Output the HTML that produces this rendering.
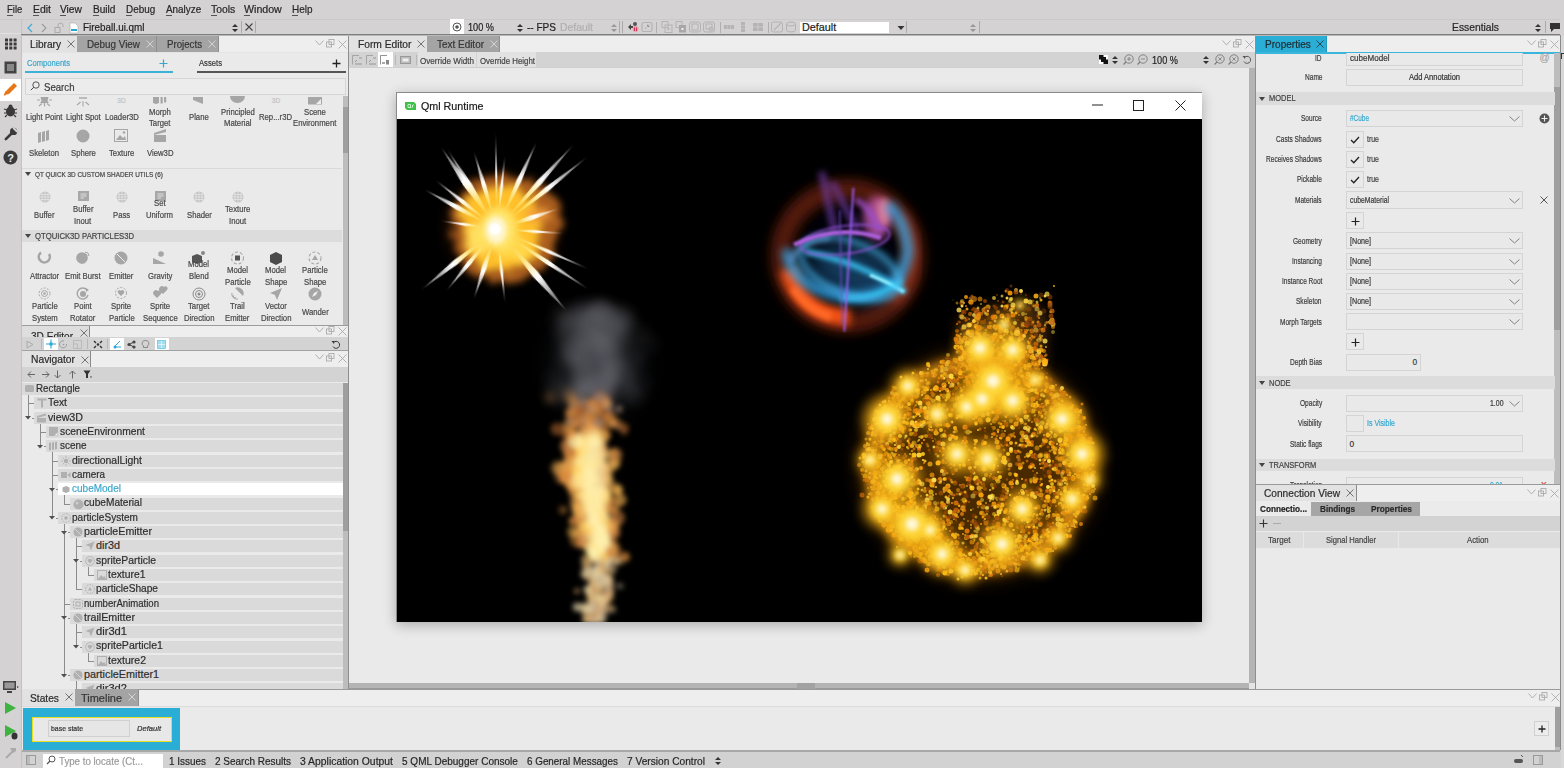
<!DOCTYPE html><html><head><meta charset="utf-8"><style>
*{margin:0;padding:0;box-sizing:border-box}
html,body{width:1564px;height:768px;overflow:hidden;background:#d4d2d3;font-family:"Liberation Sans",sans-serif}
.a{position:absolute}
.t{position:absolute;white-space:nowrap;line-height:1;transform-origin:0 0;-webkit-text-stroke:0.2px currentColor}
svg{position:absolute;overflow:visible}
</style></head><body>
<div class="a" style="left:0px;top:0px;width:1564px;height:19px;background:#d4d2d3;"></div>
<div class="t" style="left:7.20px;top:4.16px;font-size:10.8px;color:#262626;transform:scaleX(0.879);">File</div>
<div class="a" style="left:7.2px;top:14.5px;width:6px;height:1px;background:#555;"></div>
<div class="t" style="left:32.70px;top:4.16px;font-size:10.8px;color:#262626;transform:scaleX(0.967);">Edit</div>
<div class="a" style="left:32.7px;top:14.5px;width:6px;height:1px;background:#555;"></div>
<div class="t" style="left:60.30px;top:4.16px;font-size:10.8px;color:#262626;transform:scaleX(0.943);">View</div>
<div class="a" style="left:60.3px;top:14.5px;width:6px;height:1px;background:#555;"></div>
<div class="t" style="left:93.00px;top:4.16px;font-size:10.8px;color:#262626;transform:scaleX(0.937);">Build</div>
<div class="a" style="left:93px;top:14.5px;width:6px;height:1px;background:#555;"></div>
<div class="t" style="left:126.20px;top:4.16px;font-size:10.8px;color:#262626;transform:scaleX(0.917);">Debug</div>
<div class="a" style="left:126.2px;top:14.5px;width:6px;height:1px;background:#555;"></div>
<div class="t" style="left:165.60px;top:4.16px;font-size:10.8px;color:#262626;transform:scaleX(0.916);">Analyze</div>
<div class="a" style="left:165.6px;top:14.5px;width:6px;height:1px;background:#555;"></div>
<div class="t" style="left:210.60px;top:4.16px;font-size:10.8px;color:#262626;transform:scaleX(0.960);">Tools</div>
<div class="a" style="left:210.6px;top:14.5px;width:6px;height:1px;background:#555;"></div>
<div class="t" style="left:244.40px;top:4.16px;font-size:10.8px;color:#262626;transform:scaleX(0.984);">Window</div>
<div class="a" style="left:244.4px;top:14.5px;width:6px;height:1px;background:#555;"></div>
<div class="t" style="left:292.40px;top:4.16px;font-size:10.8px;color:#262626;transform:scaleX(0.923);">Help</div>
<div class="a" style="left:292.4px;top:14.5px;width:6px;height:1px;background:#555;"></div>
<div class="a" style="left:0px;top:19px;width:1564px;height:1px;background:#cbc9ca;"></div>
<div class="a" style="left:0px;top:33px;width:21px;height:1px;background:#e2e2e2;"></div>
<div class="a" style="left:21px;top:19px;width:1px;height:16px;background:#c4c4c4;"></div>
<div class="a" style="left:21px;top:34px;width:1543px;height:1px;background:#7d7d7d;"></div>
<div class="a" style="left:21px;top:35px;width:1543px;height:1px;background:#b8b8b8;"></div>
<svg style="left:26px;top:23px;" width="8" height="10" viewBox="0 0 8 10"><path d="M6 1 L2 5 L6 9" stroke="#3fa9d8" stroke-width="1.2" fill="none"/></svg>
<svg style="left:40px;top:23px;" width="8" height="10" viewBox="0 0 8 10"><path d="M2 1 L6 5 L2 9" stroke="#9a9a9a" stroke-width="1.1" fill="none"/></svg>
<svg style="left:54px;top:23px;" width="10" height="10" viewBox="0 0 10 10"><rect x="1" y="4.5" width="5" height="5" fill="none" stroke="#aaa"/><path d="M4 4 V2.5 A2.5 2.5 0 0 1 9 2.5 V4" stroke="#aaa" fill="none"/></svg>
<svg style="left:69px;top:22px;" width="10" height="12" viewBox="0 0 10 12"><path d="M1 1 H6 L9 4 V11 H1 Z" fill="#fff" stroke="#aaa" stroke-width=".6"/><rect x="2" y="7" width="6" height="2" fill="#2aa4c8"/></svg>
<div class="t" style="left:83.00px;top:22.16px;font-size:10.8px;color:#222;transform:scaleX(0.915);">Fireball.ui.qml</div>
<svg style="left:231px;top:23px;" width="8" height="10" viewBox="0 0 8 10"><path d="M1 4 L4 1 L7 4 Z M1 6 L4 9 L7 6 Z" fill="#333"/></svg>
<div class="a" style="left:241px;top:21px;width:1px;height:12px;background:#aaa;"></div>
<svg style="left:245px;top:23px;" width="8" height="8" viewBox="0 0 8 8"><path d="M0.5 0.5 L7.5 7.5 M7.5 0.5 L0.5 7.5" stroke="#444" stroke-width="1.1"/></svg>
<div class="a" style="left:255px;top:21px;width:1px;height:12px;background:#aaa;"></div>
<div class="a" style="left:450px;top:19px;width:14px;height:15px;background:#ffffff;"></div>
<svg style="left:452px;top:22px;" width="10" height="10" viewBox="0 0 10 10"><circle cx="5" cy="5" r="4" fill="none" stroke="#555" stroke-width="1"/><circle cx="5" cy="5" r="1.8" fill="#555"/></svg>
<div class="t" style="left:468.00px;top:21.86px;font-size:10.8px;color:#222;transform:scaleX(0.849);">100 %</div>
<svg style="left:516px;top:23px;" width="8" height="10" viewBox="0 0 8 10"><path d="M1 4 L4 1 L7 4 Z M1 6 L4 9 L7 6 Z" fill="#333"/></svg>
<div class="t" style="left:527.00px;top:21.86px;font-size:10.8px;color:#222;transform:scaleX(0.930);">-- FPS</div>
<div class="t" style="left:560.00px;top:21.86px;font-size:10.8px;color:#b0b0b0;transform:scaleX(0.964);">Default</div>
<svg style="left:610px;top:23px;" width="8" height="10" viewBox="0 0 8 10"><path d="M1 4 L4 1 L7 4 Z M1 6 L4 9 L7 6 Z" fill="#999"/></svg>
<div class="a" style="left:619px;top:21px;width:1px;height:12px;background:#aaa;"></div>
<div class="a" style="left:622px;top:21px;width:1px;height:12px;background:#aaa;"></div>
<svg style="left:626.6px;top:21px;" width="12" height="12" viewBox="0 0 12 12"><path d="M1 6 L4 3 V5 H6 V7 H4 V9 Z" fill="#444"/><circle cx="8" cy="3" r="2" fill="#555"/><circle cx="8.5" cy="8" r="3" fill="#e8a0a0"/><path d="M7.5 6.5 V10 M9.5 6.5 V10" stroke="#d03060" stroke-width="1"/></svg>
<svg style="left:640.7px;top:21px;" width="12" height="12" viewBox="0 0 12 12"><rect x="1" y="1.5" width="10" height="9" rx="1.5" fill="none" stroke="#b4b4b4" stroke-width="1.2"/><path d="M4 8 L8 4 M6 4 H8 V6" stroke="#b4b4b4" stroke-width="1"/></svg>
<div class="a" style="left:656px;top:22px;width:1px;height:11px;background:#b0b0b0;"></div>
<svg style="left:660.5px;top:21px;" width="12" height="12" viewBox="0 0 12 12"><rect x="1" y="0.5" width="6" height="6" fill="none" stroke="#b4b4b4"/><rect x="4" y="4" width="7" height="7.5" fill="none" stroke="#b4b4b4"/><rect x="6.5" y="7" width="2" height="2" fill="#b4b4b4"/></svg>
<svg style="left:674.6px;top:21px;" width="12" height="12" viewBox="0 0 12 12"><rect x="1" y="0.5" width="6" height="6" fill="none" stroke="#b4b4b4"/><rect x="4" y="4" width="7" height="7.5" fill="#a8a8a8"/><rect x="6.5" y="7" width="2" height="2" fill="#eee"/></svg>
<svg style="left:688.6px;top:21px;" width="12" height="12" viewBox="0 0 12 12"><rect x="0.5" y="1" width="11" height="10" rx="2" fill="none" stroke="#b4b4b4"/><rect x="3" y="3" width="6" height="6" fill="none" stroke="#b4b4b4"/></svg>
<svg style="left:702.7px;top:21px;" width="12" height="12" viewBox="0 0 12 12"><rect x="0.5" y="1" width="11" height="10" rx="2" fill="none" stroke="#b4b4b4"/><rect x="3" y="3" width="6" height="5" fill="none" stroke="#b4b4b4"/><circle cx="8" cy="8" r="2" fill="none" stroke="#b4b4b4"/></svg>
<div class="a" style="left:719.6px;top:22px;width:1px;height:11px;background:#b0b0b0;"></div>
<svg style="left:723.2px;top:21px;" width="12" height="12" viewBox="0 0 12 12"><rect x="1" y="4" width="10" height="4" fill="#b4b4b4"/><path d="M4.3 4 V8 M7.6 4 V8" stroke="#d4d2d3" stroke-width="0.6"/></svg>
<svg style="left:737.2px;top:21px;" width="12" height="12" viewBox="0 0 12 12"><rect x="4" y="1" width="4" height="10" fill="#b4b4b4"/><path d="M4 4.3 H8 M4 7.6 H8" stroke="#d4d2d3" stroke-width="0.6"/></svg>
<svg style="left:752px;top:21px;" width="12" height="12" viewBox="0 0 12 12"><rect x="1" y="2" width="10" height="8" fill="#b4b4b4"/><path d="M6 2 V10 M1 6 H11" stroke="#d4d2d3" stroke-width="0.8"/></svg>
<div class="a" style="left:767.5px;top:22px;width:1px;height:11px;background:#b0b0b0;"></div>
<svg style="left:771px;top:21px;" width="12" height="12" viewBox="0 0 12 12"><rect x="0.5" y="1" width="11" height="10" rx="2" fill="none" stroke="#b4b4b4"/><path d="M3 9 L10 2" stroke="#b4b4b4" stroke-width="1.1"/></svg>
<svg style="left:784.5px;top:21px;" width="12" height="12" viewBox="0 0 12 12"><path d="M1.5 3 V9 Q1.5 11 6 11 Q10.5 11 10.5 9 V3" fill="none" stroke="#b4b4b4"/><ellipse cx="6" cy="3" rx="4.5" ry="2" fill="none" stroke="#b4b4b4"/></svg>
<div class="a" style="left:800px;top:22px;width:89px;height:11px;background:#ffffff;"></div>
<div class="t" style="left:802.00px;top:21.86px;font-size:10.8px;color:#222;">Default</div>
<svg style="left:897px;top:25px;" width="8" height="6" viewBox="0 0 8 6"><path d="M0.5 1 L7.5 1 L4 5 Z" fill="#333"/></svg>
<div class="a" style="left:906px;top:21px;width:1px;height:12px;background:#aaa;"></div>
<svg style="left:969px;top:23px;" width="8" height="10" viewBox="0 0 8 10"><path d="M1 4 L4 1 L7 4 Z M1 6 L4 9 L7 6 Z" fill="#999"/></svg>
<div class="a" style="left:979px;top:21px;width:1px;height:12px;background:#aaa;"></div>
<div class="t" style="left:1452.00px;top:21.86px;font-size:10.8px;color:#262626;transform:scaleX(0.955);">Essentials</div>
<svg style="left:1534px;top:23px;" width="8" height="10" viewBox="0 0 8 10"><path d="M1 4 L4 1 L7 4 Z M1 6 L4 9 L7 6 Z" fill="#333"/></svg>
<div class="a" style="left:1545px;top:21px;width:1px;height:12px;background:#aaa;"></div>
<svg style="left:1549px;top:22px;" width="12" height="11" viewBox="0 0 12 11"><path d="M1 1 H11 V7 H5 L2 10 V7 H1 Z" fill="#333"/></svg>
<div class="a" style="left:1560px;top:19px;width:4px;height:749px;background:#d4d2d3;"></div>
<div class="a" style="left:0px;top:35px;width:21px;height:733px;background:#d4d2d3;"></div>
<div class="a" style="left:21px;top:35px;width:1px;height:733px;background:#c2c2c2;"></div>
<svg style="left:4px;top:38px;" width="14" height="12" viewBox="0 0 14 12"><rect x="1.0" y="0.5" width="3" height="3" fill="#3a3a3a"/><rect x="1.0" y="4.5" width="3" height="3" fill="#3a3a3a"/><rect x="1.0" y="8.5" width="3" height="3" fill="#3a3a3a"/><rect x="5.3" y="0.5" width="3" height="3" fill="#3a3a3a"/><rect x="5.3" y="4.5" width="3" height="3" fill="#3a3a3a"/><rect x="5.3" y="8.5" width="3" height="3" fill="#3a3a3a"/><rect x="9.6" y="0.5" width="3" height="3" fill="#3a3a3a"/><rect x="9.6" y="4.5" width="3" height="3" fill="#3a3a3a"/><rect x="9.6" y="8.5" width="3" height="3" fill="#3a3a3a"/></svg>
<svg style="left:4px;top:61px;" width="13" height="13" viewBox="0 0 13 13"><rect x="0.5" y="0.5" width="12" height="12" fill="#444"/><rect x="3" y="3" width="7" height="7" fill="#888"/></svg>
<div class="a" style="left:0px;top:79px;width:21px;height:22px;background:#ffffff;"></div>
<svg style="left:3px;top:81px;" width="15" height="16" viewBox="0 0 15 16"><path d="M2 14 L3 10 L11 2 L14 5 L6 13 Z" fill="#e8771a"/><path d="M1.5 14.5 L3 10.5" stroke="#e8771a" stroke-width="1.5"/></svg>
<svg style="left:4px;top:104px;" width="13" height="13" viewBox="0 0 13 13"><ellipse cx="6.5" cy="7.5" rx="4.5" ry="5" fill="#3a3a3a"/><circle cx="6.5" cy="2.5" r="2" fill="#3a3a3a"/><path d="M0 5 L3 6 M13 5 L10 6 M0 9 L2.5 9 M13 9 L10.5 9 M1 13 L3 11 M12 13 L10 11" stroke="#3a3a3a" stroke-width="1.2"/></svg>
<svg style="left:4px;top:127px;" width="14" height="14" viewBox="0 0 14 14"><path d="M1.8 12.2 L7.5 6.5" stroke="#3a3a3a" stroke-width="2.6" stroke-linecap="round"/><circle cx="9.6" cy="4.4" r="3.6" fill="#3a3a3a"/><path d="M10 0 L14 4 L12.5 5.5 L8.5 1.5 Z" fill="#d4d2d3"/></svg>
<svg style="left:3px;top:150px;" width="15" height="15" viewBox="0 0 15 15"><circle cx="7.5" cy="7.5" r="7" fill="#3a3a3a"/><text x="7.5" y="11.5" font-size="11" font-weight="bold" text-anchor="middle" fill="#eaeaea" font-family="Liberation Sans">?</text></svg>
<svg style="left:2px;top:680px;" width="16" height="14" viewBox="0 0 16 14"><rect x="1" y="1" width="13" height="9" fill="#444"/><rect x="2.5" y="2.5" width="10" height="6" fill="#999"/><rect x="5" y="11" width="5" height="2" fill="#444"/><path d="M15 6 L17 7 L15 8Z" fill="#444"/></svg>
<svg style="left:4px;top:701px;" width="13" height="14" viewBox="0 0 13 14"><path d="M1 1 L12 7 L1 13 Z" fill="#3fb33f"/></svg>
<svg style="left:4px;top:724px;" width="14" height="16" viewBox="0 0 14 16"><path d="M1 1 L12 7 L1 13 Z" fill="#3fb33f"/><ellipse cx="10.5" cy="12" rx="3" ry="3.5" fill="#333"/></svg>
<svg style="left:4px;top:746px;" width="13" height="14" viewBox="0 0 13 14"><path d="M2 12 L9 5" stroke="#aaa" stroke-width="2"/><path d="M6 2 L12 2 L12 5 L9 7 Z" fill="#aaa"/></svg>
<div class="a" style="left:22px;top:750px;width:1538px;height:2px;background:#a8a8a8;"></div>
<div class="a" style="left:22px;top:752px;width:1538px;height:16px;background:#d2d2d2;"></div>
<svg style="left:26px;top:755px;" width="10" height="10" viewBox="0 0 10 10"><rect x="0.5" y="0.5" width="9" height="9" fill="none" stroke="#999"/><rect x="1" y="1" width="3" height="8" fill="#bbb"/></svg>
<div class="a" style="left:43px;top:754px;width:120px;height:14px;background:#ffffff;"></div>
<svg style="left:46px;top:755px;" width="10" height="10" viewBox="0 0 10 10"><circle cx="6" cy="4" r="3" fill="none" stroke="#555" stroke-width="1"/><path d="M4 6 L1 9" stroke="#555" stroke-width="1.3"/></svg>
<div class="t" style="left:59.00px;top:755.86px;font-size:10.8px;color:#9a9a9a;transform:scaleX(0.897);">Type to locate (Ct...</div>
<div class="t" style="left:169.00px;top:755.86px;font-size:10.8px;color:#262626;transform:scaleX(0.920);">1 Issues</div>
<div class="t" style="left:215.00px;top:755.86px;font-size:10.8px;color:#262626;transform:scaleX(0.924);">2 Search Results</div>
<div class="t" style="left:300.00px;top:755.86px;font-size:10.8px;color:#262626;transform:scaleX(0.962);">3 Application Output</div>
<div class="t" style="left:402.00px;top:755.86px;font-size:10.8px;color:#262626;transform:scaleX(0.927);">5 QML Debugger Console</div>
<div class="t" style="left:527.00px;top:755.86px;font-size:10.8px;color:#262626;transform:scaleX(0.913);">6 General Messages</div>
<div class="t" style="left:627.00px;top:755.86px;font-size:10.8px;color:#262626;transform:scaleX(0.941);">7 Version Control</div>
<svg style="left:714px;top:756px;" width="8" height="10" viewBox="0 0 8 10"><path d="M1 4 L4 1 L7 4 Z M1 6 L4 9 L7 6 Z" fill="#333"/></svg>
<svg style="left:1513px;top:754px;" width="12" height="10" viewBox="0 0 12 10"><rect x="1" y="5" width="9" height="4" rx="2" fill="#555"/><path d="M8 1 L10 3" stroke="#555"/></svg>
<svg style="left:1533px;top:755px;" width="10" height="10" viewBox="0 0 10 10"><rect x="0.5" y="0.5" width="9" height="9" fill="none" stroke="#999"/><rect x="6" y="1" width="3" height="8" fill="#bbb"/></svg>
<div class="a" style="left:22px;top:36px;width:326px;height:289px;background:#eaeaea;"></div>
<div class="a" style="left:22px;top:36px;width:326px;height:16px;background:#eeeeee;"></div>
<div class="a" style="left:22px;top:36px;width:55px;height:16px;background:#e2e2e2;"></div>
<div class="t" style="left:30.00px;top:39.36px;font-size:10.8px;color:#2a2a2a;transform:scaleX(0.939);">Library</div>
<svg style="left:67px;top:40px;" width="8" height="8" viewBox="0 0 8 8"><path d="M0.5 0.5 L7.5 7.5 M7.5 0.5 L0.5 7.5" stroke="#666" stroke-width="0.9"/></svg>
<div class="a" style="left:77px;top:36px;width:80px;height:16px;background:#a4a4a4;"></div>
<div class="a" style="left:156px;top:36px;width:1px;height:16px;background:#8f8f8f;"></div>
<div class="t" style="left:86.50px;top:39.36px;font-size:10.8px;color:#353535;transform:scaleX(0.913);">Debug View</div>
<svg style="left:146px;top:40px;" width="8" height="8" viewBox="0 0 8 8"><path d="M0.5 0.5 L7.5 7.5 M7.5 0.5 L0.5 7.5" stroke="#d8d8d8" stroke-width="0.9"/></svg>
<div class="a" style="left:157px;top:36px;width:62px;height:16px;background:#a4a4a4;"></div>
<div class="a" style="left:218px;top:36px;width:1px;height:16px;background:#8f8f8f;"></div>
<div class="t" style="left:166.50px;top:39.36px;font-size:10.8px;color:#353535;transform:scaleX(0.897);">Projects</div>
<svg style="left:208px;top:40px;" width="8" height="8" viewBox="0 0 8 8"><path d="M0.5 0.5 L7.5 7.5 M7.5 0.5 L0.5 7.5" stroke="#d8d8d8" stroke-width="0.9"/></svg>
<svg style="left:315px;top:40px;" width="9" height="6" viewBox="0 0 9 6"><path d="M0.5 0.5 L4.5 5 L8.5 0.5" stroke="#aaa" fill="none" stroke-width="0.9"/></svg>
<svg style="left:326px;top:39px;" width="9" height="9" viewBox="0 0 9 9"><rect x="0.5" y="3" width="5" height="5" fill="none" stroke="#aaa" stroke-width="0.9"/><rect x="3" y="0.5" width="5" height="5" fill="none" stroke="#aaa" stroke-width="0.9"/></svg>
<svg style="left:337.5px;top:39.5px;" width="9" height="9" viewBox="0 0 9 9"><path d="M0.5 0.5 L8.5 8.5 M8.5 0.5 L0.5 8.5" stroke="#aaa" stroke-width="0.9"/></svg>
<div class="a" style="left:22px;top:52px;width:326px;height:1px;background:#e4e4e4;"></div>
<div class="t" style="left:27.00px;top:59.30px;font-size:8.5px;color:#3aa6cc;transform:scaleX(0.892);">Components</div>
<svg style="left:159px;top:59px;" width="9" height="9" viewBox="0 0 9 9"><path d="M4.5 0.5 V8.5 M0.5 4.5 H8.5" stroke="#3aa6cc" stroke-width="1.2"/></svg>
<div class="a" style="left:25px;top:71px;width:148px;height:2px;background:#3db2d8;"></div>
<div class="t" style="left:199.00px;top:59.30px;font-size:8.5px;color:#3a3a3a;transform:scaleX(0.902);">Assets</div>
<svg style="left:332px;top:59px;" width="9" height="9" viewBox="0 0 9 9"><path d="M4.5 0.5 V8.5 M0.5 4.5 H8.5" stroke="#222" stroke-width="1.3"/></svg>
<div class="a" style="left:197px;top:71px;width:149px;height:2px;background:#555555;"></div>
<div class="a" style="left:25px;top:78px;width:321px;height:17px;background:#ececec;border:1px solid #d6d6d6;"></div>
<svg style="left:30px;top:81px;" width="10" height="10" viewBox="0 0 10 10"><circle cx="6" cy="4" r="3.2" fill="none" stroke="#444" stroke-width="0.9"/><path d="M3.8 6.2 L0.8 9.2" stroke="#444" stroke-width="1"/></svg>
<div class="t" style="left:43.50px;top:82.36px;font-size:10.8px;color:#3a3a3a;transform:scaleX(0.891);">Search</div>
<div class="a" style="left:343px;top:96px;width:6px;height:229px;background:#bdbdbd;"></div>
<div class="a" style="left:343px;top:107px;width:6px;height:46px;background:#9f9f9f;"></div>
<div class="a" style="left:22px;top:96px;width:320px;height:229px;overflow:hidden">
<div class="a" style="left:-22px;top:-96px;width:1564px;height:768px">
<svg style="left:37px;top:97px;" width="15" height="10" viewBox="0 0 15 10"><path d="M3.5 0 H11.5 L10.5 4 L12 6 H3 L4.5 4 Z" fill="#a6a6a6"/><path d="M0 3 H3 M12 3 H15 M2 9 L5 6.5 M13 9 L10 6.5 M7.5 6 V9.5" stroke="#a6a6a6" stroke-width="1.2"/></svg>
<svg style="left:76px;top:97px;" width="14" height="10" viewBox="0 0 14 10"><path d="M7 4 V9.5 M1 8 L4.5 5 M13 8 L9.5 5" stroke="#a6a6a6" stroke-width="1.1"/><path d="M3 1 H11" stroke="#a6a6a6" stroke-width="1.4"/></svg>
<div class="t" style="left:117.35px;top:97.50px;font-size:6.5px;color:#c4c4c4;">3D</div>
<svg style="left:153px;top:97px;" width="14" height="8" viewBox="0 0 14 8"><path d="M0 0 H6 V6 L3 7 L0 6 Z" fill="#a6a6a6"/><rect x="7.5" y="0" width="2.2" height="6.5" fill="#a6a6a6"/><rect x="11" y="0" width="2.2" height="5.5" fill="#a6a6a6"/></svg>
<svg style="left:193px;top:97px;" width="11" height="7" viewBox="0 0 11 7"><path d="M0 0 H10 V7 L0 3 Z" fill="#a6a6a6"/></svg>
<svg style="left:230px;top:96px;" width="15" height="8" viewBox="0 0 15 8"><path d="M0 0 A7.5 7 0 0 0 15 0 Z" fill="#a6a6a6"/></svg>
<div class="t" style="left:271.85px;top:97.50px;font-size:6.5px;color:#c4c4c4;">3D</div>
<svg style="left:308px;top:97px;" width="14" height="8" viewBox="0 0 14 8"><rect x="0" y="0" width="14" height="7.5" fill="#a6a6a6"/><path d="M8 7 L13 2 V7 Z" fill="#eee"/></svg>
<div class="t" style="left:26.26px;top:113.47px;font-size:8.3px;color:#484848;transform:scaleX(0.930);">Light Point</div>
<div class="t" style="left:65.62px;top:113.47px;font-size:8.3px;color:#484848;transform:scaleX(0.930);">Light Spot</div>
<div class="t" style="left:104.55px;top:113.47px;font-size:8.3px;color:#484848;transform:scaleX(0.930);">Loader3D</div>
<div class="t" style="left:149.06px;top:107.62px;font-size:8.3px;color:#484848;transform:scaleX(0.930);">Morph</div>
<div class="t" style="left:149.27px;top:119.32px;font-size:8.3px;color:#484848;transform:scaleX(0.930);">Target</div>
<div class="t" style="left:189.13px;top:113.47px;font-size:8.3px;color:#484848;transform:scaleX(0.930);">Plane</div>
<div class="t" style="left:220.55px;top:107.62px;font-size:8.3px;color:#484848;transform:scaleX(0.930);">Principled</div>
<div class="t" style="left:223.77px;top:119.32px;font-size:8.3px;color:#484848;transform:scaleX(0.930);">Material</div>
<div class="t" style="left:259.48px;top:113.47px;font-size:8.3px;color:#484848;transform:scaleX(0.930);">Rep...r3D</div>
<div class="t" style="left:304.06px;top:107.62px;font-size:8.3px;color:#484848;transform:scaleX(0.930);">Scene</div>
<div class="t" style="left:293.33px;top:119.32px;font-size:8.3px;color:#484848;transform:scaleX(0.930);">Environment</div>
<svg style="left:38px;top:130px;" width="13" height="13" viewBox="0 0 13 13"><path d="M0 3 L3 2 V12 L0 13 Z M4 2 L7 1 V11 L4 12 Z M8 1 L11 0 V10 L8 11 Z" fill="#a6a6a6"/></svg>
<svg style="left:76px;top:129px;" width="14" height="14" viewBox="0 0 14 14"><circle cx="7" cy="7" r="6.5" fill="#a6a6a6"/></svg>
<svg style="left:114px;top:129px;" width="14" height="14" viewBox="0 0 14 14"><rect x="0.5" y="0.5" width="13" height="12" fill="none" stroke="#a6a6a6"/><path d="M2 11 L6 6 L9 9 L11 7 L12 11 Z" fill="#a6a6a6"/><circle cx="10" cy="3.5" r="1.3" fill="#a6a6a6"/></svg>
<svg style="left:154px;top:129px;" width="13" height="14" viewBox="0 0 13 14"><path d="M0 4 L12 0 V3 L0 6 Z" fill="#a6a6a6"/><rect x="0" y="6" width="12" height="7" fill="#a6a6a6"/></svg>
<div class="t" style="left:29.48px;top:149.17px;font-size:8.3px;color:#484848;transform:scaleX(0.930);">Skeleton</div>
<div class="t" style="left:70.55px;top:149.17px;font-size:8.3px;color:#484848;transform:scaleX(0.930);">Sphere</div>
<div class="t" style="left:108.84px;top:149.17px;font-size:8.3px;color:#484848;transform:scaleX(0.930);">Texture</div>
<div class="t" style="left:146.77px;top:149.17px;font-size:8.3px;color:#484848;transform:scaleX(0.930);">View3D</div>
<div class="a" style="left:22px;top:168px;width:320px;height:1px;background:#dadada;"></div>
<svg style="left:25px;top:172px;" width="6" height="4" viewBox="0 0 6 4"><path d="M0 0 H6 L3 4 Z" fill="#444"/></svg>
<div class="t" style="left:35.00px;top:170.87px;font-size:7.6px;color:#444;transform:scaleX(0.841);">QT QUICK 3D CUSTOM SHADER UTILS (6)</div>
<svg style="left:38.5px;top:191px;" width="12" height="12" viewBox="0 0 12 12"><circle cx="6" cy="6" r="5.5" fill="#c4c4c4"/><path d="M6 0.5 V11.5 M0.5 6 H11.5 M3 1.5 V10.5 M9 1.5 V10.5 M1.5 3.5 H10.5 M1.5 8.5 H10.5" stroke="#eee" stroke-width="0.6"/></svg>
<svg style="left:77.5px;top:191.0px;" width="11" height="11" viewBox="0 0 11 11"><rect x="0" y="0" width="11" height="10" fill="#a8a8a8"/><path d="M2.5 3 H8.5 M2.5 5 H8.5 M2.5 7 H6" stroke="#eee" stroke-width="0.8"/></svg>
<svg style="left:115.5px;top:191px;" width="12" height="12" viewBox="0 0 12 12"><circle cx="6" cy="6" r="5.5" fill="#c4c4c4"/><path d="M6 0.5 V11.5 M0.5 6 H11.5 M3 1.5 V10.5 M9 1.5 V10.5 M1.5 3.5 H10.5 M1.5 8.5 H10.5" stroke="#eee" stroke-width="0.6"/></svg>
<svg style="left:154.5px;top:191.0px;" width="11" height="11" viewBox="0 0 11 11"><rect x="0" y="0" width="11" height="10" fill="#a8a8a8"/><path d="M2.5 3 H8.5 M2.5 5 H8.5 M2.5 7 H6" stroke="#eee" stroke-width="0.8"/></svg>
<svg style="left:193px;top:191px;" width="12" height="12" viewBox="0 0 12 12"><circle cx="6" cy="6" r="5.5" fill="#c4c4c4"/><path d="M6 0.5 V11.5 M0.5 6 H11.5 M3 1.5 V10.5 M9 1.5 V10.5 M1.5 3.5 H10.5 M1.5 8.5 H10.5" stroke="#eee" stroke-width="0.6"/></svg>
<svg style="left:231.5px;top:191px;" width="12" height="12" viewBox="0 0 12 12"><circle cx="6" cy="6" r="5.5" fill="#c4c4c4"/><path d="M6 0.5 V11.5 M0.5 6 H11.5 M3 1.5 V10.5 M9 1.5 V10.5 M1.5 3.5 H10.5 M1.5 8.5 H10.5" stroke="#eee" stroke-width="0.6"/></svg>
<div class="t" style="left:34.27px;top:210.67px;font-size:8.3px;color:#484848;transform:scaleX(0.930);">Buffer</div>
<div class="t" style="left:72.77px;top:204.82px;font-size:8.3px;color:#484848;transform:scaleX(0.930);">Buffer</div>
<div class="t" style="left:74.42px;top:216.52px;font-size:8.3px;color:#484848;transform:scaleX(0.930);">Inout</div>
<div class="t" style="left:112.92px;top:210.67px;font-size:8.3px;color:#484848;transform:scaleX(0.930);">Pass</div>
<div class="t" style="left:154.21px;top:198.82px;font-size:8.3px;color:#484848;transform:scaleX(0.930);">Set</div>
<div class="t" style="left:146.49px;top:210.52px;font-size:8.3px;color:#484848;transform:scaleX(0.930);">Uniform</div>
<div class="t" style="left:186.55px;top:210.67px;font-size:8.3px;color:#484848;transform:scaleX(0.930);">Shader</div>
<div class="t" style="left:224.84px;top:204.82px;font-size:8.3px;color:#484848;transform:scaleX(0.930);">Texture</div>
<div class="t" style="left:228.92px;top:216.52px;font-size:8.3px;color:#484848;transform:scaleX(0.930);">Inout</div>
<div class="a" style="left:22px;top:229.5px;width:320px;height:12.5px;background:#dcdcdc;"></div>
<svg style="left:25px;top:234px;" width="6" height="4" viewBox="0 0 6 4"><path d="M0 0 H6 L3 4 Z" fill="#444"/></svg>
<div class="t" style="left:35.00px;top:232.00px;font-size:8.5px;color:#444;transform:scaleX(0.906);">QTQUICK3D PARTICLES3D</div>
<svg style="left:37px;top:251px;" width="14" height="13" viewBox="0 0 14 13"><path d="M12 3 A5.5 5.5 0 1 1 4 1.5" stroke="#a6a6a6" stroke-width="2.6" fill="none"/></svg>
<svg style="left:76px;top:251px;" width="14" height="13" viewBox="0 0 14 13"><path d="M1 5 A6 6 0 0 0 9 12 Z" fill="#a6a6a6"/><path d="M1 4.5 L9 12.5 A6.5 6.5 0 0 0 1 4.5" fill="#a6a6a6"/><circle cx="6" cy="7" r="5.8" fill="#a6a6a6"/><path d="M9 1 A4 4 0 0 1 13 5 M9 3 A2 2 0 0 1 11 5" stroke="#a6a6a6" fill="none"/></svg>
<svg style="left:114px;top:251px;" width="14" height="14" viewBox="0 0 14 14"><circle cx="7" cy="7" r="6.5" fill="#a6a6a6"/><path d="M3 3 L11 11" stroke="#eee" stroke-width="1"/></svg>
<svg style="left:153px;top:251px;" width="14" height="13" viewBox="0 0 14 13"><circle cx="8" cy="3" r="2.8" fill="#a6a6a6"/><path d="M0 13 V7 L13 13 Z" fill="#a6a6a6"/></svg>
<svg style="left:191px;top:251px;" width="15" height="13" viewBox="0 0 15 13"><path d="M1 5 L6 3 L11 5 V11 L6 13 L1 11 Z" fill="#555"/><circle cx="12" cy="2" r="2" fill="#888"/></svg>
<svg style="left:230px;top:251px;" width="15" height="14" viewBox="0 0 15 14"><circle cx="7.5" cy="7" r="6" fill="none" stroke="#a6a6a6" stroke-width="1.1" stroke-dasharray="3 2"/><rect x="5" y="4.5" width="5" height="5" fill="#555"/></svg>
<svg style="left:269px;top:251px;" width="14" height="14" viewBox="0 0 14 14"><path d="M1 4 L7 1 L13 4 V11 L7 14 L1 11 Z" fill="#4a4a4a"/></svg>
<svg style="left:308px;top:251px;" width="14" height="14" viewBox="0 0 14 14"><circle cx="7" cy="7" r="6" fill="none" stroke="#a6a6a6" stroke-width="1.1" stroke-dasharray="3 2"/><path d="M4 9 L7 4 L10 9 Z" fill="#a6a6a6"/></svg>
<div class="t" style="left:29.92px;top:271.77px;font-size:8.3px;color:#484848;transform:scaleX(0.930);">Attractor</div>
<div class="t" style="left:65.20px;top:271.77px;font-size:8.3px;color:#484848;transform:scaleX(0.930);">Emit Burst</div>
<div class="t" style="left:109.28px;top:271.77px;font-size:8.3px;color:#484848;transform:scaleX(0.930);">Emitter</div>
<div class="t" style="left:147.78px;top:271.77px;font-size:8.3px;color:#484848;transform:scaleX(0.930);">Gravity</div>
<div class="t" style="left:188.49px;top:259.92px;font-size:8.3px;color:#484848;transform:scaleX(0.930);">Model</div>
<div class="t" style="left:189.13px;top:271.62px;font-size:8.3px;color:#484848;transform:scaleX(0.930);">Blend</div>
<div class="t" style="left:226.99px;top:265.92px;font-size:8.3px;color:#484848;transform:scaleX(0.930);">Model</div>
<div class="t" style="left:224.63px;top:277.62px;font-size:8.3px;color:#484848;transform:scaleX(0.930);">Particle</div>
<div class="t" style="left:265.49px;top:265.92px;font-size:8.3px;color:#484848;transform:scaleX(0.930);">Model</div>
<div class="t" style="left:264.84px;top:277.62px;font-size:8.3px;color:#484848;transform:scaleX(0.930);">Shape</div>
<div class="t" style="left:302.13px;top:265.92px;font-size:8.3px;color:#484848;transform:scaleX(0.930);">Particle</div>
<div class="t" style="left:303.84px;top:277.62px;font-size:8.3px;color:#484848;transform:scaleX(0.930);">Shape</div>
<svg style="left:38px;top:287px;" width="13" height="13" viewBox="0 0 13 13"><circle cx="6.5" cy="6.5" r="5.5" fill="none" stroke="#a6a6a6" stroke-dasharray="2 1.5"/><circle cx="6.5" cy="6.5" r="3" fill="none" stroke="#a6a6a6"/><circle cx="6.5" cy="6.5" r="1.3" fill="#a6a6a6"/></svg>
<svg style="left:76px;top:287px;" width="14" height="13" viewBox="0 0 14 13"><path d="M11 3 A5.5 5.5 0 1 0 12 8" stroke="#a6a6a6" stroke-width="1.4" fill="none"/><circle cx="7" cy="7" r="3" fill="#a6a6a6"/><path d="M10 1 L13 3 L10 5 Z" fill="#a6a6a6"/></svg>
<svg style="left:114px;top:286px;" width="14" height="14" viewBox="0 0 14 14"><circle cx="7" cy="7" r="5.5" fill="none" stroke="#a6a6a6" stroke-dasharray="2 1.5"/><path d="M7 10 L4 7 A1.7 1.7 0 0 1 7 5 A1.7 1.7 0 0 1 10 7 Z" fill="#a6a6a6"/></svg>
<svg style="left:152px;top:286px;" width="16" height="14" viewBox="0 0 16 14"><path d="M2 9 L5 12 L9 8 A2 2 0 0 0 6 5 A2 2 0 0 0 2 9 Z M8 5 L11 8 L15 4 A2 2 0 0 0 12 1 A2 2 0 0 0 8 5 Z" fill="#a6a6a6"/></svg>
<svg style="left:192px;top:287px;" width="14" height="14" viewBox="0 0 14 14"><circle cx="7" cy="7" r="6" fill="none" stroke="#8a8a8a" stroke-width="1"/><circle cx="7" cy="7" r="3.5" fill="none" stroke="#8a8a8a"/><circle cx="7" cy="7" r="1.5" fill="#8a8a8a"/></svg>
<svg style="left:230px;top:287px;" width="14" height="13" viewBox="0 0 14 13"><path d="M5 1 A6 6 0 0 1 13 9 Z" fill="#a6a6a6"/><path d="M2 6 A5 5 0 0 0 8 12 M3 8 A3 3 0 0 0 6 11" stroke="#a6a6a6" fill="none"/></svg>
<svg style="left:269px;top:287px;" width="14" height="14" viewBox="0 0 14 14"><path d="M13 1 L1 6 L6 8 L8 13 Z" fill="#a6a6a6"/></svg>
<svg style="left:308px;top:287px;" width="14" height="14" viewBox="0 0 14 14"><circle cx="7" cy="7" r="6.5" fill="#a6a6a6"/><path d="M4 10 L6 6 L10 4 L8 8 Z" fill="#eee"/></svg>
<div class="t" style="left:31.63px;top:302.02px;font-size:8.3px;color:#484848;transform:scaleX(0.930);">Particle</div>
<div class="t" style="left:31.63px;top:313.72px;font-size:8.3px;color:#484848;transform:scaleX(0.930);">System</div>
<div class="t" style="left:74.20px;top:302.02px;font-size:8.3px;color:#484848;transform:scaleX(0.930);">Point</div>
<div class="t" style="left:70.34px;top:313.72px;font-size:8.3px;color:#484848;transform:scaleX(0.930);">Rotator</div>
<div class="t" style="left:111.42px;top:302.02px;font-size:8.3px;color:#484848;transform:scaleX(0.930);">Sprite</div>
<div class="t" style="left:108.63px;top:313.72px;font-size:8.3px;color:#484848;transform:scaleX(0.930);">Particle</div>
<div class="t" style="left:149.92px;top:302.02px;font-size:8.3px;color:#484848;transform:scaleX(0.930);">Sprite</div>
<div class="t" style="left:142.62px;top:313.72px;font-size:8.3px;color:#484848;transform:scaleX(0.930);">Sequence</div>
<div class="t" style="left:188.27px;top:302.02px;font-size:8.3px;color:#484848;transform:scaleX(0.930);">Target</div>
<div class="t" style="left:183.77px;top:313.72px;font-size:8.3px;color:#484848;transform:scaleX(0.930);">Direction</div>
<div class="t" style="left:230.14px;top:302.02px;font-size:8.3px;color:#484848;transform:scaleX(0.930);">Trail</div>
<div class="t" style="left:225.28px;top:313.72px;font-size:8.3px;color:#484848;transform:scaleX(0.930);">Emitter</div>
<div class="t" style="left:265.06px;top:302.02px;font-size:8.3px;color:#484848;transform:scaleX(0.930);">Vector</div>
<div class="t" style="left:260.77px;top:313.72px;font-size:8.3px;color:#484848;transform:scaleX(0.930);">Direction</div>
<div class="t" style="left:301.63px;top:307.57px;font-size:8.3px;color:#484848;transform:scaleX(0.930);">Wander</div>
</div></div>
<div class="a" style="left:22px;top:325px;width:326px;height:1px;background:#9c9c9c;"></div>
<div class="a" style="left:22px;top:326px;width:326px;height:11px;background:#eeeeee;"></div>
<div class="a" style="left:22px;top:326px;width:67px;height:11px;background:#dedede;"></div>
<div class="a" style="left:22px;top:326px;width:67px;height:11px;overflow:hidden">
<div class="a" style="left:-22px;top:-326px;width:400px;height:400px">
<div class="t" style="left:31.00px;top:330.86px;font-size:10.8px;color:#2a2a2a;transform:scaleX(0.933);">3D Editor</div>
</div></div>
<svg style="left:80px;top:329px;" width="8" height="8" viewBox="0 0 8 8"><path d="M0.5 0.5 L7.5 7.5 M7.5 0.5 L0.5 7.5" stroke="#666" stroke-width="0.9"/></svg>
<div class="a" style="left:89px;top:326px;width:1px;height:11px;background:#8a8a8a;"></div>
<svg style="left:315px;top:327px;" width="9" height="6" viewBox="0 0 9 6"><path d="M0.5 0.5 L4.5 5 L8.5 0.5" stroke="#aaa" fill="none" stroke-width="0.9"/></svg>
<svg style="left:326px;top:326px;" width="9" height="9" viewBox="0 0 9 9"><rect x="0.5" y="3" width="5" height="5" fill="none" stroke="#aaa" stroke-width="0.9"/><rect x="3" y="0.5" width="5" height="5" fill="none" stroke="#aaa" stroke-width="0.9"/></svg>
<svg style="left:337.5px;top:326.5px;" width="9" height="9" viewBox="0 0 9 9"><path d="M0.5 0.5 L8.5 8.5 M8.5 0.5 L0.5 8.5" stroke="#aaa" stroke-width="0.9"/></svg>
<div class="a" style="left:22px;top:337px;width:326px;height:13px;background:#d3d3d3;"></div>
<svg style="left:26px;top:340px;" width="8" height="9" viewBox="0 0 8 9"><path d="M1 1 L7 4.5 L1 8 Z" fill="none" stroke="#aaa"/></svg>
<div class="a" style="left:41px;top:339px;width:1px;height:10px;background:#b8b8b8;"></div>
<div class="a" style="left:44px;top:338px;width:14px;height:12px;background:#ffffff;"></div>
<svg style="left:45px;top:339px;" width="12" height="10" viewBox="0 0 12 10"><path d="M6 0.5 V9.5 M1 5 H11" stroke="#2aa8d8" stroke-width="1.1"/><rect x="4.5" y="3.5" width="3" height="3" fill="#2aa8d8"/></svg>
<svg style="left:59px;top:340px;" width="9" height="8" viewBox="0 0 9 8"><path d="M7.5 4 A3.5 3.5 0 1 1 5 1" stroke="#9c9c9c" fill="none"/><circle cx="4.5" cy="4.5" r="0.8" fill="#999"/></svg>
<svg style="left:73px;top:340px;" width="9" height="9" viewBox="0 0 9 9"><rect x="0.5" y="0.5" width="8" height="8" fill="none" stroke="#bbb"/><rect x="0.5" y="4" width="4" height="4.5" fill="none" stroke="#bbb"/></svg>
<div class="a" style="left:87px;top:339px;width:1px;height:10px;background:#b8b8b8;"></div>
<svg style="left:93px;top:340px;" width="10" height="9" viewBox="0 0 10 9"><path d="M1 1 L3 3 M9 1 L7 3 M1 8 L3 6 M9 8 L7 6" stroke="#333" stroke-width="1.4"/><circle cx="5" cy="4.5" r="1.3" fill="#333"/></svg>
<div class="a" style="left:107px;top:339px;width:1px;height:10px;background:#b8b8b8;"></div>
<div class="a" style="left:110px;top:338px;width:14px;height:12px;background:#ffffff;"></div>
<svg style="left:112px;top:340px;" width="10" height="9" viewBox="0 0 10 9"><path d="M8 1 L2 7 H9" stroke="#2aa8d8" fill="none"/><circle cx="3" cy="7" r="1.5" fill="#2aa8d8"/></svg>
<svg style="left:127px;top:340px;" width="10" height="9" viewBox="0 0 10 9"><circle cx="7" cy="2" r="1.6" fill="#444"/><circle cx="7" cy="7" r="1.6" fill="#444"/><circle cx="2" cy="4.5" r="1.6" fill="#444"/><path d="M2 4.5 L7 2 M2 4.5 L7 7" stroke="#444"/></svg>
<svg style="left:142px;top:340px;" width="7" height="9" viewBox="0 0 7 9"><path d="M3.5 0.5 A3 3 0 0 1 5.5 6 V7.5 H1.5 V6 A3 3 0 0 1 3.5 0.5 Z" fill="none" stroke="#777" stroke-width="0.8"/></svg>
<div class="a" style="left:155px;top:338px;width:14px;height:12px;background:#ffffff;"></div>
<svg style="left:157px;top:340px;" width="9" height="9" viewBox="0 0 9 9"><rect x="0.5" y="0.5" width="8" height="8" fill="#a6dcef" stroke="#5cc0e4" stroke-width="0.7"/><path d="M4.5 1 V8 M1 4.5 H8" stroke="#fff" stroke-width="0.6"/></svg>
<svg style="left:331px;top:340px;" width="10" height="9" viewBox="0 0 10 9"><path d="M2.5 2.5 A3.5 3.5 0 1 1 2 6.5" stroke="#333" fill="none"/><path d="M0.5 1 L3.5 1 L3 4 Z" fill="#333"/></svg>
<div class="a" style="left:22px;top:350px;width:326px;height:1px;background:#a2a2a2;"></div>
<div class="a" style="left:22px;top:351px;width:326px;height:338px;background:#eaeaea;"></div>
<div class="a" style="left:22px;top:351px;width:326px;height:16px;background:#eeeeee;"></div>
<div class="a" style="left:22px;top:351px;width:68px;height:16px;background:#e2e2e2;"></div>
<div class="t" style="left:31.00px;top:354.16px;font-size:10.8px;color:#2a2a2a;transform:scaleX(0.952);">Navigator</div>
<svg style="left:81px;top:356px;" width="8" height="8" viewBox="0 0 8 8"><path d="M0.5 0.5 L7.5 7.5 M7.5 0.5 L0.5 7.5" stroke="#666" stroke-width="0.9"/></svg>
<div class="a" style="left:90px;top:351px;width:1px;height:16px;background:#8a8a8a;"></div>
<svg style="left:315px;top:354px;" width="9" height="6" viewBox="0 0 9 6"><path d="M0.5 0.5 L4.5 5 L8.5 0.5" stroke="#aaa" fill="none" stroke-width="0.9"/></svg>
<svg style="left:326px;top:353px;" width="9" height="9" viewBox="0 0 9 9"><rect x="0.5" y="3" width="5" height="5" fill="none" stroke="#aaa" stroke-width="0.9"/><rect x="3" y="0.5" width="5" height="5" fill="none" stroke="#aaa" stroke-width="0.9"/></svg>
<svg style="left:337.5px;top:353.5px;" width="9" height="9" viewBox="0 0 9 9"><path d="M0.5 0.5 L8.5 8.5 M8.5 0.5 L0.5 8.5" stroke="#aaa" stroke-width="0.9"/></svg>
<div class="a" style="left:22px;top:367px;width:326px;height:15px;background:#d3d3d3;"></div>
<svg style="left:27px;top:371px;" width="9" height="7" viewBox="0 0 9 7"><path d="M8 3.5 H1 M4 0.5 L1 3.5 L4 6.5" stroke="#666" fill="none"/></svg>
<svg style="left:41px;top:371px;" width="9" height="7" viewBox="0 0 9 7"><path d="M1 3.5 H8 M5 0.5 L8 3.5 L5 6.5" stroke="#666" fill="none"/></svg>
<svg style="left:54px;top:370px;" width="7" height="9" viewBox="0 0 7 9"><path d="M3.5 0.5 V8 M0.5 5 L3.5 8 L6.5 5" stroke="#666" fill="none"/></svg>
<svg style="left:69px;top:370px;" width="7" height="9" viewBox="0 0 7 9"><path d="M3.5 8.5 V1 M0.5 4 L3.5 1 L6.5 4" stroke="#666" fill="none"/></svg>
<svg style="left:83px;top:370px;" width="10" height="9" viewBox="0 0 10 9"><path d="M0.5 0.5 H7.5 L5 4 V8 H3 V4 Z" fill="#333"/><path d="M7 6.5 L9 6.5 L8 8 Z" fill="#333"/></svg>
<div class="a" style="left:343px;top:383px;width:6px;height:306px;background:#bdbdbd;"></div>
<div class="a" style="left:343px;top:383px;width:6px;height:148px;background:#9f9f9f;"></div>
<div class="a" style="left:22px;top:383px;width:321px;height:306px;overflow:hidden">
<div class="a" style="left:-22px;top:-383px;width:1564px;height:768px">
<div class="a" style="left:22px;top:383.1px;width:321px;height:12.1px;background:#dadada;"></div>
<svg style="left:24.5px;top:385.1px;" width="10" height="8" viewBox="0 0 10 8"><rect x="0" y="0" width="9" height="7" rx="1.5" fill="#b0b0b0"/></svg>
<div class="t" style="left:36.00px;top:383.06px;font-size:10.8px;color:#2e2e2e;transform:scaleX(0.905);">Rectangle</div>
<div class="a" style="left:34px;top:397.40000000000003px;width:309px;height:12.1px;background:#dadada;"></div>
<svg style="left:36.5px;top:398.40000000000003px;" width="10" height="10" viewBox="0 0 10 10"><path d="M0.5 0.5 H9.5 V2.5 H6 V9.5 H4 V2.5 H0.5 Z" fill="#b0b0b0"/></svg>
<div class="t" style="left:48.00px;top:397.36px;font-size:10.8px;color:#2e2e2e;transform:scaleX(0.959);">Text</div>
<div class="a" style="left:34px;top:411.70000000000005px;width:309px;height:12.1px;background:#dadada;"></div>
<svg style="left:36.5px;top:412.70000000000005px;" width="10" height="10" viewBox="0 0 10 10"><path d="M0 3 L9 0.5 V2.5 L0 5 Z" fill="#b0b0b0"/><rect x="0" y="5" width="9" height="4.5" fill="#b0b0b0"/></svg>
<div class="t" style="left:48.00px;top:411.66px;font-size:10.8px;color:#2e2e2e;transform:scaleX(0.988);">view3D</div>
<div class="a" style="left:46px;top:426.0px;width:297px;height:12.1px;background:#dadada;"></div>
<svg style="left:48.5px;top:427.0px;" width="10" height="10" viewBox="0 0 10 10"><rect x="0" y="0" width="9" height="9" fill="#b0b0b0"/><path d="M5.5 8.5 L8.5 5.5 V8.5 Z" fill="#eee"/></svg>
<div class="t" style="left:60.00px;top:425.96px;font-size:10.8px;color:#2e2e2e;transform:scaleX(0.950);">sceneEnvironment</div>
<div class="a" style="left:46px;top:440.3px;width:297px;height:12.1px;background:#dadada;"></div>
<svg style="left:48.5px;top:441.3px;" width="10" height="10" viewBox="0 0 10 10"><path d="M0 2 L2 1.5 V9 L0 9.5 Z M3 1.5 L5 1 V8.5 L3 9 Z M6 1 L8 0.5 V8 L6 8.5 Z" fill="#b0b0b0"/></svg>
<div class="t" style="left:60.00px;top:440.26px;font-size:10.8px;color:#2e2e2e;transform:scaleX(0.920);">scene</div>
<div class="a" style="left:58px;top:454.6px;width:285px;height:12.1px;background:#dadada;"></div>
<svg style="left:60.5px;top:455.6px;" width="10" height="10" viewBox="0 0 10 10"><circle cx="5" cy="5" r="2.2" fill="#b0b0b0"/><path d="M5 0 V2 M5 8 V10 M0 5 H2 M8 5 H10 M1.5 1.5 L3 3 M7 7 L8.5 8.5 M1.5 8.5 L3 7 M7 3 L8.5 1.5" stroke="#b0b0b0" stroke-width="0.8"/></svg>
<div class="t" style="left:72.00px;top:454.56px;font-size:10.8px;color:#2e2e2e;transform:scaleX(0.964);">directionalLight</div>
<div class="a" style="left:58px;top:468.90000000000003px;width:285px;height:12.1px;background:#dadada;"></div>
<svg style="left:60.5px;top:470.90000000000003px;" width="10" height="8" viewBox="0 0 10 8"><rect x="0" y="1" width="6" height="6" fill="#b0b0b0"/><path d="M6.5 4 L9.5 1 V7 Z" fill="#b0b0b0"/></svg>
<div class="t" style="left:72.00px;top:468.86px;font-size:10.8px;color:#2e2e2e;transform:scaleX(0.916);">camera</div>
<div class="a" style="left:58px;top:483.20000000000005px;width:285px;height:12.1px;background:#ffffff;"></div>
<svg style="left:60.5px;top:485.20000000000005px;" width="10" height="9" viewBox="0 0 10 9"><path d="M1.5 2.5 L5 1 L8.5 2.5 V6.5 L5 8 L1.5 6.5 Z" fill="#b0b0b0"/></svg>
<div class="t" style="left:72.00px;top:483.16px;font-size:10.8px;color:#3aa6cc;transform:scaleX(0.927);">cubeModel</div>
<div class="a" style="left:70px;top:497.5px;width:273px;height:12.1px;background:#dadada;"></div>
<svg style="left:72.5px;top:498.5px;" width="11" height="11" viewBox="0 0 11 11"><circle cx="5.5" cy="5.5" r="5" fill="#b0b0b0"/><circle cx="4" cy="4" r="1.5" fill="#ccc"/></svg>
<div class="t" style="left:84.00px;top:497.46px;font-size:10.8px;color:#2e2e2e;transform:scaleX(0.938);">cubeMaterial</div>
<div class="a" style="left:58px;top:511.80000000000007px;width:285px;height:12.1px;background:#dadada;"></div>
<svg style="left:60.5px;top:512.8000000000001px;" width="10" height="10" viewBox="0 0 10 10"><circle cx="5" cy="5" r="4.3" fill="none" stroke="#b0b0b0" stroke-dasharray="1.6 1.2"/><circle cx="5" cy="5" r="1.8" fill="#b0b0b0"/></svg>
<div class="t" style="left:72.00px;top:511.76px;font-size:10.8px;color:#2e2e2e;transform:scaleX(0.932);">particleSystem</div>
<div class="a" style="left:70px;top:526.1px;width:273px;height:12.1px;background:#dadada;"></div>
<svg style="left:72.5px;top:527.1px;" width="10" height="10" viewBox="0 0 10 10"><circle cx="5" cy="5" r="4.6" fill="#b0b0b0"/><path d="M2 2 L8 8" stroke="#ddd" stroke-width="0.8"/></svg>
<div class="t" style="left:84.00px;top:526.06px;font-size:10.8px;color:#2e2e2e;transform:scaleX(0.985);">particleEmitter</div>
<div class="a" style="left:82px;top:540.4000000000001px;width:261px;height:12.1px;background:#dadada;"></div>
<svg style="left:84.5px;top:541.4000000000001px;" width="10" height="10" viewBox="0 0 10 10"><path d="M9.5 0.5 L0.5 4 L4.5 5.5 L6 9.5 Z" fill="#b0b0b0"/></svg>
<div class="t" style="left:96.00px;top:540.36px;font-size:10.8px;color:#2e2e2e;">dir3d</div>
<div class="a" style="left:82px;top:554.7px;width:261px;height:12.1px;background:#dadada;"></div>
<svg style="left:84.5px;top:555.7px;" width="10" height="10" viewBox="0 0 10 10"><circle cx="5" cy="5" r="4.4" fill="none" stroke="#b0b0b0" stroke-width="0.8"/><path d="M5 7.5 L2.8 5 A1.3 1.3 0 0 1 5 3.5 A1.3 1.3 0 0 1 7.2 5 Z" fill="#b0b0b0"/></svg>
<div class="t" style="left:96.00px;top:554.66px;font-size:10.8px;color:#2e2e2e;transform:scaleX(0.961);">spriteParticle</div>
<div class="a" style="left:94px;top:569.0px;width:249px;height:12.1px;background:#dadada;"></div>
<svg style="left:96.5px;top:570.0px;" width="10" height="10" viewBox="0 0 10 10"><rect x="0.5" y="0.5" width="9" height="9" fill="none" stroke="#b0b0b0"/><path d="M1 9 L4 5 L6 7 L7.5 6 L9 9 Z" fill="#b0b0b0"/></svg>
<div class="t" style="left:108.00px;top:568.96px;font-size:10.8px;color:#2e2e2e;transform:scaleX(0.961);">texture1</div>
<div class="a" style="left:82px;top:583.3000000000001px;width:261px;height:12.1px;background:#dadada;"></div>
<svg style="left:84.5px;top:584.3000000000001px;" width="10" height="10" viewBox="0 0 10 10"><circle cx="5" cy="5" r="4.4" fill="none" stroke="#b0b0b0" stroke-dasharray="1.6 1.2"/><path d="M3 6.5 L5 3 L7 6.5 Z" fill="#b0b0b0"/></svg>
<div class="t" style="left:96.00px;top:583.26px;font-size:10.8px;color:#2e2e2e;transform:scaleX(0.939);">particleShape</div>
<div class="a" style="left:70px;top:597.6px;width:273px;height:12.1px;background:#dadada;"></div>
<svg style="left:72.5px;top:598.6px;" width="10" height="10" viewBox="0 0 10 10"><rect x="0.5" y="0.5" width="9" height="9" rx="2" fill="none" stroke="#b0b0b0" stroke-dasharray="2 1"/><rect x="3" y="3" width="4" height="4" fill="none" stroke="#b0b0b0"/></svg>
<div class="t" style="left:84.00px;top:597.56px;font-size:10.8px;color:#2e2e2e;transform:scaleX(0.886);">numberAnimation</div>
<div class="a" style="left:70px;top:611.9000000000001px;width:273px;height:12.1px;background:#dadada;"></div>
<svg style="left:72.5px;top:612.9000000000001px;" width="10" height="10" viewBox="0 0 10 10"><circle cx="5" cy="5" r="4.6" fill="#b0b0b0"/><path d="M2 2 L8 8" stroke="#ddd" stroke-width="0.8"/></svg>
<div class="t" style="left:84.00px;top:611.86px;font-size:10.8px;color:#2e2e2e;transform:scaleX(0.988);">trailEmitter</div>
<div class="a" style="left:82px;top:626.2px;width:261px;height:12.1px;background:#dadada;"></div>
<svg style="left:84.5px;top:627.2px;" width="10" height="10" viewBox="0 0 10 10"><path d="M9.5 0.5 L0.5 4 L4.5 5.5 L6 9.5 Z" fill="#b0b0b0"/></svg>
<div class="t" style="left:96.00px;top:626.16px;font-size:10.8px;color:#2e2e2e;transform:scaleX(1.033);">dir3d1</div>
<div class="a" style="left:82px;top:640.5px;width:261px;height:12.1px;background:#dadada;"></div>
<svg style="left:84.5px;top:641.5px;" width="10" height="10" viewBox="0 0 10 10"><circle cx="5" cy="5" r="4.4" fill="none" stroke="#b0b0b0" stroke-width="0.8"/><path d="M5 7.5 L2.8 5 A1.3 1.3 0 0 1 5 3.5 A1.3 1.3 0 0 1 7.2 5 Z" fill="#b0b0b0"/></svg>
<div class="t" style="left:96.00px;top:640.46px;font-size:10.8px;color:#2e2e2e;transform:scaleX(0.979);">spriteParticle1</div>
<div class="a" style="left:94px;top:654.8px;width:249px;height:12.1px;background:#dadada;"></div>
<svg style="left:96.5px;top:655.8px;" width="10" height="10" viewBox="0 0 10 10"><rect x="0.5" y="0.5" width="9" height="9" fill="none" stroke="#b0b0b0"/><path d="M1 9 L4 5 L6 7 L7.5 6 L9 9 Z" fill="#b0b0b0"/></svg>
<div class="t" style="left:108.00px;top:654.76px;font-size:10.8px;color:#2e2e2e;transform:scaleX(0.974);">texture2</div>
<div class="a" style="left:70px;top:669.1px;width:273px;height:12.1px;background:#dadada;"></div>
<svg style="left:72.5px;top:670.1px;" width="10" height="10" viewBox="0 0 10 10"><circle cx="5" cy="5" r="4.6" fill="#b0b0b0"/><path d="M2 2 L8 8" stroke="#ddd" stroke-width="0.8"/></svg>
<div class="t" style="left:84.00px;top:669.06px;font-size:10.8px;color:#2e2e2e;">particleEmitter1</div>
<div class="a" style="left:82px;top:683.4000000000001px;width:261px;height:12.1px;background:#dadada;"></div>
<svg style="left:84.5px;top:684.4000000000001px;" width="10" height="10" viewBox="0 0 10 10"><path d="M9.5 0.5 L0.5 4 L4.5 5.5 L6 9.5 Z" fill="#b0b0b0"/></svg>
<div class="t" style="left:96.00px;top:683.36px;font-size:10.8px;color:#2e2e2e;transform:scaleX(1.033);">dir3d2</div>
<div class="a" style="left:28px;top:395.20000000000005px;width:1px;height:23.0px;background:#8c8c8c;"></div>
<div class="a" style="left:28px;top:403.40000000000003px;width:6px;height:1px;background:#8c8c8c;"></div>
<svg style="left:25px;top:416.20000000000005px;" width="6" height="4" viewBox="0 0 6 4"><path d="M0 0 H6 L3 3.5 Z" fill="#505050"/></svg>
<div class="a" style="left:32px;top:417.70000000000005px;width:2px;height:1px;background:#8c8c8c;"></div>
<div class="a" style="left:40px;top:423.80000000000007px;width:1px;height:22.999999999999943px;background:#8c8c8c;"></div>
<div class="a" style="left:40px;top:432.0px;width:6px;height:1px;background:#8c8c8c;"></div>
<svg style="left:37px;top:444.8px;" width="6" height="4" viewBox="0 0 6 4"><path d="M0 0 H6 L3 3.5 Z" fill="#505050"/></svg>
<div class="a" style="left:44px;top:446.3px;width:2px;height:1px;background:#8c8c8c;"></div>
<div class="a" style="left:52px;top:452.40000000000003px;width:1px;height:65.90000000000003px;background:#8c8c8c;"></div>
<div class="a" style="left:52px;top:460.6px;width:6px;height:1px;background:#8c8c8c;"></div>
<div class="a" style="left:52px;top:474.90000000000003px;width:6px;height:1px;background:#8c8c8c;"></div>
<svg style="left:49px;top:487.70000000000005px;" width="6" height="4" viewBox="0 0 6 4"><path d="M0 0 H6 L3 3.5 Z" fill="#505050"/></svg>
<div class="a" style="left:56px;top:489.20000000000005px;width:2px;height:1px;background:#8c8c8c;"></div>
<svg style="left:49px;top:516.3000000000001px;" width="6" height="4" viewBox="0 0 6 4"><path d="M0 0 H6 L3 3.5 Z" fill="#505050"/></svg>
<div class="a" style="left:56px;top:517.8000000000001px;width:2px;height:1px;background:#8c8c8c;"></div>
<div class="a" style="left:64px;top:495.30000000000007px;width:1px;height:8.699999999999932px;background:#8c8c8c;"></div>
<div class="a" style="left:64px;top:503.5px;width:6px;height:1px;background:#8c8c8c;"></div>
<div class="a" style="left:64px;top:523.9000000000001px;width:1px;height:151.69999999999993px;background:#8c8c8c;"></div>
<svg style="left:61px;top:530.6px;" width="6" height="4" viewBox="0 0 6 4"><path d="M0 0 H6 L3 3.5 Z" fill="#505050"/></svg>
<div class="a" style="left:68px;top:532.1px;width:2px;height:1px;background:#8c8c8c;"></div>
<div class="a" style="left:64px;top:603.6px;width:6px;height:1px;background:#8c8c8c;"></div>
<svg style="left:61px;top:616.4000000000001px;" width="6" height="4" viewBox="0 0 6 4"><path d="M0 0 H6 L3 3.5 Z" fill="#505050"/></svg>
<div class="a" style="left:68px;top:617.9000000000001px;width:2px;height:1px;background:#8c8c8c;"></div>
<svg style="left:61px;top:673.6px;" width="6" height="4" viewBox="0 0 6 4"><path d="M0 0 H6 L3 3.5 Z" fill="#505050"/></svg>
<div class="a" style="left:68px;top:675.1px;width:2px;height:1px;background:#8c8c8c;"></div>
<div class="a" style="left:76px;top:538.2px;width:1px;height:51.60000000000002px;background:#8c8c8c;"></div>
<div class="a" style="left:76px;top:546.4000000000001px;width:6px;height:1px;background:#8c8c8c;"></div>
<svg style="left:73px;top:559.2px;" width="6" height="4" viewBox="0 0 6 4"><path d="M0 0 H6 L3 3.5 Z" fill="#505050"/></svg>
<div class="a" style="left:80px;top:560.7px;width:2px;height:1px;background:#8c8c8c;"></div>
<div class="a" style="left:76px;top:589.3000000000001px;width:6px;height:1px;background:#8c8c8c;"></div>
<div class="a" style="left:88px;top:566.8000000000001px;width:1px;height:8.699999999999932px;background:#8c8c8c;"></div>
<div class="a" style="left:88px;top:575.0px;width:6px;height:1px;background:#8c8c8c;"></div>
<div class="a" style="left:76px;top:624.0000000000001px;width:1px;height:22.999999999999886px;background:#8c8c8c;"></div>
<div class="a" style="left:76px;top:632.2px;width:6px;height:1px;background:#8c8c8c;"></div>
<svg style="left:73px;top:645.0px;" width="6" height="4" viewBox="0 0 6 4"><path d="M0 0 H6 L3 3.5 Z" fill="#505050"/></svg>
<div class="a" style="left:80px;top:646.5px;width:2px;height:1px;background:#8c8c8c;"></div>
<div class="a" style="left:88px;top:652.6px;width:1px;height:8.699999999999932px;background:#8c8c8c;"></div>
<div class="a" style="left:88px;top:660.8px;width:6px;height:1px;background:#8c8c8c;"></div>
<div class="a" style="left:76px;top:681.2px;width:1px;height:8.700000000000045px;background:#8c8c8c;"></div>
<div class="a" style="left:76px;top:689.4000000000001px;width:6px;height:1px;background:#8c8c8c;"></div>
</div></div>
<div class="a" style="left:348px;top:36px;width:1px;height:653px;background:#8e8e8e;"></div>
<div class="a" style="left:349px;top:36px;width:907px;height:653px;background:#eaeaea;"></div>
<div class="a" style="left:349px;top:36px;width:907px;height:16px;background:#eeeeee;"></div>
<div class="a" style="left:349px;top:36px;width:78px;height:16px;background:#e2e2e2;"></div>
<div class="t" style="left:357.50px;top:39.36px;font-size:10.8px;color:#2a2a2a;transform:scaleX(0.948);">Form Editor</div>
<svg style="left:417px;top:40px;" width="8" height="8" viewBox="0 0 8 8"><path d="M0.5 0.5 L7.5 7.5 M7.5 0.5 L0.5 7.5" stroke="#666" stroke-width="0.9"/></svg>
<div class="a" style="left:427px;top:36px;width:73px;height:16px;background:#a4a4a4;"></div>
<div class="a" style="left:499px;top:36px;width:1px;height:16px;background:#8f8f8f;"></div>
<div class="t" style="left:437.00px;top:39.36px;font-size:10.8px;color:#353535;transform:scaleX(0.921);">Text Editor</div>
<svg style="left:490px;top:40px;" width="8" height="8" viewBox="0 0 8 8"><path d="M0.5 0.5 L7.5 7.5 M7.5 0.5 L0.5 7.5" stroke="#d8d8d8" stroke-width="0.9"/></svg>
<svg style="left:1222px;top:40px;" width="9" height="6" viewBox="0 0 9 6"><path d="M0.5 0.5 L4.5 5 L8.5 0.5" stroke="#aaa" fill="none" stroke-width="0.9"/></svg>
<svg style="left:1233px;top:39px;" width="9" height="9" viewBox="0 0 9 9"><rect x="0.5" y="3" width="5" height="5" fill="none" stroke="#aaa" stroke-width="0.9"/><rect x="3" y="0.5" width="5" height="5" fill="none" stroke="#aaa" stroke-width="0.9"/></svg>
<svg style="left:1244.5px;top:39.5px;" width="9" height="9" viewBox="0 0 9 9"><path d="M0.5 0.5 L8.5 8.5 M8.5 0.5 L0.5 8.5" stroke="#aaa" stroke-width="0.9"/></svg>
<div class="a" style="left:349px;top:52px;width:907px;height:15px;background:#d3d3d3;"></div>
<div class="a" style="left:349px;top:67px;width:907px;height:1px;background:#cfcfcf;"></div>
<svg style="left:352px;top:55px;" width="11" height="10" viewBox="0 0 11 10"><path d="M0.5 9.5 V0.5 H7" stroke="#999" fill="none" stroke-width="0.8"/><path d="M3 7 L5 5 M7 3 H10 M3 9 H10" stroke="#888" stroke-width="0.8"/></svg>
<svg style="left:366px;top:55px;" width="11" height="10" viewBox="0 0 11 10"><path d="M0.5 9.5 V0.5 H7" stroke="#999" fill="none" stroke-width="0.8"/><path d="M3 7 L5 5 M7 3 H10 M3 9 H10" stroke="#888" stroke-width="0.8"/></svg>
<div class="a" style="left:378px;top:52px;width:15px;height:15px;background:#ffffff;"></div>
<svg style="left:380px;top:55px;" width="11" height="10" viewBox="0 0 11 10"><path d="M0.5 9.5 V0.5 H7" stroke="#777" fill="none" stroke-width="0.8"/><rect x="6" y="5" width="3" height="4.5" fill="#888"/><path d="M2 8 H5" stroke="#555"/></svg>
<div class="a" style="left:395px;top:55px;width:1px;height:10px;background:#b8b8b8;"></div>
<svg style="left:400px;top:56px;" width="11" height="8" viewBox="0 0 11 8"><rect x="0.5" y="0.5" width="10" height="7" fill="#bbb" stroke="#999"/><rect x="2.5" y="2.5" width="6" height="3" fill="#eee"/></svg>
<div class="a" style="left:416px;top:55px;width:1px;height:10px;background:#b8b8b8;"></div>
<div class="a" style="left:418px;top:52px;width:58px;height:15px;background:#e2e2e2;"></div>
<div class="a" style="left:477px;top:52px;width:59px;height:15px;background:#e2e2e2;"></div>
<div class="t" style="left:420.00px;top:56.72px;font-size:8.6px;color:#444;transform:scaleX(0.942);">Override Width</div>
<div class="t" style="left:479.50px;top:56.72px;font-size:8.6px;color:#444;transform:scaleX(0.913);">Override Height</div>
<svg style="left:1099px;top:55px;" width="9" height="9" viewBox="0 0 9 9"><rect x="0" y="0" width="9" height="9" fill="#111"/><rect x="4.5" y="0" width="4.5" height="4.5" fill="#fff"/><rect x="0" y="4.5" width="4.5" height="4.5" fill="#fff"/><rect x="2" y="2" width="5" height="5" fill="#111"/></svg>
<svg style="left:1111px;top:55px;" width="8" height="10" viewBox="0 0 8 10"><path d="M1 4 L4 1 L7 4 Z M1 6 L4 9 L7 6 Z" fill="#333"/></svg>
<svg style="left:1123px;top:54px;" width="12" height="12" viewBox="0 0 12 12"><circle cx="6" cy="5" r="4.2" fill="none" stroke="#777" stroke-width="0.9"/><path d="M3 8 L0.5 10.5" stroke="#777" stroke-width="1.1"/><path d="M6 3 V7 M4 5 H8" stroke="#777" stroke-width="0.8"/></svg>
<svg style="left:1137px;top:54px;" width="12" height="12" viewBox="0 0 12 12"><circle cx="6" cy="5" r="4.2" fill="none" stroke="#777" stroke-width="0.9"/><path d="M3 8 L0.5 10.5" stroke="#777" stroke-width="1.1"/><path d="M4 5 H8" stroke="#777" stroke-width="0.8"/></svg>
<svg style="left:1214px;top:54px;" width="12" height="12" viewBox="0 0 12 12"><circle cx="6" cy="5" r="4.2" fill="none" stroke="#777" stroke-width="0.9"/><path d="M3 8 L0.5 10.5" stroke="#777" stroke-width="1.1"/><path d="M4.3 3.3 L7.7 6.7 M7.7 3.3 L4.3 6.7" stroke="#777" stroke-width="0.8"/></svg>
<svg style="left:1228px;top:54px;" width="12" height="12" viewBox="0 0 12 12"><circle cx="6" cy="5" r="4.2" fill="none" stroke="#777" stroke-width="0.9"/><path d="M3 8 L0.5 10.5" stroke="#777" stroke-width="1.1"/><path d="M4.3 3.3 L7.7 6.7 M7.7 3.3 L4.3 6.7" stroke="#777" stroke-width="0.8"/></svg>
<div class="t" style="left:1152.00px;top:54.66px;font-size:10.8px;color:#222;transform:scaleX(0.849);">100 %</div>
<svg style="left:1202px;top:55px;" width="8" height="10" viewBox="0 0 8 10"><path d="M1 4 L4 1 L7 4 Z M1 6 L4 9 L7 6 Z" fill="#333"/></svg>
<svg style="left:1242px;top:55px;" width="10" height="10" viewBox="0 0 10 10"><path d="M2.5 2.5 A3.5 3.5 0 1 1 2 6.5" stroke="#555" fill="none"/><path d="M0.5 1 L3.5 1 L3 4 Z" fill="#555"/></svg>
<div class="a" style="left:1249px;top:68px;width:6px;height:615px;background:#b4b4b4;"></div>
<div class="a" style="left:1255px;top:36px;width:1px;height:653px;background:#8e8e8e;"></div>
<div class="a" style="left:349px;top:683px;width:900px;height:6px;background:#b4b4b4;"></div>
<div class="a" style="left:349px;top:688px;width:900px;height:1px;background:#9a9a9a;"></div>
<div class="a" style="left:1249px;top:683px;width:6px;height:6px;background:#e4e4e4;"></div>
<div class="a" style="left:348px;top:689px;width:1212px;height:1px;background:#9a9a9a;"></div>
<div class="a" style="left:396px;top:92px;width:806px;height:530px;box-shadow:0 3px 12px rgba(0,0,0,0.28);"></div>
<div class="a" style="left:396px;top:92px;width:806px;height:530px;background:#8a8a8a;"></div>
<div class="a" style="left:397px;top:93px;width:805px;height:26px;background:#ffffff;"></div>
<svg style="left:404px;top:101px;" width="13" height="10" viewBox="0 0 13 10"><path d="M1 1 H10 L12 3 V9 H3 L1 7 Z" fill="#41c04a"/><path d="M4 3.5 H6.5 V6.5 M4 3.5 V6.5 H7.5 M8.5 4 V6.5 M8.5 4.5 Q9 3.5 10 4" stroke="#e6ffe6" fill="none" stroke-width="0.8"/></svg>
<div class="t" style="left:420.50px;top:100.69px;font-size:11px;color:#1a1a1a;transform:scaleX(0.974);">Qml Runtime</div>
<svg style="left:1092px;top:104px;" width="12" height="2" viewBox="0 0 12 2"><rect x="0" y="0.5" width="11" height="1" fill="#222"/></svg>
<svg style="left:1133px;top:100px;" width="11" height="11" viewBox="0 0 11 11"><rect x="0.5" y="0.5" width="10" height="10" fill="none" stroke="#222" stroke-width="1"/></svg>
<svg style="left:1175px;top:100px;" width="11" height="11" viewBox="0 0 11 11"><path d="M0.5 0.5 L10.5 10.5 M10.5 0.5 L0.5 10.5" stroke="#222" stroke-width="1"/></svg>
<div class="a" style="left:397px;top:119px;width:805px;height:503px;background:#000000;"></div>
<div class="a" style="left:797px;top:683px;width:18px;height:6px;background:#a2a2a2;"></div>
<svg style="left:397px;top:119px;overflow:hidden" width="805" height="503" viewBox="0 0 805 503"><defs>
<filter id="b05" x="-50%" y="-50%" width="200%" height="200%"><feGaussianBlur stdDeviation="0.6"/></filter>
<filter id="b1" x="-50%" y="-50%" width="200%" height="200%"><feGaussianBlur stdDeviation="1"/></filter>
<filter id="b2" x="-50%" y="-50%" width="200%" height="200%"><feGaussianBlur stdDeviation="2.5"/></filter>
<filter id="b3" x="-50%" y="-50%" width="200%" height="200%"><feGaussianBlur stdDeviation="3.2"/></filter>
<filter id="b4" x="-50%" y="-50%" width="200%" height="200%"><feGaussianBlur stdDeviation="4"/></filter>
<filter id="b6" x="-50%" y="-50%" width="200%" height="200%"><feGaussianBlur stdDeviation="6"/></filter>
<filter id="b10" x="-80%" y="-80%" width="260%" height="260%"><feGaussianBlur stdDeviation="10"/></filter>
<filter id="b16" x="-80%" y="-80%" width="260%" height="260%"><feGaussianBlur stdDeviation="16"/></filter>
<filter id="pb05" filterUnits="userSpaceOnUse" x="-20" y="-20" width="845" height="543"><feGaussianBlur stdDeviation="0.6"/></filter>
<filter id="pb2" filterUnits="userSpaceOnUse" x="-20" y="-20" width="845" height="543"><feGaussianBlur stdDeviation="2.5"/></filter>
<filter id="pb4" filterUnits="userSpaceOnUse" x="-20" y="-20" width="845" height="543"><feGaussianBlur stdDeviation="4"/></filter>
<linearGradient id="spk" x1="0" y1="0" x2="1" y2="0">
 <stop offset="0" stop-color="#ffd040" stop-opacity="0"/><stop offset="0.3" stop-color="#ffe070"/><stop offset="0.55" stop-color="#ffffff"/><stop offset="1" stop-color="#ffffff" stop-opacity="0.2"/>
</linearGradient>
</defs><filter id="rgh" x="-50%" y="-50%" width="200%" height="200%"><feTurbulence type="fractalNoise" baseFrequency="0.09" numOctaves="2" seed="4" result="n"/><feDisplacementMap in="SourceGraphic" in2="n" scale="18" xChannelSelector="R" yChannelSelector="G" result="d"/><feGaussianBlur in="d" stdDeviation="3.5"/></filter><g><ellipse cx="105" cy="108" rx="50" ry="46" fill="#903e0c" opacity="0.45" filter="url(#b10)"/><g filter="url(#rgh)"><path d="M55.0 99.0 Q61.0 61.0 101.0 57.0 Q151.0 53.0 161.0 89.0 Q169.0 121.0 149.0 147.0 Q121.0 171.0 85.0 160.0 Q51.0 143.0 55.0 99.0 Z" fill="#d87828" opacity="0.75"/><path d="M65.0 93.0 Q73.0 65.0 108.0 67.0 Q145.0 71.0 143.0 113.0 Q141.0 151.0 103.0 153.0 Q67.0 149.0 65.0 93.0 Z" fill="#ffc02a"/><ellipse cx="143" cy="96" rx="14" ry="8" fill="#f09a3a" opacity="0.9"/><ellipse cx="118" cy="131" rx="15" ry="12" fill="#ffd84a"/><ellipse cx="83" cy="119" rx="12" ry="16" fill="#ffe060"/></g><ellipse cx="102" cy="110" rx="18" ry="22" fill="#ffe468" filter="url(#b3)"/><ellipse cx="99" cy="111" rx="11" ry="14" fill="#fff6d0" filter="url(#b2)"/><circle cx="98" cy="110" r="6" fill="#ffffff" filter="url(#b1)"/><g transform="translate(100,110) rotate(-124.4)"><path d="M8 0 L54.5 -3.2 L99.0 0 L54.5 3.2 Z" fill="url(#spk)" filter="url(#b05)"/></g><g transform="translate(100,110) rotate(-121.9)"><path d="M8 0 L51.2 -2.4 L93.1 0 L51.2 2.4 Z" fill="url(#spk)" filter="url(#b05)"/></g><g transform="translate(100,110) rotate(-106.6)"><path d="M8 0 L44.5 -2.2 L81.0 0 L44.5 2.2 Z" fill="url(#spk)" filter="url(#b05)"/></g><g transform="translate(100,110) rotate(-90.8)"><path d="M8 0 L53.2 -1.0 L96.7 0 L53.2 1.0 Z" fill="url(#spk)" filter="url(#b05)"/></g><g transform="translate(100,110) rotate(-83.8)"><path d="M8 0 L40.7 -1.4 L73.9 0 L40.7 1.4 Z" fill="url(#spk)" filter="url(#b05)"/></g><g transform="translate(100,110) rotate(-65.5)"><path d="M8 0 L52.6 -2.6 L95.7 0 L52.6 2.6 Z" fill="url(#spk)" filter="url(#b05)"/></g><g transform="translate(100,110) rotate(-47.8)"><path d="M8 0 L62.7 -2.8 L113.9 0 L62.7 2.8 Z" fill="url(#spk)" filter="url(#b05)"/></g><g transform="translate(100,110) rotate(-38.6)"><path d="M8 0 L63.5 -2.6 L115.5 0 L63.5 2.6 Z" fill="url(#spk)" filter="url(#b05)"/></g><g transform="translate(100,110) rotate(-151.5)"><path d="M8 0 L45.3 -2.4 L82.4 0 L45.3 2.4 Z" fill="url(#spk)" filter="url(#b05)"/></g><g transform="translate(100,110) rotate(-141.5)"><path d="M8 0 L43.2 -2.0 L78.6 0 L43.2 2.0 Z" fill="url(#spk)" filter="url(#b05)"/></g><g transform="translate(100,110) rotate(-171.9)"><path d="M8 0 L31.1 -1.6 L56.6 0 L31.1 1.6 Z" fill="url(#spk)" filter="url(#b05)"/></g><g transform="translate(100,110) rotate(141.2)"><path d="M8 0 L53.0 -2.8 L96.4 0 L53.0 2.8 Z" fill="url(#spk)" filter="url(#b05)"/></g><g transform="translate(100,110) rotate(129.3)"><path d="M8 0 L43.9 -2.2 L79.8 0 L43.9 2.2 Z" fill="url(#spk)" filter="url(#b05)"/></g><g transform="translate(100,110) rotate(108.3)"><path d="M8 0 L40.6 -2.4 L73.7 0 L40.6 2.4 Z" fill="url(#spk)" filter="url(#b05)"/></g><g transform="translate(100,110) rotate(83.8)"><path d="M8 0 L40.9 -1.4 L74.4 0 L40.9 1.4 Z" fill="url(#spk)" filter="url(#b05)"/></g><g transform="translate(100,110) rotate(49.7)"><path d="M8 0 L59.3 -3.4 L107.8 0 L59.3 3.4 Z" fill="url(#spk)" filter="url(#b05)"/></g><g transform="translate(100,110) rotate(33.4)"><path d="M8 0 L60.3 -2.2 L109.7 0 L60.3 2.2 Z" fill="url(#spk)" filter="url(#b05)"/></g><g transform="translate(100,110) rotate(23.6)"><path d="M8 0 L55.0 -1.8 L100.0 0 L55.0 1.8 Z" fill="url(#spk)" filter="url(#b05)"/></g><g transform="translate(100,110) rotate(3.8)"><path d="M8 0 L36.9 -1.6 L67.1 0 L36.9 1.6 Z" fill="url(#spk)" filter="url(#b05)"/></g><g transform="translate(100,110) rotate(-18.2)"><path d="M8 0 L35.6 -2.4 L64.7 0 L35.6 2.4 Z" fill="url(#spk)" filter="url(#b05)"/></g></g><g><circle cx="450.70000000000005" cy="137" r="66" fill="none" stroke="#5a1a0a" stroke-width="22" opacity="0.95" filter="url(#b6)"/><circle cx="450.70000000000005" cy="137" r="50" fill="#05030a" opacity="0.6" filter="url(#b10)"/><ellipse cx="458" cy="153" rx="45" ry="25" transform="rotate(20 458 153)" fill="#2a80c0" opacity="0.45" filter="url(#b10)"/><path d="M452.8 198.0 L449.3 198.0 L445.7 197.8 L442.2 197.4 L438.7 196.8 L435.3 196.0 L431.8 195.0 L428.5 193.8 L425.2 192.4 L422.1 190.9 L419.0 189.1 L416.0 187.2 L413.1 185.1 L410.4 182.8 L407.8 180.4 L405.4 177.8 L403.1 175.1 L400.9 172.3 L399.0 169.3 L397.2 166.3 L395.6 163.1 L394.1 159.9 L392.9 156.5 L391.9 153.1 L391.0 149.7" fill="none" stroke="#ff5418" stroke-width="17" opacity="0.95" filter="url(#b4)"/><path d="M434.4 197.9 L432.4 197.3 L430.4 196.7 L428.5 196.0 L426.6 195.2 L424.7 194.4 L422.8 193.5 L421.0 192.6 L419.2 191.6 L417.4 190.5 L415.7 189.4 L414.0 188.2 L412.3 187.0 L410.7 185.7 L409.2 184.4 L407.6 183.0 L406.2 181.5 L404.7 180.1 L403.3 178.5 L402.0 177.0 L400.7 175.4 L399.5 173.7 L398.3 172.0 L397.2 170.3 L396.1 168.5" fill="none" stroke="#ff6a28" stroke-width="8" filter="url(#b2)"/><path d="M499.7 95.9 L502.2 99.0 L504.4 102.2 L506.5 105.6 L508.3 109.1 L509.9 112.7 L511.3 116.4 L512.5 120.2 L513.4 124.1 L514.1 128.0 L514.5 131.9 L514.7 135.8 L514.6 139.8 L514.3 143.7 L513.8 147.7 L513.0 151.5 L512.0 155.4 L510.8 159.1 L509.3 162.8 L507.6 166.3 L505.7 169.8 L503.5 173.1 L501.2 176.3 L498.7 179.4 L496.0 182.3" fill="none" stroke="#b03a1a" stroke-width="12" opacity="0.7" filter="url(#b6)"/><ellipse cx="480" cy="99" rx="14" ry="22" fill="#d060b8" opacity="0.75" filter="url(#b4)"/><ellipse cx="487" cy="93" rx="7" ry="14" fill="#f090a0" opacity="0.7" filter="url(#b3)"/><path d="M424.5 52.8 L438.2 114.4 M435.0 63.0 L461.0 113.0" fill="none" stroke="#6a3aa0" stroke-width="7" opacity="0.75" filter="url(#b3)"/><path d="M458.0 81.0 Q473.0 86.0 483.0 113.0" fill="none" stroke="#a050d0" stroke-width="6" opacity="0.8" filter="url(#b2)"/><path d="M390.0 130.0 Q393.0 171.0 454.0 178.0 Q503.0 179.0 511.0 133.0 Q509.0 103.0 491.0 85.0" fill="none" stroke="#34a8ec" stroke-width="11" opacity="0.8" filter="url(#b4)"/><path d="M393.0 143.0 Q403.0 121.0 433.0 119.0" fill="none" stroke="#6a90c8" stroke-width="6" opacity="0.6" filter="url(#b2)"/><path d="M408.6 132.6 Q463.0 143.0 508.8 173.6" fill="none" stroke="#38c8f8" stroke-width="6" opacity="0.9" filter="url(#b2)"/><path d="M473.0 156.0 Q493.0 164.0 507.0 173.0" fill="none" stroke="#90f0ff" stroke-width="3.5" filter="url(#b1)"/><path d="M443.0 179.0 Q483.0 181.0 505.0 161.0" fill="none" stroke="#30d8ff" stroke-width="5" opacity="0.8" filter="url(#b2)"/><ellipse cx="453" cy="149" rx="52" ry="26" transform="rotate(22 453 149)" fill="none" stroke="#48b8f0" stroke-width="7" opacity="0.6" filter="url(#b3)"/><ellipse cx="448" cy="121" rx="45" ry="14" transform="rotate(-8 448 121)" fill="none" stroke="#9050d0" stroke-width="3" opacity="0.6" filter="url(#b1)"/><path d="M397.0 125.7 Q441.0 105.0 483.8 118.9" fill="none" stroke="#b060e0" stroke-width="4.5" opacity="0.95" filter="url(#b1)"/><path d="M456.4 68.8 L447.3 212.3" stroke="#9a60f0" stroke-width="2.4" opacity="0.8" filter="url(#b1)"/><path d="M442.7 91.6 L445.0 205.5" stroke="#7050c0" stroke-width="2.5" opacity="0.5" filter="url(#b1)"/></g><ellipse cx="200" cy="246" rx="38" ry="45" fill="#48505a" opacity="0.4" filter="url(#b16)"/><g filter="url(#pb4)" stroke-linecap="round"><path d="M191 230h0M181 241h0M174 277h0" stroke="#808088" stroke-width="28.0" opacity="0.05"/><path d="M202 247h0M213 262h0M198 216h0M205 191h0" stroke="#6a6a72" stroke-width="24.0" opacity="0.05"/><path d="M199 268h0M211 262h0M210 239h0M196 198h0M199 195h0M179 272h0M206 192h0" stroke="#9898a0" stroke-width="23.0" opacity="0.05"/><path d="M209 204h0M167 215h0M189 259h0M196 248h0M188 208h0M205 205h0M181 268h0M192 236h0" stroke="#9898a0" stroke-width="20.0" opacity="0.05"/><path d="M202 253h0M172 274h0M225 251h0M174 225h0M202 213h0" stroke="#6a6a72" stroke-width="22.0" opacity="0.05"/><path d="M209 277h0M190 271h0" stroke="#5a5a62" stroke-width="18.0" opacity="0.10"/><path d="M195 196h0M211 255h0M226 200h0M204 268h0M212 221h0M187 270h0" stroke="#808088" stroke-width="25.0" opacity="0.05"/><path d="M201 190h0" stroke="#808088" stroke-width="21.0" opacity="0.10"/><path d="M206 257h0M209 240h0M206 244h0" stroke="#5a5a62" stroke-width="24.0" opacity="0.05"/><path d="M182 265h0M192 223h0M207 240h0M203 232h0M163 222h0" stroke="#5a5a62" stroke-width="19.0" opacity="0.05"/><path d="M221 196h0" stroke="#5a5a62" stroke-width="20.0" opacity="0.10"/><path d="M177 231h0M194 272h0M203 269h0" stroke="#9898a0" stroke-width="27.0" opacity="0.10"/><path d="M219 220h0M220 219h0M156 261h0M236 236h0M236 212h0M203 238h0" stroke="#5a5a62" stroke-width="26.0" opacity="0.05"/><path d="M194 196h0" stroke="#9898a0" stroke-width="16.0" opacity="0.05"/><path d="M183 207h0M193 222h0M223 244h0M187 205h0M208 251h0" stroke="#808088" stroke-width="17.0" opacity="0.05"/><path d="M190 193h0M223 225h0M188 260h0M188 239h0M199 208h0" stroke="#9898a0" stroke-width="26.0" opacity="0.05"/><path d="M176 205h0M188 260h0" stroke="#9898a0" stroke-width="24.0" opacity="0.05"/><path d="M172 277h0" stroke="#e8a050" stroke-width="12.0" opacity="0.40"/><path d="M201 218h0M200 193h0M212 195h0M186 261h0M189 251h0M214 225h0M172 203h0M217 242h0" stroke="#808088" stroke-width="24.0" opacity="0.05"/><path d="M213 228h0M191 267h0M199 193h0M214 244h0M221 213h0M175 194h0M205 257h0" stroke="#5a5a62" stroke-width="22.0" opacity="0.05"/><path d="M190 242h0M218 211h0M186 257h0M186 241h0" stroke="#808088" stroke-width="21.0" opacity="0.05"/><path d="M226 254h0M207 277h0M159 273h0" stroke="#6a6a72" stroke-width="27.0" opacity="0.05"/><path d="M187 218h0M210 192h0M208 199h0M167 200h0M201 242h0M192 272h0M182 192h0M230 201h0" stroke="#9898a0" stroke-width="19.0" opacity="0.05"/><path d="M184 236h0M179 224h0M206 274h0M215 256h0M221 209h0M191 229h0M203 254h0" stroke="#6a6a72" stroke-width="23.0" opacity="0.05"/><path d="M192 271h0M178 231h0M192 219h0M196 260h0" stroke="#6a6a72" stroke-width="18.0" opacity="0.05"/><path d="M186 198h0M207 240h0M213 260h0M206 226h0M184 270h0M193 197h0" stroke="#9898a0" stroke-width="17.0" opacity="0.05"/><path d="M220 213h0" stroke="#6a6a72" stroke-width="28.0" opacity="0.05"/><path d="M183 222h0M207 199h0M163 203h0M201 277h0M194 224h0M183 192h0" stroke="#6a6a72" stroke-width="26.0" opacity="0.05"/><path d="M178 244h0M181 261h0M223 264h0M188 233h0M204 277h0M225 262h0M205 225h0" stroke="#9898a0" stroke-width="27.0" opacity="0.05"/><path d="M176 237h0M210 230h0M190 216h0M167 204h0M207 275h0M232 261h0" stroke="#808088" stroke-width="23.0" opacity="0.05"/><path d="M203 268h0M199 274h0M202 193h0M216 245h0" stroke="#808088" stroke-width="22.0" opacity="0.05"/><path d="M196 263h0M208 193h0M216 252h0M195 191h0" stroke="#5a5a62" stroke-width="27.0" opacity="0.05"/><path d="M177 198h0" stroke="#6a6a72" stroke-width="23.0" opacity="0.10"/><path d="M207 276h0M238 241h0" stroke="#9898a0" stroke-width="21.0" opacity="0.05"/><path d="M162 190h0M186 232h0M160 266h0M209 196h0" stroke="#808088" stroke-width="18.0" opacity="0.05"/><path d="M160 258h0M191 195h0M204 215h0M181 236h0" stroke="#5a5a62" stroke-width="21.0" opacity="0.05"/><path d="M169 222h0M207 225h0M191 229h0M214 261h0" stroke="#808088" stroke-width="16.0" opacity="0.05"/><path d="M185 206h0M192 269h0M215 245h0M225 200h0" stroke="#9898a0" stroke-width="18.0" opacity="0.05"/><path d="M209 214h0M204 211h0M185 226h0M224 210h0M214 276h0" stroke="#5a5a62" stroke-width="20.0" opacity="0.05"/><path d="M189 226h0M188 240h0M223 214h0M211 241h0M198 219h0M205 236h0" stroke="#5a5a62" stroke-width="18.0" opacity="0.05"/><path d="M201 207h0M188 220h0" stroke="#5a5a62" stroke-width="24.0" opacity="0.10"/><path d="M217 196h0M203 277h0" stroke="#808088" stroke-width="20.0" opacity="0.10"/><path d="M218 249h0M217 211h0M209 248h0M185 273h0M192 201h0" stroke="#6a6a72" stroke-width="17.0" opacity="0.05"/><path d="M179 209h0M193 261h0M187 240h0M209 228h0M203 252h0M193 205h0M204 269h0M225 216h0M190 217h0" stroke="#5a5a62" stroke-width="25.0" opacity="0.05"/><path d="M234 275h0M171 203h0" stroke="#5a5a62" stroke-width="21.0" opacity="0.10"/><path d="M209 238h0M185 191h0" stroke="#5a5a62" stroke-width="17.0" opacity="0.05"/><path d="M217 208h0" stroke="#9898a0" stroke-width="18.0" opacity="0.10"/><path d="M228 195h0M190 208h0" stroke="#5a5a62" stroke-width="23.0" opacity="0.05"/><path d="M184 197h0M211 260h0M194 271h0M196 272h0" stroke="#9898a0" stroke-width="25.0" opacity="0.05"/><path d="M207 281h0" stroke="#b86a30" stroke-width="12.0" opacity="0.45"/><path d="M239 277h0M252 224h0M181 249h0M161 276h0" stroke="#9898a0" stroke-width="22.0" opacity="0.05"/><path d="M213 234h0" stroke="#808088" stroke-width="26.0" opacity="0.10"/><path d="M216 244h0M207 266h0M243 215h0M227 272h0" stroke="#6a6a72" stroke-width="21.0" opacity="0.05"/><path d="M191 212h0M195 258h0M186 244h0M242 265h0M199 246h0M171 214h0M196 241h0" stroke="#808088" stroke-width="27.0" opacity="0.05"/><path d="M194 233h0M205 202h0" stroke="#6a6a72" stroke-width="16.0" opacity="0.05"/><path d="M207 245h0M210 196h0M198 268h0" stroke="#6a6a72" stroke-width="19.0" opacity="0.05"/><path d="M222 199h0M215 241h0" stroke="#5a5a62" stroke-width="28.0" opacity="0.05"/><path d="M225 205h0" stroke="#6a6a72" stroke-width="25.0" opacity="0.10"/><path d="M197 221h0M186 217h0M204 192h0" stroke="#9898a0" stroke-width="24.0" opacity="0.10"/><path d="M199 204h0" stroke="#808088" stroke-width="25.0" opacity="0.10"/><path d="M173 234h0" stroke="#808088" stroke-width="19.0" opacity="0.10"/><path d="M209 261h0" stroke="#9898a0" stroke-width="22.0" opacity="0.10"/><path d="M153 279h0" stroke="#e8a050" stroke-width="10.0" opacity="0.35"/><path d="M208 218h0" stroke="#6a6a72" stroke-width="25.0" opacity="0.05"/><path d="M205 214h0M185 276h0" stroke="#9898a0" stroke-width="23.0" opacity="0.10"/><path d="M198 260h0" stroke="#5a5a62" stroke-width="23.0" opacity="0.10"/><path d="M220 255h0" stroke="#9898a0" stroke-width="28.0" opacity="0.05"/><path d="M218 224h0M165 239h0" stroke="#808088" stroke-width="20.0" opacity="0.05"/><path d="M220 207h0" stroke="#6a6a72" stroke-width="17.0" opacity="0.10"/><path d="M181 266h0" stroke="#5a5a62" stroke-width="19.0" opacity="0.10"/><path d="M228 223h0M183 220h0" stroke="#5a5a62" stroke-width="16.0" opacity="0.05"/><path d="M208 226h0" stroke="#9898a0" stroke-width="21.0" opacity="0.10"/><path d="M214 253h0M185 245h0" stroke="#808088" stroke-width="19.0" opacity="0.05"/><path d="M205 280h0" stroke="#d88a40" stroke-width="13.0" opacity="0.30"/><path d="M201 278h0" stroke="#b86a30" stroke-width="9.0" opacity="0.45"/><path d="M186 202h0" stroke="#6a6a72" stroke-width="20.0" opacity="0.05"/><path d="M185 252h0" stroke="#808088" stroke-width="26.0" opacity="0.05"/><path d="M180 280h0" stroke="#9a8070" stroke-width="13.0" opacity="0.45"/></g><g filter="url(#pb2)" stroke-linecap="round"><path d="M191 308h0" stroke="#d88a40" stroke-width="12.0" opacity="0.55"/><path d="M185 424h0" stroke="#f0b050" stroke-width="9.0" opacity="0.75"/><path d="M191 356h0M189 361h0" stroke="#ffd060" stroke-width="14.0" opacity="0.45"/><path d="M207 375h0" stroke="#f0b050" stroke-width="14.0" opacity="0.75"/><path d="M205 452h0" stroke="#c09060" stroke-width="5.0" opacity="0.35"/><path d="M207 450h0M201 465h0" stroke="#e8b870" stroke-width="8.0" opacity="0.50"/><path d="M210 438h0M194 428h0" stroke="#ffd060" stroke-width="16.0" opacity="0.45"/><path d="M206 382h0M186 375h0M178 345h0" stroke="#fff2b0" stroke-width="11.0" opacity="0.45"/><path d="M197 481h0M202 440h0M216 491h0" stroke="#d0c0a0" stroke-width="7.0" opacity="0.35"/><path d="M209 447h0" stroke="#d0c0a0" stroke-width="5.0" opacity="0.70"/><path d="M197 499h0M188 492h0" stroke="#f0d8a0" stroke-width="8.0" opacity="0.60"/><path d="M196 338h0M199 437h0M197 418h0M178 342h0" stroke="#ffe080" stroke-width="14.0" opacity="0.40"/><path d="M194 389h0" stroke="#fff2b0" stroke-width="15.0" opacity="0.50"/><path d="M186 332h0" stroke="#fff2b0" stroke-width="13.0" opacity="0.70"/><path d="M209 487h0M214 444h0" stroke="#c09060" stroke-width="9.0" opacity="0.30"/><path d="M196 395h0M190 380h0M186 353h0" stroke="#ffe080" stroke-width="11.0" opacity="0.55"/><path d="M202 485h0M194 495h0M204 466h0" stroke="#c09060" stroke-width="6.0" opacity="0.45"/><path d="M198 469h0M199 497h0" stroke="#c09060" stroke-width="7.0" opacity="0.40"/><path d="M189 350h0" stroke="#ffe080" stroke-width="15.0" opacity="0.55"/><path d="M194 467h0M201 449h0" stroke="#e8b870" stroke-width="7.0" opacity="0.55"/><path d="M204 396h0M194 364h0" stroke="#ffd060" stroke-width="11.0" opacity="0.75"/><path d="M209 446h0M199 477h0" stroke="#d0c0a0" stroke-width="6.0" opacity="0.45"/><path d="M191 412h0M198 398h0" stroke="#ffd060" stroke-width="14.0" opacity="0.65"/><path d="M186 393h0" stroke="#ffe080" stroke-width="15.0" opacity="0.50"/><path d="M183 340h0M197 359h0M182 356h0" stroke="#ffe080" stroke-width="12.0" opacity="0.75"/><path d="M193 286h0" stroke="#9a8070" stroke-width="12.0" opacity="0.30"/><path d="M184 321h0M202 427h0M189 398h0" stroke="#ffd060" stroke-width="15.0" opacity="0.60"/><path d="M192 418h0M200 347h0M193 388h0" stroke="#fff2b0" stroke-width="13.0" opacity="0.45"/><path d="M201 307h0M191 303h0" stroke="#b86a30" stroke-width="6.0" opacity="0.45"/><path d="M208 355h0" stroke="#f0b050" stroke-width="15.0" opacity="0.40"/><path d="M211 467h0M195 481h0" stroke="#f0d8a0" stroke-width="7.0" opacity="0.45"/><path d="M190 295h0M208 285h0" stroke="#d88a40" stroke-width="8.0" opacity="0.45"/><path d="M195 287h0M188 299h0" stroke="#e8a050" stroke-width="10.0" opacity="0.60"/><path d="M196 408h0M201 406h0M181 358h0" stroke="#ffd060" stroke-width="11.0" opacity="0.50"/><path d="M212 462h0" stroke="#c09060" stroke-width="8.0" opacity="0.65"/><path d="M204 387h0M203 325h0" stroke="#ffd060" stroke-width="10.0" opacity="0.55"/><path d="M212 461h0M197 493h0" stroke="#f0d8a0" stroke-width="9.0" opacity="0.45"/><path d="M204 502h0" stroke="#e8b870" stroke-width="9.0" opacity="0.45"/><path d="M200 326h0" stroke="#ffe080" stroke-width="10.0" opacity="0.55"/><path d="M209 411h0M190 374h0" stroke="#fff2b0" stroke-width="10.0" opacity="0.60"/><path d="M221 308h0" stroke="#9a8070" stroke-width="6.0" opacity="0.35"/><path d="M196 459h0M194 473h0M223 467h0" stroke="#d0c0a0" stroke-width="7.0" opacity="0.40"/><path d="M205 491h0M204 457h0M211 441h0" stroke="#c09060" stroke-width="6.0" opacity="0.40"/><path d="M197 414h0" stroke="#ffd060" stroke-width="12.0" opacity="0.60"/><path d="M182 389h0M176 341h0" stroke="#c88040" stroke-width="9.0" opacity="0.70"/><path d="M189 501h0M198 457h0" stroke="#f0d8a0" stroke-width="8.0" opacity="0.65"/><path d="M195 497h0M189 497h0" stroke="#c09060" stroke-width="8.0" opacity="0.55"/><path d="M216 407h0M173 348h0" stroke="#c88040" stroke-width="14.0" opacity="0.50"/><path d="M200 481h0" stroke="#e8b870" stroke-width="5.0" opacity="0.40"/><path d="M207 482h0" stroke="#c09060" stroke-width="10.0" opacity="0.70"/><path d="M191 283h0" stroke="#d88a40" stroke-width="7.0" opacity="0.30"/><path d="M194 310h0" stroke="#b86a30" stroke-width="12.0" opacity="0.60"/><path d="M187 365h0M198 373h0" stroke="#fff2b0" stroke-width="11.0" opacity="0.60"/><path d="M201 452h0M201 468h0" stroke="#f0d8a0" stroke-width="9.0" opacity="0.55"/><path d="M198 415h0M198 435h0" stroke="#ffd060" stroke-width="14.0" opacity="0.60"/><path d="M205 392h0" stroke="#ffd060" stroke-width="8.0" opacity="0.50"/><path d="M207 284h0" stroke="#e8a050" stroke-width="10.0" opacity="0.55"/><path d="M207 308h0" stroke="#e8a050" stroke-width="8.0" opacity="0.25"/><path d="M223 381h0" stroke="#f0b050" stroke-width="13.0" opacity="0.65"/><path d="M200 475h0M216 451h0" stroke="#f0d8a0" stroke-width="7.0" opacity="0.50"/><path d="M196 368h0M192 360h0M185 327h0M201 413h0" stroke="#fff2b0" stroke-width="9.0" opacity="0.70"/><path d="M193 384h0M185 358h0M199 337h0" stroke="#ffe080" stroke-width="11.0" opacity="0.70"/><path d="M194 349h0" stroke="#ffe080" stroke-width="11.0" opacity="0.65"/><path d="M184 369h0" stroke="#ffe080" stroke-width="12.0" opacity="0.50"/><path d="M223 442h0M201 479h0M204 468h0" stroke="#e8b870" stroke-width="9.0" opacity="0.35"/><path d="M202 412h0" stroke="#fff2b0" stroke-width="15.0" opacity="0.35"/><path d="M197 395h0M192 395h0" stroke="#fff2b0" stroke-width="13.0" opacity="0.65"/><path d="M181 355h0" stroke="#fff2b0" stroke-width="13.0" opacity="0.40"/><path d="M193 411h0" stroke="#fff2b0" stroke-width="14.0" opacity="0.35"/><path d="M172 323h0" stroke="#c88040" stroke-width="11.0" opacity="0.40"/><path d="M213 292h0" stroke="#9a8070" stroke-width="8.0" opacity="0.50"/><path d="M180 488h0M210 442h0" stroke="#d0c0a0" stroke-width="9.0" opacity="0.70"/><path d="M194 428h0M195 365h0M180 340h0M198 384h0" stroke="#ffe080" stroke-width="12.0" opacity="0.40"/><path d="M184 289h0" stroke="#d88a40" stroke-width="13.0" opacity="0.25"/><path d="M181 363h0" stroke="#ffd060" stroke-width="8.0" opacity="0.35"/><path d="M201 370h0M183 356h0M204 365h0" stroke="#ffe080" stroke-width="9.0" opacity="0.60"/><path d="M199 498h0M202 488h0" stroke="#e8b870" stroke-width="6.0" opacity="0.50"/><path d="M173 351h0" stroke="#e09040" stroke-width="11.0" opacity="0.70"/><path d="M208 461h0" stroke="#f0d8a0" stroke-width="10.0" opacity="0.60"/><path d="M199 294h0" stroke="#e8a050" stroke-width="12.0" opacity="0.25"/><path d="M202 487h0M198 460h0" stroke="#d0c0a0" stroke-width="5.0" opacity="0.65"/><path d="M174 297h0" stroke="#d88a40" stroke-width="12.0" opacity="0.50"/><path d="M205 418h0M185 334h0" stroke="#fff2b0" stroke-width="10.0" opacity="0.50"/><path d="M196 459h0" stroke="#c09060" stroke-width="6.0" opacity="0.55"/><path d="M202 482h0" stroke="#f0d8a0" stroke-width="10.0" opacity="0.35"/><path d="M193 311h0M194 287h0" stroke="#e8a050" stroke-width="9.0" opacity="0.30"/><path d="M212 451h0M209 450h0" stroke="#e8b870" stroke-width="5.0" opacity="0.60"/><path d="M208 368h0" stroke="#e09040" stroke-width="15.0" opacity="0.50"/><path d="M180 358h0M203 431h0M201 424h0" stroke="#ffd060" stroke-width="12.0" opacity="0.75"/><path d="M221 371h0M176 318h0" stroke="#f0b050" stroke-width="10.0" opacity="0.75"/><path d="M209 282h0" stroke="#e8a050" stroke-width="8.0" opacity="0.40"/><path d="M204 416h0M185 383h0M182 338h0M185 319h0" stroke="#ffe080" stroke-width="14.0" opacity="0.70"/><path d="M208 388h0" stroke="#f0b050" stroke-width="13.0" opacity="0.70"/><path d="M195 349h0" stroke="#fff2b0" stroke-width="11.0" opacity="0.40"/><path d="M216 335h0M218 344h0" stroke="#f0b050" stroke-width="11.0" opacity="0.70"/><path d="M190 499h0M201 466h0" stroke="#e8b870" stroke-width="5.0" opacity="0.65"/><path d="M193 290h0" stroke="#e8a050" stroke-width="10.0" opacity="0.45"/><path d="M185 332h0M202 365h0" stroke="#ffd060" stroke-width="14.0" opacity="0.75"/><path d="M179 293h0M206 300h0" stroke="#b86a30" stroke-width="9.0" opacity="0.55"/><path d="M184 317h0" stroke="#ffe080" stroke-width="8.0" opacity="0.50"/><path d="M200 416h0" stroke="#fff2b0" stroke-width="16.0" opacity="0.65"/><path d="M195 464h0" stroke="#c09060" stroke-width="5.0" opacity="0.45"/><path d="M210 380h0" stroke="#f0b050" stroke-width="12.0" opacity="0.70"/><path d="M180 329h0M199 420h0" stroke="#ffd060" stroke-width="10.0" opacity="0.80"/><path d="M199 471h0M196 493h0" stroke="#f0d8a0" stroke-width="6.0" opacity="0.65"/><path d="M216 305h0" stroke="#b86a30" stroke-width="7.0" opacity="0.35"/><path d="M170 351h0" stroke="#c88040" stroke-width="10.0" opacity="0.75"/><path d="M180 414h0M217 391h0M207 359h0" stroke="#f0b050" stroke-width="9.0" opacity="0.55"/><path d="M184 410h0" stroke="#c88040" stroke-width="9.0" opacity="0.60"/><path d="M193 443h0M200 447h0" stroke="#d0c0a0" stroke-width="5.0" opacity="0.60"/><path d="M181 351h0M194 356h0M191 398h0" stroke="#ffd060" stroke-width="11.0" opacity="0.80"/><path d="M199 467h0M194 476h0" stroke="#f0d8a0" stroke-width="7.0" opacity="0.55"/><path d="M206 401h0" stroke="#fff2b0" stroke-width="15.0" opacity="0.65"/><path d="M187 441h0M208 448h0" stroke="#d0c0a0" stroke-width="7.0" opacity="0.45"/><path d="M194 290h0" stroke="#9a8070" stroke-width="10.0" opacity="0.60"/><path d="M196 500h0" stroke="#d0c0a0" stroke-width="5.0" opacity="0.35"/><path d="M213 410h0" stroke="#f0b050" stroke-width="16.0" opacity="0.70"/><path d="M204 397h0" stroke="#fff2b0" stroke-width="16.0" opacity="0.45"/><path d="M191 417h0" stroke="#ffd060" stroke-width="10.0" opacity="0.40"/><path d="M180 472h0M200 489h0M209 483h0" stroke="#c09060" stroke-width="6.0" opacity="0.65"/><path d="M196 361h0M200 375h0" stroke="#fff2b0" stroke-width="8.0" opacity="0.70"/><path d="M196 379h0M206 439h0M190 350h0" stroke="#ffd060" stroke-width="13.0" opacity="0.75"/><path d="M178 309h0" stroke="#d88a40" stroke-width="9.0" opacity="0.35"/><path d="M213 417h0" stroke="#e09040" stroke-width="8.0" opacity="0.50"/><path d="M195 304h0" stroke="#d88a40" stroke-width="9.0" opacity="0.30"/><path d="M192 388h0M198 321h0M203 373h0" stroke="#ffd060" stroke-width="9.0" opacity="0.35"/><path d="M190 368h0" stroke="#ffe080" stroke-width="10.0" opacity="0.50"/><path d="M216 410h0" stroke="#c88040" stroke-width="10.0" opacity="0.60"/><path d="M197 469h0" stroke="#c09060" stroke-width="7.0" opacity="0.50"/><path d="M202 371h0" stroke="#ffd060" stroke-width="10.0" opacity="0.65"/><path d="M194 495h0" stroke="#d0c0a0" stroke-width="6.0" opacity="0.50"/><path d="M211 463h0" stroke="#d0c0a0" stroke-width="10.0" opacity="0.60"/><path d="M208 463h0M204 490h0" stroke="#d0c0a0" stroke-width="8.0" opacity="0.65"/><path d="M189 381h0M195 347h0" stroke="#ffe080" stroke-width="15.0" opacity="0.60"/><path d="M195 348h0" stroke="#ffd060" stroke-width="13.0" opacity="0.35"/><path d="M175 282h0" stroke="#d88a40" stroke-width="12.0" opacity="0.25"/><path d="M187 407h0" stroke="#f0b050" stroke-width="13.0" opacity="0.80"/><path d="M199 417h0M205 431h0" stroke="#ffe080" stroke-width="10.0" opacity="0.70"/><path d="M216 409h0" stroke="#c88040" stroke-width="12.0" opacity="0.65"/><path d="M195 383h0M210 438h0" stroke="#ffd060" stroke-width="10.0" opacity="0.45"/><path d="M197 365h0" stroke="#ffd060" stroke-width="9.0" opacity="0.65"/><path d="M191 459h0" stroke="#c09060" stroke-width="7.0" opacity="0.65"/><path d="M202 335h0M185 344h0" stroke="#ffd060" stroke-width="12.0" opacity="0.45"/><path d="M195 424h0" stroke="#ffe080" stroke-width="9.0" opacity="0.50"/><path d="M189 421h0M213 413h0" stroke="#e09040" stroke-width="14.0" opacity="0.55"/><path d="M214 475h0M192 489h0" stroke="#f0d8a0" stroke-width="6.0" opacity="0.60"/><path d="M206 472h0M208 464h0" stroke="#e8b870" stroke-width="10.0" opacity="0.30"/><path d="M188 382h0" stroke="#ffd060" stroke-width="14.0" opacity="0.50"/><path d="M212 471h0" stroke="#d0c0a0" stroke-width="9.0" opacity="0.35"/><path d="M176 374h0M209 390h0M219 438h0" stroke="#e09040" stroke-width="10.0" opacity="0.40"/><path d="M218 446h0M211 476h0" stroke="#c09060" stroke-width="7.0" opacity="0.35"/><path d="M197 431h0M195 363h0M178 344h0" stroke="#fff2b0" stroke-width="12.0" opacity="0.75"/><path d="M196 470h0" stroke="#e8b870" stroke-width="8.0" opacity="0.35"/><path d="M190 360h0" stroke="#ffe080" stroke-width="15.0" opacity="0.35"/><path d="M204 422h0M187 368h0" stroke="#ffe080" stroke-width="14.0" opacity="0.55"/><path d="M195 471h0M204 441h0" stroke="#f0d8a0" stroke-width="6.0" opacity="0.50"/><path d="M196 424h0" stroke="#ffd060" stroke-width="12.0" opacity="0.40"/><path d="M197 309h0" stroke="#9a8070" stroke-width="11.0" opacity="0.30"/><path d="M197 423h0" stroke="#ffe080" stroke-width="12.0" opacity="0.65"/><path d="M191 329h0M197 405h0" stroke="#ffd060" stroke-width="13.0" opacity="0.60"/><path d="M193 350h0" stroke="#ffd060" stroke-width="10.0" opacity="0.75"/><path d="M201 398h0M190 356h0" stroke="#ffe080" stroke-width="11.0" opacity="0.50"/><path d="M200 414h0" stroke="#ffd060" stroke-width="11.0" opacity="0.65"/><path d="M198 502h0M208 477h0" stroke="#c09060" stroke-width="9.0" opacity="0.60"/><path d="M189 470h0" stroke="#d0c0a0" stroke-width="6.0" opacity="0.65"/><path d="M211 428h0" stroke="#fff2b0" stroke-width="12.0" opacity="0.70"/><path d="M186 366h0" stroke="#ffe080" stroke-width="12.0" opacity="0.60"/><path d="M192 501h0" stroke="#e8b870" stroke-width="6.0" opacity="0.60"/><path d="M215 412h0M164 350h0" stroke="#c88040" stroke-width="13.0" opacity="0.70"/><path d="M215 466h0" stroke="#c09060" stroke-width="6.0" opacity="0.60"/><path d="M183 376h0M211 438h0" stroke="#fff2b0" stroke-width="12.0" opacity="0.45"/><path d="M170 327h0" stroke="#c88040" stroke-width="14.0" opacity="0.70"/><path d="M191 439h0" stroke="#f0b050" stroke-width="12.0" opacity="0.45"/><path d="M198 367h0M187 367h0M187 355h0" stroke="#fff2b0" stroke-width="9.0" opacity="0.35"/><path d="M178 369h0" stroke="#f0b050" stroke-width="14.0" opacity="0.70"/><path d="M202 356h0M198 388h0" stroke="#ffd060" stroke-width="9.0" opacity="0.75"/><path d="M188 455h0M192 472h0" stroke="#f0d8a0" stroke-width="9.0" opacity="0.70"/><path d="M202 387h0M193 352h0M194 398h0M209 427h0" stroke="#ffd060" stroke-width="15.0" opacity="0.55"/><path d="M184 312h0M187 304h0M180 305h0" stroke="#9a8070" stroke-width="9.0" opacity="0.30"/><path d="M208 317h0" stroke="#e09040" stroke-width="11.0" opacity="0.45"/><path d="M200 463h0" stroke="#f0d8a0" stroke-width="8.0" opacity="0.30"/><path d="M160 310h0" stroke="#b86a30" stroke-width="13.0" opacity="0.55"/><path d="M208 316h0" stroke="#e09040" stroke-width="12.0" opacity="0.50"/><path d="M202 499h0" stroke="#f0d8a0" stroke-width="8.0" opacity="0.55"/><path d="M205 487h0M210 457h0M210 479h0" stroke="#f0d8a0" stroke-width="6.0" opacity="0.40"/><path d="M194 367h0M209 414h0M205 424h0" stroke="#ffe080" stroke-width="11.0" opacity="0.40"/><path d="M211 286h0" stroke="#9a8070" stroke-width="11.0" opacity="0.55"/><path d="M203 365h0M205 418h0" stroke="#ffe080" stroke-width="14.0" opacity="0.50"/><path d="M193 366h0M197 402h0" stroke="#ffd060" stroke-width="9.0" opacity="0.60"/><path d="M197 384h0" stroke="#ffe080" stroke-width="12.0" opacity="0.45"/><path d="M199 329h0M200 347h0" stroke="#ffe080" stroke-width="15.0" opacity="0.40"/><path d="M204 488h0" stroke="#c09060" stroke-width="7.0" opacity="0.30"/><path d="M228 438h0" stroke="#e09040" stroke-width="10.0" opacity="0.70"/><path d="M174 360h0M205 335h0" stroke="#f0b050" stroke-width="14.0" opacity="0.65"/><path d="M203 449h0" stroke="#e8b870" stroke-width="10.0" opacity="0.40"/><path d="M200 485h0M203 443h0M197 465h0" stroke="#e8b870" stroke-width="8.0" opacity="0.45"/><path d="M184 414h0" stroke="#f0b050" stroke-width="8.0" opacity="0.65"/><path d="M202 456h0" stroke="#d0c0a0" stroke-width="10.0" opacity="0.45"/><path d="M191 401h0" stroke="#ffd060" stroke-width="15.0" opacity="0.45"/><path d="M197 320h0" stroke="#ffe080" stroke-width="8.0" opacity="0.40"/><path d="M191 320h0" stroke="#ffe080" stroke-width="10.0" opacity="0.40"/><path d="M196 383h0M207 423h0" stroke="#ffd060" stroke-width="10.0" opacity="0.60"/><path d="M199 407h0" stroke="#ffd060" stroke-width="12.0" opacity="0.55"/><path d="M212 472h0M205 499h0" stroke="#d0c0a0" stroke-width="10.0" opacity="0.55"/><path d="M199 405h0M193 418h0M191 344h0M184 368h0" stroke="#ffe080" stroke-width="15.0" opacity="0.75"/><path d="M187 313h0M179 302h0" stroke="#b86a30" stroke-width="11.0" opacity="0.50"/><path d="M183 285h0" stroke="#b86a30" stroke-width="8.0" opacity="0.25"/><path d="M171 353h0" stroke="#e09040" stroke-width="8.0" opacity="0.65"/><path d="M189 447h0" stroke="#e8b870" stroke-width="9.0" opacity="0.65"/><path d="M185 296h0" stroke="#9a8070" stroke-width="10.0" opacity="0.40"/><path d="M193 305h0" stroke="#b86a30" stroke-width="7.0" opacity="0.60"/><path d="M205 445h0M208 490h0M202 442h0M210 441h0" stroke="#c09060" stroke-width="8.0" opacity="0.50"/><path d="M194 303h0M172 307h0" stroke="#e8a050" stroke-width="14.0" opacity="0.50"/><path d="M191 319h0M194 434h0" stroke="#fff2b0" stroke-width="8.0" opacity="0.55"/><path d="M210 443h0" stroke="#d0c0a0" stroke-width="8.0" opacity="0.40"/><path d="M188 364h0" stroke="#fff2b0" stroke-width="15.0" opacity="0.60"/><path d="M206 488h0M193 454h0M200 495h0" stroke="#f0d8a0" stroke-width="9.0" opacity="0.35"/><path d="M196 500h0" stroke="#e8b870" stroke-width="10.0" opacity="0.45"/><path d="M203 479h0M198 494h0M199 491h0" stroke="#c09060" stroke-width="8.0" opacity="0.35"/><path d="M189 339h0M212 431h0" stroke="#ffe080" stroke-width="14.0" opacity="0.45"/><path d="M192 404h0" stroke="#ffe080" stroke-width="10.0" opacity="0.45"/><path d="M208 411h0" stroke="#ffd060" stroke-width="13.0" opacity="0.55"/><path d="M198 356h0M196 412h0" stroke="#fff2b0" stroke-width="15.0" opacity="0.55"/><path d="M193 317h0M197 437h0" stroke="#fff2b0" stroke-width="13.0" opacity="0.50"/><path d="M227 313h0" stroke="#b86a30" stroke-width="8.0" opacity="0.30"/><path d="M211 297h0" stroke="#d88a40" stroke-width="9.0" opacity="0.50"/><path d="M169 314h0" stroke="#b86a30" stroke-width="12.0" opacity="0.45"/><path d="M189 347h0M194 330h0" stroke="#ffe080" stroke-width="9.0" opacity="0.40"/><path d="M192 399h0M189 406h0" stroke="#fff2b0" stroke-width="16.0" opacity="0.55"/><path d="M174 365h0" stroke="#e09040" stroke-width="13.0" opacity="0.75"/><path d="M196 318h0M202 413h0M190 405h0M210 410h0" stroke="#fff2b0" stroke-width="14.0" opacity="0.40"/><path d="M172 342h0" stroke="#c88040" stroke-width="11.0" opacity="0.65"/><path d="M203 423h0M193 372h0" stroke="#ffd060" stroke-width="16.0" opacity="0.60"/><path d="M195 288h0" stroke="#d88a40" stroke-width="8.0" opacity="0.50"/><path d="M207 312h0" stroke="#b86a30" stroke-width="13.0" opacity="0.30"/><path d="M188 412h0" stroke="#e09040" stroke-width="11.0" opacity="0.65"/><path d="M192 491h0M200 449h0" stroke="#d0c0a0" stroke-width="7.0" opacity="0.55"/><path d="M197 470h0" stroke="#c09060" stroke-width="8.0" opacity="0.70"/><path d="M191 414h0" stroke="#fff2b0" stroke-width="11.0" opacity="0.70"/><path d="M195 461h0" stroke="#f0d8a0" stroke-width="8.0" opacity="0.40"/><path d="M195 285h0" stroke="#b86a30" stroke-width="14.0" opacity="0.45"/><path d="M196 314h0" stroke="#9a8070" stroke-width="7.0" opacity="0.25"/><path d="M183 352h0M187 387h0" stroke="#ffe080" stroke-width="16.0" opacity="0.55"/><path d="M174 363h0M218 370h0" stroke="#f0b050" stroke-width="13.0" opacity="0.50"/><path d="M205 302h0" stroke="#9a8070" stroke-width="7.0" opacity="0.30"/><path d="M205 433h0" stroke="#ffd060" stroke-width="9.0" opacity="0.50"/><path d="M205 314h0" stroke="#b86a30" stroke-width="6.0" opacity="0.25"/><path d="M196 385h0M208 404h0" stroke="#ffe080" stroke-width="12.0" opacity="0.55"/><path d="M211 361h0" stroke="#f0b050" stroke-width="12.0" opacity="0.60"/><path d="M194 358h0" stroke="#fff2b0" stroke-width="11.0" opacity="0.65"/><path d="M220 442h0M187 487h0M192 453h0" stroke="#f0d8a0" stroke-width="7.0" opacity="0.60"/><path d="M181 354h0M196 318h0M200 346h0" stroke="#ffd060" stroke-width="15.0" opacity="0.75"/><path d="M203 457h0M190 491h0" stroke="#d0c0a0" stroke-width="8.0" opacity="0.35"/><path d="M212 447h0M213 443h0" stroke="#d0c0a0" stroke-width="6.0" opacity="0.55"/><path d="M216 297h0M175 304h0" stroke="#d88a40" stroke-width="9.0" opacity="0.25"/><path d="M217 431h0M190 417h0" stroke="#c88040" stroke-width="15.0" opacity="0.55"/><path d="M164 358h0" stroke="#c88040" stroke-width="14.0" opacity="0.40"/><path d="M192 369h0" stroke="#fff2b0" stroke-width="11.0" opacity="0.50"/><path d="M215 387h0" stroke="#e09040" stroke-width="16.0" opacity="0.45"/><path d="M227 309h0M191 312h0" stroke="#b86a30" stroke-width="10.0" opacity="0.55"/><path d="M190 313h0" stroke="#e8a050" stroke-width="7.0" opacity="0.45"/><path d="M200 305h0" stroke="#e8a050" stroke-width="8.0" opacity="0.55"/><path d="M199 294h0M220 305h0" stroke="#d88a40" stroke-width="11.0" opacity="0.50"/><path d="M204 309h0" stroke="#d88a40" stroke-width="10.0" opacity="0.45"/><path d="M194 447h0" stroke="#c09060" stroke-width="5.0" opacity="0.50"/><path d="M213 426h0M161 349h0" stroke="#f0b050" stroke-width="15.0" opacity="0.45"/><path d="M202 283h0" stroke="#9a8070" stroke-width="14.0" opacity="0.50"/><path d="M203 281h0" stroke="#9a8070" stroke-width="14.0" opacity="0.45"/><path d="M192 310h0" stroke="#9a8070" stroke-width="13.0" opacity="0.35"/><path d="M194 482h0M210 477h0" stroke="#c09060" stroke-width="8.0" opacity="0.40"/><path d="M166 391h0" stroke="#e09040" stroke-width="9.0" opacity="0.40"/><path d="M180 421h0" stroke="#e09040" stroke-width="15.0" opacity="0.45"/><path d="M213 432h0" stroke="#ffd060" stroke-width="15.0" opacity="0.65"/><path d="M208 424h0" stroke="#ffe080" stroke-width="9.0" opacity="0.55"/><path d="M200 310h0M209 298h0" stroke="#e8a050" stroke-width="6.0" opacity="0.30"/><path d="M187 404h0" stroke="#f0b050" stroke-width="16.0" opacity="0.75"/><path d="M194 372h0M202 365h0" stroke="#fff2b0" stroke-width="10.0" opacity="0.45"/><path d="M214 347h0" stroke="#f0b050" stroke-width="13.0" opacity="0.60"/><path d="M203 291h0" stroke="#e8a050" stroke-width="11.0" opacity="0.40"/><path d="M190 490h0" stroke="#f0d8a0" stroke-width="9.0" opacity="0.40"/><path d="M205 396h0" stroke="#ffd060" stroke-width="8.0" opacity="0.70"/><path d="M199 380h0" stroke="#ffe080" stroke-width="9.0" opacity="0.75"/><path d="M196 494h0" stroke="#f0d8a0" stroke-width="5.0" opacity="0.35"/><path d="M176 316h0" stroke="#e09040" stroke-width="11.0" opacity="0.60"/><path d="M199 375h0" stroke="#fff2b0" stroke-width="10.0" opacity="0.70"/><path d="M195 483h0" stroke="#e8b870" stroke-width="10.0" opacity="0.35"/><path d="M179 369h0" stroke="#f0b050" stroke-width="13.0" opacity="0.35"/><path d="M196 451h0M201 500h0" stroke="#d0c0a0" stroke-width="7.0" opacity="0.60"/><path d="M212 479h0" stroke="#e8b870" stroke-width="9.0" opacity="0.60"/><path d="M197 285h0" stroke="#e8a050" stroke-width="8.0" opacity="0.50"/><path d="M203 366h0" stroke="#ffd060" stroke-width="10.0" opacity="0.70"/><path d="M183 368h0" stroke="#ffd060" stroke-width="13.0" opacity="0.50"/><path d="M194 312h0" stroke="#e8a050" stroke-width="8.0" opacity="0.30"/><path d="M205 352h0" stroke="#e09040" stroke-width="13.0" opacity="0.55"/><path d="M193 374h0" stroke="#ffe080" stroke-width="12.0" opacity="0.70"/><path d="M198 442h0" stroke="#c09060" stroke-width="7.0" opacity="0.45"/><path d="M186 284h0" stroke="#9a8070" stroke-width="12.0" opacity="0.55"/><path d="M175 336h0" stroke="#e09040" stroke-width="13.0" opacity="0.50"/><path d="M203 441h0" stroke="#c09060" stroke-width="7.0" opacity="0.55"/><path d="M198 488h0" stroke="#c09060" stroke-width="9.0" opacity="0.65"/><path d="M186 367h0" stroke="#ffd060" stroke-width="15.0" opacity="0.40"/><path d="M212 451h0" stroke="#c09060" stroke-width="5.0" opacity="0.55"/><path d="M197 365h0" stroke="#ffe080" stroke-width="13.0" opacity="0.60"/><path d="M202 443h0" stroke="#d0c0a0" stroke-width="7.0" opacity="0.50"/><path d="M193 467h0M194 479h0" stroke="#f0d8a0" stroke-width="6.0" opacity="0.35"/><path d="M203 407h0" stroke="#fff2b0" stroke-width="13.0" opacity="0.75"/><path d="M202 336h0M199 438h0" stroke="#fff2b0" stroke-width="9.0" opacity="0.65"/><path d="M210 286h0" stroke="#e8a050" stroke-width="10.0" opacity="0.30"/><path d="M218 336h0" stroke="#c88040" stroke-width="15.0" opacity="0.60"/><path d="M205 327h0" stroke="#c88040" stroke-width="10.0" opacity="0.65"/><path d="M173 334h0M203 334h0" stroke="#e09040" stroke-width="12.0" opacity="0.65"/><path d="M207 440h0M181 364h0" stroke="#ffd060" stroke-width="8.0" opacity="0.45"/><path d="M202 387h0" stroke="#ffd060" stroke-width="14.0" opacity="0.40"/><path d="M208 456h0M194 496h0M192 486h0" stroke="#f0d8a0" stroke-width="6.0" opacity="0.45"/><path d="M192 289h0" stroke="#b86a30" stroke-width="8.0" opacity="0.50"/><path d="M207 495h0" stroke="#d0c0a0" stroke-width="6.0" opacity="0.30"/><path d="M214 489h0" stroke="#e8b870" stroke-width="7.0" opacity="0.50"/><path d="M197 489h0" stroke="#d0c0a0" stroke-width="7.0" opacity="0.70"/><path d="M185 397h0" stroke="#f0b050" stroke-width="15.0" opacity="0.60"/><path d="M185 326h0" stroke="#ffe080" stroke-width="14.0" opacity="0.60"/><path d="M177 283h0" stroke="#d88a40" stroke-width="9.0" opacity="0.45"/><path d="M187 328h0" stroke="#ffd060" stroke-width="16.0" opacity="0.70"/><path d="M177 287h0" stroke="#9a8070" stroke-width="10.0" opacity="0.50"/><path d="M210 493h0M209 456h0" stroke="#d0c0a0" stroke-width="6.0" opacity="0.35"/><path d="M205 354h0M185 423h0" stroke="#c88040" stroke-width="14.0" opacity="0.55"/><path d="M206 355h0" stroke="#e09040" stroke-width="12.0" opacity="0.55"/><path d="M197 314h0" stroke="#e8a050" stroke-width="13.0" opacity="0.50"/><path d="M203 458h0M195 485h0" stroke="#d0c0a0" stroke-width="7.0" opacity="0.65"/><path d="M190 357h0" stroke="#fff2b0" stroke-width="15.0" opacity="0.75"/><path d="M192 451h0" stroke="#d0c0a0" stroke-width="9.0" opacity="0.45"/><path d="M202 392h0" stroke="#ffd060" stroke-width="8.0" opacity="0.80"/><path d="M182 344h0" stroke="#ffe080" stroke-width="9.0" opacity="0.70"/><path d="M192 308h0" stroke="#e8a050" stroke-width="14.0" opacity="0.60"/><path d="M193 477h0" stroke="#e8b870" stroke-width="9.0" opacity="0.50"/><path d="M192 382h0M179 353h0" stroke="#ffd060" stroke-width="13.0" opacity="0.45"/><path d="M171 356h0" stroke="#c88040" stroke-width="12.0" opacity="0.35"/><path d="M175 292h0" stroke="#e8a050" stroke-width="13.0" opacity="0.30"/><path d="M198 301h0" stroke="#d88a40" stroke-width="7.0" opacity="0.55"/><path d="M190 308h0" stroke="#b86a30" stroke-width="6.0" opacity="0.50"/><path d="M201 383h0" stroke="#ffe080" stroke-width="15.0" opacity="0.70"/><path d="M213 472h0" stroke="#c09060" stroke-width="8.0" opacity="0.60"/><path d="M208 283h0" stroke="#d88a40" stroke-width="8.0" opacity="0.30"/><path d="M222 290h0" stroke="#9a8070" stroke-width="8.0" opacity="0.60"/><path d="M195 309h0" stroke="#e8a050" stroke-width="13.0" opacity="0.60"/><path d="M181 376h0" stroke="#c88040" stroke-width="16.0" opacity="0.45"/><path d="M210 384h0" stroke="#c88040" stroke-width="12.0" opacity="0.45"/><path d="M184 296h0" stroke="#b86a30" stroke-width="14.0" opacity="0.50"/><path d="M213 423h0" stroke="#c88040" stroke-width="15.0" opacity="0.35"/><path d="M183 389h0" stroke="#f0b050" stroke-width="15.0" opacity="0.35"/><path d="M184 378h0" stroke="#ffd060" stroke-width="11.0" opacity="0.70"/><path d="M184 303h0M181 290h0M201 286h0" stroke="#b86a30" stroke-width="12.0" opacity="0.50"/><path d="M196 290h0" stroke="#e8a050" stroke-width="7.0" opacity="0.50"/><path d="M174 319h0" stroke="#e09040" stroke-width="8.0" opacity="0.35"/><path d="M194 299h0" stroke="#e8a050" stroke-width="6.0" opacity="0.25"/><path d="M189 361h0" stroke="#ffd060" stroke-width="16.0" opacity="0.75"/><path d="M172 346h0" stroke="#f0b050" stroke-width="15.0" opacity="0.55"/><path d="M190 414h0" stroke="#fff2b0" stroke-width="16.0" opacity="0.40"/><path d="M184 303h0" stroke="#e8a050" stroke-width="12.0" opacity="0.35"/><path d="M171 335h0" stroke="#c88040" stroke-width="12.0" opacity="0.40"/><path d="M200 454h0" stroke="#f0d8a0" stroke-width="9.0" opacity="0.60"/><path d="M186 325h0M209 416h0" stroke="#fff2b0" stroke-width="10.0" opacity="0.40"/><path d="M180 384h0" stroke="#f0b050" stroke-width="15.0" opacity="0.50"/><path d="M188 412h0" stroke="#f0b050" stroke-width="8.0" opacity="0.75"/><path d="M207 293h0" stroke="#b86a30" stroke-width="9.0" opacity="0.30"/><path d="M189 396h0" stroke="#ffd060" stroke-width="8.0" opacity="0.55"/><path d="M176 413h0" stroke="#f0b050" stroke-width="12.0" opacity="0.55"/><path d="M203 341h0" stroke="#c88040" stroke-width="9.0" opacity="0.35"/><path d="M204 494h0M194 497h0" stroke="#c09060" stroke-width="7.0" opacity="0.60"/><path d="M206 426h0" stroke="#fff2b0" stroke-width="16.0" opacity="0.75"/><path d="M208 359h0" stroke="#f0b050" stroke-width="9.0" opacity="0.60"/><path d="M186 303h0" stroke="#9a8070" stroke-width="11.0" opacity="0.25"/><path d="M197 302h0" stroke="#b86a30" stroke-width="9.0" opacity="0.50"/><path d="M189 380h0M188 316h0" stroke="#ffe080" stroke-width="13.0" opacity="0.45"/><path d="M205 356h0M173 328h0" stroke="#c88040" stroke-width="11.0" opacity="0.60"/><path d="M205 346h0" stroke="#e09040" stroke-width="10.0" opacity="0.65"/><path d="M182 386h0" stroke="#c88040" stroke-width="13.0" opacity="0.65"/><path d="M195 407h0" stroke="#fff2b0" stroke-width="15.0" opacity="0.80"/><path d="M215 403h0" stroke="#f0b050" stroke-width="14.0" opacity="0.50"/><path d="M172 309h0" stroke="#e8a050" stroke-width="10.0" opacity="0.25"/><path d="M206 457h0" stroke="#d0c0a0" stroke-width="5.0" opacity="0.55"/><path d="M214 433h0M217 414h0" stroke="#c88040" stroke-width="13.0" opacity="0.60"/><path d="M208 350h0" stroke="#f0b050" stroke-width="10.0" opacity="0.70"/><path d="M205 429h0M206 414h0" stroke="#fff2b0" stroke-width="11.0" opacity="0.35"/><path d="M200 303h0" stroke="#9a8070" stroke-width="7.0" opacity="0.45"/><path d="M203 473h0" stroke="#e8b870" stroke-width="9.0" opacity="0.40"/><path d="M198 323h0" stroke="#fff2b0" stroke-width="12.0" opacity="0.55"/><path d="M168 360h0" stroke="#c88040" stroke-width="10.0" opacity="0.70"/><path d="M204 423h0" stroke="#fff2b0" stroke-width="9.0" opacity="0.50"/><path d="M213 302h0" stroke="#d88a40" stroke-width="14.0" opacity="0.45"/><path d="M188 423h0" stroke="#c88040" stroke-width="10.0" opacity="0.35"/><path d="M216 433h0" stroke="#c88040" stroke-width="10.0" opacity="0.40"/><path d="M213 457h0" stroke="#e8b870" stroke-width="7.0" opacity="0.45"/><path d="M202 479h0" stroke="#f0d8a0" stroke-width="7.0" opacity="0.65"/><path d="M188 361h0" stroke="#ffe080" stroke-width="16.0" opacity="0.80"/><path d="M173 294h0" stroke="#d88a40" stroke-width="10.0" opacity="0.50"/><path d="M220 399h0" stroke="#c88040" stroke-width="16.0" opacity="0.60"/><path d="M173 302h0" stroke="#9a8070" stroke-width="7.0" opacity="0.50"/><path d="M210 297h0" stroke="#b86a30" stroke-width="10.0" opacity="0.45"/><path d="M205 403h0" stroke="#ffd060" stroke-width="8.0" opacity="0.60"/><path d="M201 419h0M188 360h0M178 322h0" stroke="#fff2b0" stroke-width="14.0" opacity="0.70"/><path d="M185 398h0" stroke="#c88040" stroke-width="16.0" opacity="0.65"/><path d="M169 358h0" stroke="#e09040" stroke-width="15.0" opacity="0.80"/><path d="M182 391h0" stroke="#f0b050" stroke-width="15.0" opacity="0.70"/><path d="M178 304h0" stroke="#d88a40" stroke-width="8.0" opacity="0.35"/><path d="M204 318h0" stroke="#ffd060" stroke-width="14.0" opacity="0.35"/><path d="M204 354h0M204 366h0" stroke="#c88040" stroke-width="13.0" opacity="0.75"/><path d="M186 412h0" stroke="#c88040" stroke-width="12.0" opacity="0.70"/><path d="M205 452h0" stroke="#e8b870" stroke-width="8.0" opacity="0.40"/><path d="M196 501h0" stroke="#d0c0a0" stroke-width="9.0" opacity="0.65"/><path d="M197 498h0" stroke="#d0c0a0" stroke-width="5.0" opacity="0.40"/><path d="M203 374h0" stroke="#fff2b0" stroke-width="13.0" opacity="0.55"/><path d="M213 408h0" stroke="#f0b050" stroke-width="8.0" opacity="0.60"/><path d="M206 377h0" stroke="#ffd060" stroke-width="14.0" opacity="0.70"/><path d="M180 362h0" stroke="#fff2b0" stroke-width="14.0" opacity="0.45"/><path d="M185 363h0" stroke="#ffd060" stroke-width="9.0" opacity="0.45"/><path d="M188 313h0" stroke="#e8a050" stroke-width="13.0" opacity="0.35"/><path d="M187 310h0" stroke="#b86a30" stroke-width="10.0" opacity="0.30"/><path d="M206 481h0" stroke="#f0d8a0" stroke-width="10.0" opacity="0.50"/><path d="M208 420h0" stroke="#fff2b0" stroke-width="10.0" opacity="0.75"/><path d="M215 304h0" stroke="#e8a050" stroke-width="9.0" opacity="0.50"/><path d="M193 428h0" stroke="#fff2b0" stroke-width="12.0" opacity="0.40"/><path d="M184 489h0" stroke="#f0d8a0" stroke-width="9.0" opacity="0.30"/><path d="M187 358h0" stroke="#ffd060" stroke-width="13.0" opacity="0.40"/><path d="M194 291h0" stroke="#9a8070" stroke-width="7.0" opacity="0.60"/><path d="M197 497h0" stroke="#c09060" stroke-width="10.0" opacity="0.60"/><path d="M176 402h0" stroke="#e09040" stroke-width="9.0" opacity="0.75"/><path d="M204 464h0" stroke="#d0c0a0" stroke-width="9.0" opacity="0.60"/><path d="M193 297h0" stroke="#d88a40" stroke-width="11.0" opacity="0.40"/><path d="M173 315h0" stroke="#e09040" stroke-width="13.0" opacity="0.45"/><path d="M193 346h0" stroke="#ffd060" stroke-width="11.0" opacity="0.40"/><path d="M193 306h0" stroke="#e8a050" stroke-width="6.0" opacity="0.35"/><path d="M201 304h0" stroke="#9a8070" stroke-width="11.0" opacity="0.45"/><path d="M203 495h0" stroke="#f0d8a0" stroke-width="7.0" opacity="0.40"/><path d="M191 409h0" stroke="#ffd060" stroke-width="15.0" opacity="0.70"/></g><ellipse cx="197" cy="361" rx="13" ry="50" fill="#fff0b0" opacity="0.75" filter="url(#b4)"/><ellipse cx="582" cy="346" rx="121" ry="116" fill="#6a3a08" opacity="0.45" filter="url(#b10)"/><ellipse cx="582" cy="346" rx="111" ry="106" fill="#4a2a06" filter="url(#b4)"/><ellipse cx="582" cy="346" rx="105" ry="100" fill="none" stroke="#a06410" stroke-width="22" opacity="0.7" filter="url(#b6)"/><path d="M560.0 246.0 L560.0 201.0 Q593.0 181.0 613.0 186.0 Q643.0 176.0 651.0 201.0 L649.0 246.0 Z" fill="#5a3408" opacity="0.7" filter="url(#b6)"/><g filter="url(#pb05)" stroke-linecap="round"><path d="M554 317h0M517 277h0M531 361h0M536 298h0M547 431h0M572 345h0M552 444h0M541 307h0M614 243h0M626 217h0M585 203h0M590 231h0M642 246h0" stroke="#b85a0a" stroke-width="4.0" opacity="0.50"/><path d="M539 368h0M501 292h0M593 371h0M668 364h0M666 327h0M646 435h0M678 355h0M567 238h0M621 395h0M523 297h0M660 325h0M633 394h0M479 370h0M635 217h0" stroke="#ffe050" stroke-width="2.0" opacity="0.85"/><path d="M503 386h0M487 298h0M548 435h0M613 268h0M658 379h0M667 322h0M623 380h0M588 279h0M514 291h0M586 397h0M672 342h0" stroke="#e07a0c" stroke-width="2.0" opacity="0.65"/><path d="M647 437h0M666 291h0M580 333h0M652 406h0M539 443h0M539 430h0M607 342h0M578 374h0M679 297h0M692 327h0M545 388h0M558 364h0M620 229h0M581 193h0M594 248h0M605 249h0M632 250h0M572 231h0M564 197h0" stroke="#b85a0a" stroke-width="5.0" opacity="0.60"/><path d="M674 370h0M513 379h0M564 452h0M528 369h0M519 410h0M604 455h0M506 421h0M656 432h0M645 271h0M522 321h0M670 290h0M495 342h0M605 228h0" stroke="#ffe050" stroke-width="2.0" opacity="0.80"/><path d="M640 283h0M659 294h0M484 385h0M493 317h0M671 293h0M533 311h0M494 309h0M651 301h0M630 403h0M609 298h0M686 332h0M520 405h0" stroke="#ffcc20" stroke-width="2.0" opacity="0.90"/><path d="M643 280h0M557 313h0M495 402h0M646 344h0M565 388h0M687 313h0M503 296h0M526 427h0M552 431h0M487 313h0M579 443h0M654 270h0M555 318h0M671 393h0M520 267h0M571 240h0M576 452h0M670 365h0M488 292h0M569 239h0M638 207h0" stroke="#ffe050" stroke-width="3.0" opacity="0.60"/><path d="M670 316h0M491 339h0M579 239h0M487 286h0M488 388h0M633 292h0M618 250h0M575 254h0M574 417h0M536 364h0M549 339h0M521 360h0M605 435h0M585 194h0M597 221h0M586 244h0M631 222h0M618 234h0M586 209h0" stroke="#e07a0c" stroke-width="2.0" opacity="0.60"/><path d="M673 305h0M497 301h0M652 398h0" stroke="#8a4008" stroke-width="1.0" opacity="0.45"/><path d="M555 416h0M602 277h0M500 379h0M606 377h0M524 288h0M633 336h0M693 350h0M486 317h0M503 407h0M589 278h0M679 374h0M547 373h0M466 343h0M532 289h0M479 331h0M649 228h0M576 226h0M645 217h0" stroke="#ffe050" stroke-width="2.0" opacity="0.70"/><path d="M662 285h0M561 460h0M494 316h0M612 440h0M598 254h0M599 283h0M549 443h0M486 283h0M650 411h0M644 418h0M685 377h0M536 428h0M610 374h0M584 236h0M504 347h0M505 396h0M484 296h0M605 342h0M648 391h0M608 212h0M575 239h0M574 237h0M614 233h0" stroke="#ffe050" stroke-width="3.0" opacity="0.75"/><path d="M606 380h0M691 367h0M625 274h0M660 396h0M513 326h0M651 336h0M650 372h0M592 442h0M658 334h0M625 226h0M618 247h0" stroke="#e07a0c" stroke-width="4.0" opacity="0.75"/><path d="M690 322h0M677 381h0M490 389h0M679 339h0M532 371h0M546 329h0M569 382h0M565 409h0M630 421h0M657 333h0M627 260h0M467 338h0M567 443h0M566 322h0M481 348h0M546 410h0M653 371h0M632 224h0M617 251h0M606 249h0M643 218h0M609 172h0" stroke="#f59a10" stroke-width="3.0" opacity="0.85"/><path d="M541 414h0M653 269h0M527 426h0M653 429h0M557 445h0M627 289h0M513 374h0M581 441h0M597 359h0M678 390h0M581 440h0M683 320h0" stroke="#b85a0a" stroke-width="4.0" opacity="0.85"/><path d="M546 341h0M547 259h0M511 270h0M573 240h0M582 296h0M556 291h0M574 249h0M659 266h0M622 429h0M645 285h0M654 276h0M524 365h0M498 383h0M522 430h0M477 365h0M614 219h0M568 227h0M566 236h0M629 214h0" stroke="#f59a10" stroke-width="2.0" opacity="0.85"/><path d="M480 321h0M518 255h0M679 351h0M528 370h0M665 280h0M624 224h0" stroke="#f59a10" stroke-width="1.0" opacity="0.95"/><path d="M629 270h0M515 344h0M502 336h0M565 324h0M698 370h0M574 409h0M543 282h0M501 348h0M517 438h0M621 265h0M538 315h0M560 205h0M569 187h0M628 243h0" stroke="#e07a0c" stroke-width="2.0" opacity="0.90"/><path d="M675 327h0M612 290h0M511 432h0M525 429h0M572 383h0M574 456h0M672 403h0M500 287h0M578 454h0M600 407h0M613 332h0M595 267h0M505 374h0M590 445h0M510 413h0M514 410h0M567 234h0M603 244h0M653 193h0" stroke="#b85a0a" stroke-width="2.0" opacity="0.95"/><path d="M492 384h0M590 267h0M494 359h0M669 360h0M669 316h0M496 285h0M667 344h0M476 380h0M543 363h0M615 227h0M603 245h0" stroke="#ffb818" stroke-width="4.0" opacity="0.75"/><path d="M688 351h0M535 252h0M535 272h0M624 241h0M619 268h0M655 398h0M694 323h0M504 420h0M670 287h0M587 362h0M555 376h0M655 415h0M578 229h0M599 246h0M579 241h0" stroke="#b85a0a" stroke-width="3.0" opacity="0.60"/><path d="M547 279h0M623 246h0M680 394h0M569 374h0M518 372h0M659 294h0M547 436h0M506 352h0M651 264h0M620 359h0M670 300h0M514 265h0M638 390h0M583 443h0M663 340h0M535 415h0M590 237h0M606 219h0M594 230h0M598 218h0" stroke="#8a4008" stroke-width="3.0" opacity="0.70"/><path d="M551 367h0M590 438h0M580 344h0M550 245h0M517 384h0M676 359h0M631 430h0M530 269h0M606 414h0" stroke="#ffcc20" stroke-width="5.0" opacity="0.80"/><path d="M643 345h0M510 258h0M564 330h0M501 366h0M672 369h0M600 317h0M501 345h0M571 258h0M637 261h0M503 326h0M586 262h0M597 232h0M652 203h0M611 213h0" stroke="#ffb818" stroke-width="2.0" opacity="0.75"/><path d="M631 401h0M579 364h0M577 256h0M555 409h0M500 347h0M543 287h0M632 285h0M672 368h0M675 409h0M594 273h0M568 296h0M510 291h0M606 426h0M670 318h0M649 345h0" stroke="#8a4008" stroke-width="4.0" opacity="0.75"/><path d="M698 379h0M468 357h0M494 366h0M628 428h0M544 417h0M591 188h0M621 240h0" stroke="#ffb818" stroke-width="5.0" opacity="0.65"/><path d="M476 358h0M546 385h0M505 420h0M601 424h0M552 359h0M519 404h0M674 368h0M501 327h0M626 270h0M503 425h0M642 279h0M672 369h0M596 219h0M562 203h0M585 228h0M600 222h0" stroke="#8a4008" stroke-width="3.0" opacity="0.90"/><path d="M562 431h0M544 243h0M626 344h0M605 438h0M649 286h0M631 266h0M608 405h0M654 318h0M564 272h0M644 372h0M590 444h0M609 268h0M516 387h0M690 371h0M690 363h0M642 261h0M535 362h0M550 452h0M538 419h0M673 278h0M588 189h0M593 204h0" stroke="#ffb818" stroke-width="3.0" opacity="0.60"/><path d="M680 326h0M532 279h0M686 348h0M613 346h0M610 400h0M483 339h0M599 246h0M515 411h0M598 443h0M617 283h0M568 319h0M635 323h0M665 339h0M659 347h0M487 290h0M499 320h0M596 245h0M658 429h0" stroke="#b85a0a" stroke-width="4.0" opacity="0.95"/><path d="M528 335h0M572 402h0M543 274h0M674 318h0M507 377h0M472 340h0M565 221h0" stroke="#8a4008" stroke-width="1.0" opacity="0.60"/><path d="M660 417h0M610 374h0M535 421h0M683 352h0M530 379h0M518 398h0M647 440h0M573 266h0M558 363h0M588 259h0M509 395h0M566 293h0M570 452h0M575 442h0M497 284h0M549 427h0M665 369h0M548 419h0M646 246h0M596 242h0M580 229h0" stroke="#b85a0a" stroke-width="3.0" opacity="0.75"/><path d="M557 400h0M612 398h0M551 439h0M583 437h0M652 398h0M616 287h0M686 318h0M613 423h0M640 354h0M667 273h0M474 368h0M651 393h0M621 209h0M602 233h0" stroke="#ffe050" stroke-width="2.0" opacity="0.60"/><path d="M528 442h0M680 292h0M627 367h0M604 438h0M520 411h0M548 370h0M603 447h0M479 327h0M524 304h0" stroke="#ffcc20" stroke-width="5.0" opacity="0.75"/><path d="M556 263h0M501 398h0M522 329h0M532 417h0M656 328h0M676 360h0M687 299h0M550 271h0M682 316h0M558 262h0M626 317h0M633 387h0M576 417h0M511 384h0M579 304h0M612 230h0" stroke="#f59a10" stroke-width="4.0" opacity="0.95"/><path d="M674 407h0M635 303h0M542 286h0M576 300h0M553 449h0M532 441h0M525 408h0M694 373h0M560 428h0M564 390h0M671 336h0M658 284h0M628 338h0M606 220h0M642 199h0" stroke="#f59a10" stroke-width="2.0" opacity="0.80"/><path d="M571 301h0M589 439h0M608 241h0M519 353h0M622 251h0M601 424h0M613 251h0M507 312h0M523 263h0M503 421h0M557 264h0M677 332h0M571 306h0M547 333h0M574 206h0M633 246h0M632 190h0M637 239h0" stroke="#8a4008" stroke-width="5.0" opacity="0.50"/><path d="M508 269h0M586 285h0M594 240h0M614 406h0M630 321h0M626 278h0M547 266h0M686 348h0M502 391h0M635 238h0M639 177h0" stroke="#ffb818" stroke-width="5.0" opacity="0.85"/><path d="M499 320h0M607 372h0M557 416h0M541 412h0M591 234h0M637 245h0M565 222h0M563 220h0" stroke="#b85a0a" stroke-width="5.0" opacity="0.45"/><path d="M517 416h0M639 339h0M633 288h0M512 294h0M525 275h0M671 355h0M691 345h0M620 445h0M545 356h0M554 267h0M608 238h0" stroke="#8a4008" stroke-width="5.0" opacity="0.45"/><path d="M520 420h0M498 397h0M637 315h0M665 306h0M614 451h0M607 444h0M513 371h0M650 272h0M665 275h0" stroke="#b85a0a" stroke-width="5.0" opacity="0.85"/><path d="M654 310h0M590 410h0M619 324h0M685 349h0M475 314h0M578 361h0M604 319h0M660 305h0M556 430h0M595 376h0M639 271h0M522 421h0M609 246h0M644 261h0M645 297h0M619 423h0M658 362h0M581 225h0M577 229h0M644 181h0M614 239h0" stroke="#ffb818" stroke-width="3.0" opacity="0.85"/><path d="M531 434h0M552 282h0M671 374h0M498 415h0M674 363h0M502 338h0M600 390h0M689 348h0M655 395h0M650 314h0M685 330h0M506 275h0M581 219h0" stroke="#8a4008" stroke-width="2.0" opacity="0.85"/><path d="M585 394h0M580 408h0M595 449h0M492 386h0M611 244h0M496 319h0M667 342h0M663 340h0M525 440h0M503 374h0M587 191h0M585 226h0M575 233h0" stroke="#f59a10" stroke-width="5.0" opacity="0.65"/><path d="M487 341h0M636 376h0M667 376h0M473 355h0M566 342h0M475 330h0M580 236h0M565 439h0M513 385h0" stroke="#f59a10" stroke-width="5.0" opacity="0.55"/><path d="M658 330h0M610 403h0M672 403h0M557 285h0M499 414h0M499 295h0M548 312h0M492 385h0M649 423h0M617 309h0" stroke="#b85a0a" stroke-width="2.0" opacity="1.00"/><path d="M669 418h0M665 382h0M529 256h0M640 423h0M569 299h0M596 405h0M553 245h0M637 297h0M578 286h0M695 359h0M616 361h0M485 370h0M507 410h0M507 389h0M667 354h0M690 381h0M613 249h0M555 295h0M686 306h0M650 272h0M569 249h0" stroke="#8a4008" stroke-width="3.0" opacity="0.75"/><path d="M562 254h0M631 322h0M470 330h0M609 391h0M650 414h0M678 385h0M561 392h0M664 271h0M664 307h0M604 390h0M507 357h0M492 329h0M604 252h0M523 284h0M552 405h0M586 325h0M659 294h0M607 401h0M575 447h0M640 186h0M592 208h0" stroke="#f59a10" stroke-width="4.0" opacity="0.80"/><path d="M631 391h0M512 290h0M638 288h0M534 401h0M609 270h0M606 410h0M510 376h0M504 420h0M501 399h0M532 445h0M588 290h0M479 305h0M654 372h0M623 212h0M647 232h0M590 251h0" stroke="#f59a10" stroke-width="4.0" opacity="0.65"/><path d="M626 271h0M634 334h0M569 428h0M499 335h0M690 381h0M478 358h0M607 249h0M617 314h0M526 269h0M624 431h0M570 266h0M647 285h0M537 368h0M654 408h0M513 311h0M541 441h0M661 419h0M617 237h0M636 236h0M639 250h0" stroke="#e07a0c" stroke-width="2.0" opacity="0.70"/><path d="M600 418h0M517 289h0M611 435h0M520 427h0M667 305h0M602 394h0M562 255h0M473 320h0M501 290h0M562 297h0M676 389h0M502 342h0M485 335h0M514 263h0M610 215h0" stroke="#b85a0a" stroke-width="2.0" opacity="0.80"/><path d="M557 326h0M667 289h0M574 241h0M577 259h0M647 291h0M686 388h0M595 366h0M501 327h0M621 211h0M592 222h0" stroke="#ffb818" stroke-width="4.0" opacity="0.45"/><path d="M587 423h0M563 409h0M486 373h0M520 389h0M565 448h0M537 416h0M487 330h0M630 280h0M626 247h0" stroke="#ffb818" stroke-width="4.0" opacity="0.85"/><path d="M511 398h0M511 399h0M584 440h0M564 257h0M579 359h0M672 378h0M686 320h0M624 274h0" stroke="#ffcc20" stroke-width="5.0" opacity="0.90"/><path d="M598 444h0M636 292h0M527 416h0M494 380h0M668 360h0M600 255h0M636 286h0M692 363h0M551 277h0M534 373h0" stroke="#ffcc20" stroke-width="5.0" opacity="0.70"/><path d="M606 257h0M527 392h0M563 280h0M515 381h0M493 377h0M539 289h0M635 346h0M528 406h0M649 346h0M636 337h0M639 225h0" stroke="#b85a0a" stroke-width="5.0" opacity="0.90"/><path d="M639 301h0M599 274h0M656 411h0M672 320h0M647 412h0M640 278h0M565 405h0M681 353h0M575 258h0M606 239h0M571 233h0M565 184h0M582 215h0" stroke="#e07a0c" stroke-width="5.0" opacity="0.60"/><path d="M579 433h0M556 379h0M666 307h0M500 279h0M574 313h0M479 311h0M649 271h0M670 341h0M612 438h0M536 376h0M616 411h0M491 363h0M513 335h0M574 391h0M613 430h0M603 308h0M668 405h0M496 392h0" stroke="#ffcc20" stroke-width="2.0" opacity="0.85"/><path d="M546 250h0M624 381h0M690 366h0M616 281h0M509 268h0M498 305h0M658 293h0M607 296h0M536 389h0M611 410h0M523 411h0M637 244h0" stroke="#8a4008" stroke-width="3.0" opacity="0.65"/><path d="M667 274h0M547 266h0M566 388h0M543 420h0M680 313h0M566 241h0M613 317h0M516 433h0M657 412h0" stroke="#e07a0c" stroke-width="5.0" opacity="0.55"/><path d="M537 361h0M596 251h0M488 353h0M634 332h0M519 292h0M527 344h0M669 275h0M513 378h0M564 441h0M609 446h0M536 290h0M678 302h0M682 314h0M680 356h0M492 340h0M476 355h0M645 210h0" stroke="#e07a0c" stroke-width="2.0" opacity="0.95"/><path d="M662 334h0M667 338h0M671 382h0M638 395h0M485 339h0M570 262h0M482 307h0M621 327h0M662 295h0M527 422h0M542 414h0M515 281h0M619 281h0M483 291h0M600 411h0M639 427h0M632 199h0M651 204h0M582 195h0M643 210h0M616 223h0" stroke="#e07a0c" stroke-width="2.0" opacity="0.50"/><path d="M530 361h0M609 246h0M482 340h0M657 382h0M546 453h0M639 425h0M589 318h0M515 426h0M475 358h0M521 396h0M548 306h0M689 322h0M649 386h0M522 331h0M504 416h0M592 208h0M560 212h0M571 212h0M584 195h0M580 211h0" stroke="#e07a0c" stroke-width="4.0" opacity="0.60"/><path d="M648 325h0M554 246h0M560 403h0" stroke="#f59a10" stroke-width="1.0" opacity="0.55"/><path d="M688 392h0M544 374h0M497 416h0M546 350h0M599 416h0M481 366h0M649 335h0M474 338h0M560 430h0M614 416h0M563 253h0M651 337h0M568 234h0M633 200h0" stroke="#b85a0a" stroke-width="5.0" opacity="0.55"/><path d="M649 415h0M693 323h0M618 269h0M500 277h0M524 405h0M622 417h0M492 337h0M494 352h0M534 437h0M502 298h0M675 289h0M580 221h0" stroke="#ffb818" stroke-width="4.0" opacity="0.80"/><path d="M678 327h0M603 252h0M538 430h0M484 328h0M623 423h0M666 301h0M548 317h0M522 307h0M620 284h0M563 436h0M614 236h0M662 365h0M493 338h0M492 293h0M499 330h0M557 249h0M655 270h0M619 211h0M584 250h0M640 231h0M647 245h0" stroke="#f59a10" stroke-width="4.0" opacity="0.75"/><path d="M642 313h0M595 243h0M586 388h0M651 339h0M582 238h0M621 421h0M619 270h0M554 296h0M492 383h0M600 360h0M640 329h0M636 316h0M597 302h0M517 339h0" stroke="#ffb818" stroke-width="5.0" opacity="0.50"/><path d="M569 322h0M554 316h0M539 255h0M515 339h0M557 346h0M656 288h0M603 246h0M502 420h0" stroke="#e07a0c" stroke-width="3.0" opacity="1.00"/><path d="M509 273h0M483 308h0M670 326h0M597 385h0M513 387h0M655 289h0M520 271h0M638 426h0M601 328h0M575 246h0M534 362h0M656 369h0M605 197h0M623 220h0M598 198h0" stroke="#f59a10" stroke-width="5.0" opacity="0.80"/><path d="M678 292h0M470 324h0M632 271h0M620 274h0M550 428h0M487 331h0M489 341h0M644 349h0M487 371h0M556 355h0M596 219h0" stroke="#ffb818" stroke-width="2.0" opacity="0.90"/><path d="M673 402h0M690 377h0M487 379h0M631 297h0M665 394h0M659 285h0M547 397h0M611 271h0M567 288h0M494 339h0M694 345h0M577 421h0M651 390h0M682 376h0M694 341h0M567 285h0" stroke="#ffcc20" stroke-width="3.0" opacity="0.70"/><path d="M503 341h0M542 247h0M516 280h0M508 335h0M507 276h0M473 321h0M652 347h0M584 364h0M635 283h0M668 290h0M561 440h0M574 349h0M573 221h0M607 221h0M595 245h0" stroke="#e07a0c" stroke-width="2.0" opacity="0.80"/><path d="M474 357h0M669 393h0M617 445h0M662 398h0M589 410h0M667 333h0M643 363h0M509 292h0M561 385h0M663 368h0M562 419h0M645 366h0M601 182h0M608 223h0" stroke="#b85a0a" stroke-width="2.0" opacity="0.65"/><path d="M516 324h0M573 247h0M563 406h0M550 367h0M635 326h0M665 358h0M492 279h0M602 251h0M671 322h0M647 430h0M581 245h0M531 297h0M589 211h0M623 217h0M649 236h0M608 243h0" stroke="#f59a10" stroke-width="3.0" opacity="0.60"/><path d="M632 395h0M499 332h0M642 434h0M585 369h0M633 261h0M576 235h0M534 271h0M511 408h0M599 275h0M528 405h0M563 366h0M679 310h0M684 291h0M651 410h0M594 305h0M619 448h0M670 276h0M486 399h0M651 284h0M657 167h0M578 236h0M590 232h0M597 226h0" stroke="#ffb818" stroke-width="2.0" opacity="0.85"/><path d="M560 424h0M614 260h0M542 286h0M600 428h0M575 423h0M562 243h0M607 264h0M482 344h0M481 354h0M619 238h0M583 180h0M572 213h0M626 229h0M589 223h0" stroke="#f59a10" stroke-width="5.0" opacity="0.60"/><path d="M598 388h0M599 398h0M578 329h0M650 268h0M556 317h0M661 307h0M643 424h0M519 303h0M597 346h0M489 379h0M541 427h0M515 374h0M631 403h0M565 187h0M610 179h0" stroke="#ffe050" stroke-width="3.0" opacity="0.95"/><path d="M515 268h0M556 266h0M590 437h0M597 287h0M650 422h0M582 336h0M606 365h0M642 400h0M489 376h0M521 397h0M495 408h0M612 350h0M584 455h0M668 301h0M658 374h0M560 184h0M577 226h0" stroke="#f59a10" stroke-width="3.0" opacity="0.55"/><path d="M691 378h0M543 431h0M576 390h0M530 265h0M601 411h0" stroke="#ffe050" stroke-width="1.0" opacity="0.85"/><path d="M644 428h0M669 380h0M633 309h0M618 417h0M541 263h0M573 366h0M588 425h0M690 322h0M569 327h0M685 285h0M591 220h0M568 246h0M569 201h0M639 243h0M630 207h0" stroke="#e07a0c" stroke-width="3.0" opacity="0.80"/><path d="M519 286h0M673 324h0M484 322h0M513 391h0M508 319h0M565 276h0M686 369h0M552 437h0M608 247h0M631 211h0M629 195h0M628 211h0M595 229h0" stroke="#ffe050" stroke-width="2.0" opacity="0.50"/><path d="M584 443h0M587 260h0M588 396h0M668 317h0M636 397h0M555 256h0M570 260h0M487 376h0M510 389h0M506 379h0M565 271h0M510 421h0M507 399h0M534 280h0" stroke="#ffcc20" stroke-width="3.0" opacity="0.60"/><path d="M551 243h0M495 301h0M576 249h0M547 269h0M503 317h0M545 252h0M625 372h0M635 435h0M551 383h0M613 249h0M533 431h0M508 413h0M637 239h0M618 204h0M577 196h0" stroke="#ffe050" stroke-width="4.0" opacity="0.75"/><path d="M608 278h0M546 432h0M631 285h0M571 402h0M584 363h0M575 260h0M581 424h0M507 412h0M644 336h0M619 251h0M565 338h0M503 389h0M600 245h0M628 429h0M524 377h0M541 314h0" stroke="#ffb818" stroke-width="2.0" opacity="0.50"/><path d="M510 393h0M596 280h0M586 432h0M628 400h0M492 311h0M555 266h0M525 365h0M488 297h0M668 344h0M656 298h0M604 439h0M539 270h0" stroke="#ffe050" stroke-width="5.0" opacity="0.65"/><path d="M584 376h0M525 435h0M568 309h0M532 385h0M503 294h0M654 348h0M496 352h0M628 421h0M640 374h0M601 447h0M576 245h0" stroke="#8a4008" stroke-width="5.0" opacity="0.80"/><path d="M575 369h0M624 275h0M633 421h0" stroke="#ffb818" stroke-width="5.0" opacity="1.00"/><path d="M537 432h0M604 293h0M645 380h0M680 313h0M552 317h0M644 393h0M643 404h0M526 423h0M495 371h0M613 390h0M619 432h0M651 328h0M592 428h0M559 251h0M639 339h0M537 423h0M483 366h0M621 228h0M572 223h0M578 235h0M605 235h0" stroke="#e07a0c" stroke-width="3.0" opacity="0.50"/><path d="M585 379h0M692 363h0M642 420h0M675 403h0M593 305h0M608 446h0M603 252h0M618 241h0" stroke="#8a4008" stroke-width="1.0" opacity="0.75"/><path d="M517 379h0M478 342h0M500 276h0M613 355h0M503 282h0M539 251h0M630 396h0M550 257h0M495 379h0M599 248h0M595 293h0M610 413h0M661 374h0M634 361h0M622 445h0M547 286h0M647 387h0M689 334h0M621 338h0M569 238h0M565 233h0" stroke="#ffb818" stroke-width="4.0" opacity="0.60"/><path d="M623 389h0M503 313h0M631 396h0M670 316h0M591 239h0M634 419h0M663 408h0M514 434h0M564 367h0M530 269h0M615 394h0M624 246h0M538 313h0M565 440h0M510 346h0M642 243h0M633 227h0M568 215h0M641 212h0M584 220h0M640 212h0M596 230h0" stroke="#8a4008" stroke-width="4.0" opacity="0.60"/><path d="M636 420h0M488 305h0M586 268h0M477 335h0M683 391h0M578 444h0M531 284h0M525 256h0M514 278h0M571 360h0M568 308h0" stroke="#e07a0c" stroke-width="5.0" opacity="0.95"/><path d="M598 239h0M569 252h0M536 401h0M652 411h0M665 272h0M571 216h0M618 201h0M574 227h0" stroke="#ffe050" stroke-width="1.0" opacity="0.60"/><path d="M486 292h0M666 328h0M536 443h0M467 361h0M668 275h0M583 264h0M562 386h0M551 444h0M648 427h0M604 326h0M595 423h0M593 284h0M520 306h0M683 331h0M639 225h0M635 219h0M610 225h0M583 225h0" stroke="#b85a0a" stroke-width="3.0" opacity="0.85"/><path d="M679 369h0M518 340h0M625 401h0M532 415h0M557 393h0M680 334h0M536 441h0M587 428h0M506 272h0M512 392h0M482 358h0M674 323h0M556 415h0M688 340h0M675 397h0M651 266h0M530 281h0M596 200h0M641 245h0" stroke="#8a4008" stroke-width="4.0" opacity="0.80"/><path d="M650 434h0M513 268h0M504 391h0M620 252h0M610 419h0M628 363h0M679 333h0M559 294h0M475 342h0M683 354h0M509 385h0M563 249h0M623 410h0M648 282h0M516 401h0M633 424h0" stroke="#8a4008" stroke-width="2.0" opacity="0.70"/><path d="M575 445h0M578 294h0M633 318h0M497 305h0M663 294h0M498 360h0M657 285h0M642 428h0M588 182h0M573 183h0" stroke="#b85a0a" stroke-width="4.0" opacity="0.65"/><path d="M569 419h0M685 317h0M487 363h0M549 425h0M652 392h0M497 336h0M534 399h0M506 280h0M495 293h0M606 343h0M673 289h0M524 400h0M545 384h0" stroke="#ffcc20" stroke-width="4.0" opacity="0.70"/><path d="M642 313h0M601 255h0M538 255h0M645 256h0M687 367h0M575 227h0" stroke="#8a4008" stroke-width="1.0" opacity="0.70"/><path d="M567 435h0M503 418h0M516 348h0M629 305h0M680 381h0M519 419h0M511 411h0M508 346h0M552 377h0M671 289h0M670 363h0M515 385h0M600 289h0M626 286h0M567 268h0M624 215h0M620 241h0M591 216h0" stroke="#e07a0c" stroke-width="2.0" opacity="0.85"/><path d="M522 361h0M646 259h0M661 277h0M627 257h0M572 247h0M467 336h0M544 243h0M644 327h0M489 366h0M513 376h0M501 278h0M641 203h0" stroke="#f59a10" stroke-width="3.0" opacity="0.75"/><path d="M643 341h0M524 262h0M577 248h0M607 420h0M687 366h0M635 317h0M657 372h0M515 358h0M636 433h0M563 375h0M688 388h0M530 376h0M494 306h0M547 259h0M687 309h0M566 391h0M537 328h0M542 446h0M547 408h0M485 327h0M648 177h0M605 187h0M615 194h0M579 208h0" stroke="#ffe050" stroke-width="3.0" opacity="0.90"/><path d="M525 412h0M655 309h0M642 312h0M501 421h0M548 442h0M508 284h0M501 325h0M588 327h0M568 385h0M509 271h0M591 291h0M648 357h0M657 379h0M570 433h0M683 383h0M651 302h0M677 398h0M610 171h0" stroke="#8a4008" stroke-width="4.0" opacity="0.55"/><path d="M666 401h0M596 408h0M537 287h0M490 344h0M567 388h0M657 271h0M538 281h0M624 432h0M641 287h0M606 275h0M640 317h0M570 242h0M653 183h0" stroke="#ffb818" stroke-width="3.0" opacity="0.50"/><path d="M555 447h0M498 277h0M615 384h0M539 301h0M638 402h0M519 351h0M506 356h0M615 254h0M604 210h0M642 206h0M602 215h0" stroke="#b85a0a" stroke-width="5.0" opacity="0.75"/><path d="M583 387h0M503 370h0M493 283h0M650 254h0M634 290h0M499 276h0M570 437h0M539 322h0M522 275h0M618 327h0M624 270h0M607 203h0M621 237h0M652 204h0M616 249h0M559 230h0M641 234h0" stroke="#8a4008" stroke-width="2.0" opacity="0.65"/><path d="M673 417h0M628 293h0M649 322h0M650 272h0" stroke="#e07a0c" stroke-width="4.0" opacity="1.00"/><path d="M609 284h0M650 305h0M561 297h0M635 424h0M509 317h0M674 301h0M655 267h0M504 258h0M616 246h0M532 288h0M654 313h0M503 364h0M604 391h0M555 303h0M623 326h0M652 413h0M596 293h0M499 349h0M574 239h0M615 239h0" stroke="#ffe050" stroke-width="3.0" opacity="0.85"/><path d="M573 417h0M515 340h0M560 434h0M687 308h0M603 276h0M585 246h0M513 430h0M641 275h0M580 365h0M625 269h0M584 271h0M629 361h0M615 368h0M499 346h0M575 204h0M623 187h0" stroke="#b85a0a" stroke-width="3.0" opacity="0.95"/><path d="M623 380h0M511 421h0M690 329h0M576 452h0M551 309h0M550 272h0M494 395h0M626 249h0M671 368h0M515 285h0M564 373h0M492 352h0M647 438h0M519 413h0M600 176h0M563 215h0M609 196h0" stroke="#b85a0a" stroke-width="2.0" opacity="0.50"/><path d="M495 371h0M567 346h0M660 378h0M589 443h0M634 333h0M477 362h0M615 276h0M556 416h0M524 429h0M541 445h0M559 319h0M558 309h0M676 379h0M527 303h0M606 308h0M563 434h0M475 363h0M579 251h0M614 250h0M564 228h0M591 238h0M560 250h0" stroke="#ffb818" stroke-width="4.0" opacity="0.95"/><path d="M525 262h0M657 396h0M579 453h0M560 439h0M654 291h0M625 303h0M624 348h0M499 386h0M656 279h0M586 250h0M583 218h0M590 195h0M617 250h0M616 189h0" stroke="#ffb818" stroke-width="4.0" opacity="0.70"/><path d="M686 310h0M517 393h0M585 252h0M555 280h0M516 418h0M606 316h0M566 367h0M629 422h0M563 279h0M621 397h0M695 343h0M604 211h0" stroke="#f59a10" stroke-width="5.0" opacity="0.50"/><path d="M489 287h0M545 295h0M664 326h0M514 350h0M548 360h0M584 420h0M491 411h0M603 249h0M507 303h0M524 349h0M547 386h0M628 247h0M654 275h0M581 436h0M602 237h0M632 267h0M684 309h0M622 243h0M675 310h0M691 323h0M571 440h0M580 214h0" stroke="#f59a10" stroke-width="4.0" opacity="0.90"/><path d="M626 402h0M475 388h0M542 305h0" stroke="#ffcc20" stroke-width="1.0" opacity="0.65"/><path d="M606 254h0M512 341h0M664 401h0M528 342h0M496 388h0M532 247h0M470 342h0M638 310h0M597 248h0M665 380h0M507 303h0M589 262h0M578 455h0M629 327h0M563 346h0M671 389h0" stroke="#ffcc20" stroke-width="3.0" opacity="0.85"/><path d="M478 364h0M605 386h0M467 336h0M591 301h0M586 282h0M509 264h0" stroke="#ffcc20" stroke-width="5.0" opacity="0.85"/><path d="M669 292h0M518 327h0M624 246h0M646 260h0M509 264h0M554 421h0M671 389h0M496 355h0M630 259h0M612 205h0M653 178h0M587 218h0" stroke="#8a4008" stroke-width="5.0" opacity="0.65"/><path d="M552 276h0M677 341h0M522 327h0M687 388h0M484 370h0M577 418h0M659 350h0M520 327h0M610 267h0M682 303h0M636 428h0M495 404h0M545 317h0M674 386h0M594 348h0M478 356h0M551 279h0M661 285h0" stroke="#ffcc20" stroke-width="4.0" opacity="0.50"/><path d="M538 392h0M475 307h0M519 432h0M497 330h0M540 306h0M497 282h0M631 272h0M559 447h0M653 305h0M581 253h0M573 195h0M639 245h0" stroke="#e07a0c" stroke-width="4.0" opacity="0.65"/><path d="M530 256h0M505 268h0M552 273h0M487 348h0M509 411h0M552 427h0M643 295h0M589 234h0M521 304h0M595 442h0M593 284h0M563 448h0M612 198h0" stroke="#f59a10" stroke-width="4.0" opacity="0.50"/><path d="M599 436h0M485 337h0M622 341h0M608 248h0M504 358h0M640 374h0M609 378h0M602 385h0M662 306h0M679 405h0M670 288h0M562 266h0M551 405h0M625 216h0M587 237h0M638 208h0M585 237h0M640 187h0" stroke="#b85a0a" stroke-width="4.0" opacity="0.80"/><path d="M617 317h0M654 418h0M557 376h0M647 413h0M688 381h0M480 299h0M517 330h0M605 275h0M539 386h0M653 374h0M641 420h0M481 371h0M520 411h0M550 291h0M485 327h0M646 349h0M644 312h0M569 250h0M628 214h0" stroke="#e07a0c" stroke-width="3.0" opacity="0.70"/><path d="M586 266h0M675 374h0M545 250h0M655 408h0M659 393h0M588 397h0M626 416h0M680 408h0M559 401h0M636 352h0M636 397h0M582 279h0M537 399h0M686 367h0M573 363h0M573 434h0M498 277h0M606 327h0M671 302h0M622 337h0M579 248h0M585 224h0" stroke="#b85a0a" stroke-width="2.0" opacity="0.85"/><path d="M482 348h0M619 440h0" stroke="#ffcc20" stroke-width="1.0" opacity="0.70"/><path d="M654 387h0M625 436h0M650 371h0M643 327h0M491 328h0M553 326h0M630 203h0M588 201h0M566 206h0" stroke="#e07a0c" stroke-width="2.0" opacity="0.45"/><path d="M539 428h0M585 450h0M571 457h0M640 250h0" stroke="#8a4008" stroke-width="2.0" opacity="0.50"/><path d="M501 377h0M508 294h0M485 289h0M557 440h0M626 285h0M492 357h0M472 315h0M517 392h0M521 258h0M478 365h0M622 309h0M673 305h0M624 175h0M655 196h0M565 200h0M580 223h0M617 236h0M629 176h0M594 236h0" stroke="#8a4008" stroke-width="2.0" opacity="0.55"/><path d="M622 397h0M494 330h0M666 334h0M523 327h0M622 242h0M498 269h0M597 395h0M468 327h0M668 309h0M479 292h0M589 356h0M534 432h0M603 336h0M485 318h0M489 311h0M523 438h0M658 425h0M527 387h0" stroke="#ffcc20" stroke-width="4.0" opacity="0.55"/><path d="M594 266h0M628 438h0M562 249h0M498 301h0M492 412h0M565 437h0M479 368h0M572 448h0M465 376h0M481 386h0M592 247h0" stroke="#b85a0a" stroke-width="5.0" opacity="0.80"/><path d="M509 258h0M609 323h0M607 417h0M614 376h0M529 298h0M609 452h0M643 404h0M670 279h0M489 310h0M605 413h0M587 203h0" stroke="#8a4008" stroke-width="4.0" opacity="0.85"/><path d="M625 255h0M603 354h0M684 360h0M547 387h0M531 296h0M587 402h0M607 244h0" stroke="#ffe050" stroke-width="1.0" opacity="0.70"/><path d="M490 383h0M510 410h0M649 265h0M507 279h0M501 417h0M625 428h0M490 345h0M630 437h0M628 288h0M569 258h0M629 435h0M601 311h0M491 311h0M485 376h0M487 301h0M591 411h0M636 231h0M599 217h0" stroke="#f59a10" stroke-width="3.0" opacity="0.80"/><path d="M519 262h0M471 305h0M576 403h0M595 387h0M552 381h0M610 401h0M637 266h0M624 398h0M583 430h0M559 310h0M577 236h0M622 196h0M640 221h0" stroke="#f59a10" stroke-width="2.0" opacity="0.60"/><path d="M618 258h0M607 400h0M619 445h0M603 434h0M558 253h0M679 378h0M617 444h0M578 348h0M662 290h0M641 433h0M533 403h0M577 354h0M616 392h0M526 267h0M682 358h0M480 359h0M632 301h0M520 423h0M475 316h0" stroke="#ffe050" stroke-width="3.0" opacity="0.80"/><path d="M542 343h0M696 372h0M483 402h0M533 307h0M665 406h0M551 274h0M547 406h0M512 360h0M511 426h0M559 312h0M516 356h0M481 294h0M486 322h0M582 225h0M629 199h0M596 199h0" stroke="#ffb818" stroke-width="4.0" opacity="0.55"/><path d="M579 261h0M647 351h0M478 348h0M602 383h0M534 295h0M620 405h0M597 200h0" stroke="#8a4008" stroke-width="3.0" opacity="0.55"/><path d="M626 255h0M559 391h0M605 259h0M504 310h0M514 345h0M581 362h0" stroke="#b85a0a" stroke-width="5.0" opacity="0.95"/><path d="M560 256h0M565 374h0M550 418h0M556 254h0M501 319h0M613 294h0M525 273h0M678 296h0M502 314h0M491 339h0M693 320h0M551 251h0M653 273h0M469 334h0M532 331h0M570 275h0M514 400h0M649 294h0M563 447h0M569 308h0M634 216h0M561 217h0M565 249h0" stroke="#b85a0a" stroke-width="3.0" opacity="0.55"/><path d="M650 399h0M493 336h0M541 456h0M494 356h0M499 339h0M493 284h0M636 374h0M560 445h0M502 391h0M623 270h0M646 325h0M537 428h0M585 290h0M513 298h0M581 234h0M615 188h0M601 239h0M626 236h0" stroke="#e07a0c" stroke-width="4.0" opacity="0.50"/><path d="M629 264h0M533 304h0M688 323h0M528 372h0M489 300h0M552 329h0M684 405h0M636 347h0M474 375h0M492 386h0M465 351h0M643 259h0M609 247h0" stroke="#f59a10" stroke-width="4.0" opacity="0.70"/><path d="M521 294h0M517 336h0M504 420h0M669 417h0M548 454h0M639 286h0M607 339h0M673 374h0" stroke="#ffcc20" stroke-width="5.0" opacity="0.95"/><path d="M484 318h0M587 401h0M637 281h0" stroke="#e07a0c" stroke-width="1.0" opacity="1.00"/><path d="M583 283h0M629 298h0M488 289h0M632 385h0M586 296h0M639 420h0M501 395h0M506 391h0M564 297h0M595 379h0M623 418h0M656 205h0M643 194h0M603 235h0M628 242h0M632 228h0M577 229h0M575 240h0M650 175h0M609 227h0M609 212h0" stroke="#ffe050" stroke-width="5.0" opacity="0.70"/><path d="M585 267h0M497 295h0M592 239h0M547 360h0M684 340h0M677 351h0M579 305h0M496 350h0M549 378h0M506 268h0M589 459h0M476 310h0M490 367h0M544 415h0M521 370h0M594 409h0M689 336h0M591 295h0M566 287h0M604 278h0M577 450h0M670 405h0" stroke="#ffcc20" stroke-width="3.0" opacity="0.90"/><path d="M562 373h0M608 326h0M601 248h0M669 418h0M669 383h0M673 390h0M650 403h0M628 415h0M646 379h0M657 374h0M643 436h0M621 201h0M598 237h0M592 217h0M565 230h0" stroke="#8a4008" stroke-width="2.0" opacity="0.95"/><path d="M675 386h0M537 256h0M574 275h0M607 448h0M535 366h0M654 324h0M529 270h0M587 224h0M560 228h0M559 228h0" stroke="#ffb818" stroke-width="5.0" opacity="0.90"/><path d="M542 270h0M552 385h0M545 333h0M622 294h0M481 289h0M653 409h0M574 357h0M491 409h0M539 252h0M578 402h0M475 378h0M496 302h0M658 281h0M580 228h0M600 247h0M574 181h0M614 167h0M573 221h0M641 247h0" stroke="#b85a0a" stroke-width="3.0" opacity="0.45"/><path d="M635 420h0M622 374h0M576 401h0M557 425h0M531 303h0M553 268h0M572 455h0M628 258h0M502 279h0M562 258h0M676 286h0M638 335h0M533 300h0M572 200h0M566 222h0" stroke="#f59a10" stroke-width="2.0" opacity="0.65"/><path d="M534 280h0M659 272h0M676 325h0M600 421h0M568 392h0M484 375h0M640 360h0M538 255h0M563 336h0M570 448h0M617 228h0M580 202h0" stroke="#b85a0a" stroke-width="3.0" opacity="0.50"/><path d="M627 287h0M611 341h0M640 337h0M495 295h0M519 291h0M507 308h0M696 344h0M531 370h0" stroke="#8a4008" stroke-width="4.0" opacity="1.00"/><path d="M529 261h0M550 445h0M621 437h0M525 276h0M673 347h0M601 353h0M498 326h0M653 269h0M543 272h0M493 307h0M688 324h0" stroke="#ffe050" stroke-width="2.0" opacity="0.95"/><path d="M519 419h0M524 391h0M658 350h0M567 381h0M694 335h0M625 321h0M689 359h0M620 451h0M657 277h0M596 418h0M601 362h0M502 368h0M614 255h0M538 436h0" stroke="#ffcc20" stroke-width="5.0" opacity="0.60"/><path d="M689 340h0M581 332h0M550 239h0M494 296h0M612 217h0" stroke="#f59a10" stroke-width="1.0" opacity="0.80"/><path d="M640 399h0M639 291h0M604 268h0M511 263h0M539 375h0M635 389h0M485 289h0M639 304h0M690 379h0M643 327h0M666 312h0M645 298h0M612 445h0M624 219h0" stroke="#ffb818" stroke-width="2.0" opacity="0.65"/><path d="M569 280h0M572 341h0M560 448h0M520 266h0M593 418h0M492 307h0M526 341h0M567 436h0M566 444h0" stroke="#ffe050" stroke-width="2.0" opacity="1.00"/><path d="M572 434h0M575 403h0M674 308h0M526 433h0M574 294h0M604 317h0M645 308h0M556 262h0M484 295h0M688 358h0M644 424h0M486 319h0M594 204h0M617 215h0M641 239h0" stroke="#b85a0a" stroke-width="4.0" opacity="0.55"/><path d="M531 264h0M583 301h0M637 418h0M633 395h0M537 434h0M476 369h0M560 279h0M670 300h0M522 436h0M571 452h0" stroke="#ffcc20" stroke-width="5.0" opacity="0.50"/><path d="M476 370h0M565 409h0M653 332h0M508 309h0M633 323h0M547 330h0M650 259h0M519 392h0M685 336h0M679 346h0M639 287h0M561 445h0M527 280h0M503 282h0M662 333h0M578 199h0M572 239h0M600 250h0M580 247h0" stroke="#ffb818" stroke-width="3.0" opacity="0.55"/><path d="M634 390h0M580 272h0M517 291h0M588 316h0M521 364h0M687 307h0" stroke="#ffcc20" stroke-width="1.0" opacity="0.75"/><path d="M667 418h0M663 414h0M682 333h0M636 430h0M689 315h0M566 242h0M631 254h0M519 266h0M507 406h0M577 397h0M591 398h0M632 412h0M494 403h0M522 386h0M639 216h0M569 200h0" stroke="#8a4008" stroke-width="5.0" opacity="0.55"/><path d="M513 295h0M670 400h0M542 448h0M633 393h0M478 295h0M508 275h0M625 408h0M491 354h0M507 310h0M625 395h0M577 439h0M495 297h0M526 383h0M607 203h0M611 196h0M580 191h0" stroke="#b85a0a" stroke-width="4.0" opacity="0.70"/><path d="M504 287h0M553 393h0M518 429h0M656 307h0M661 405h0M592 245h0M615 286h0M595 429h0M593 237h0M597 283h0M523 284h0M598 216h0M609 230h0M629 182h0M577 232h0M634 232h0" stroke="#ffe050" stroke-width="5.0" opacity="0.90"/><path d="M497 295h0M542 281h0M670 382h0M602 429h0M622 432h0M601 274h0M582 450h0M673 410h0M579 454h0M602 294h0M643 259h0M578 325h0M637 359h0M532 438h0M555 363h0M568 324h0M660 377h0M605 268h0M565 458h0" stroke="#ffcc20" stroke-width="3.0" opacity="0.65"/><path d="M531 245h0M632 272h0M655 365h0M668 369h0M545 243h0M675 344h0M515 327h0M489 312h0M521 271h0M593 453h0M651 283h0M598 300h0" stroke="#ffcc20" stroke-width="4.0" opacity="0.80"/><path d="M571 434h0M662 302h0M526 282h0M562 190h0" stroke="#e07a0c" stroke-width="1.0" opacity="0.55"/><path d="M522 287h0M569 416h0M489 334h0M510 427h0M589 386h0M533 434h0M617 222h0" stroke="#ffe050" stroke-width="1.0" opacity="0.50"/><path d="M666 353h0M573 244h0M646 287h0M579 298h0M511 420h0M482 388h0M596 350h0M633 348h0M686 379h0M583 247h0" stroke="#e07a0c" stroke-width="4.0" opacity="0.95"/><path d="M669 320h0M661 400h0M516 265h0M592 421h0M541 419h0M520 307h0M522 363h0M663 410h0M616 186h0M573 238h0M562 191h0M648 222h0M571 214h0" stroke="#ffe050" stroke-width="5.0" opacity="0.80"/><path d="M549 250h0M644 259h0M505 397h0M492 321h0M543 361h0M534 379h0M642 232h0M565 198h0" stroke="#ffe050" stroke-width="5.0" opacity="0.60"/><path d="M477 324h0M585 449h0M604 380h0M584 394h0M554 403h0M598 408h0M679 308h0M473 337h0M614 302h0M520 291h0M542 305h0M650 382h0M597 309h0M592 256h0M513 434h0M607 406h0M642 265h0M658 417h0M591 247h0M615 222h0M607 199h0M644 220h0M636 243h0M633 247h0M571 250h0" stroke="#ffb818" stroke-width="4.0" opacity="0.50"/><path d="M661 353h0M505 392h0M571 263h0M591 248h0M518 292h0M623 379h0M531 424h0M573 257h0M650 378h0M632 407h0M498 286h0M559 384h0M530 412h0M542 450h0M525 291h0M596 219h0M596 198h0M609 241h0M613 245h0" stroke="#e07a0c" stroke-width="5.0" opacity="0.80"/><path d="M566 247h0M534 308h0M676 357h0M478 323h0M625 244h0M529 389h0M673 356h0M601 313h0M586 456h0M504 353h0M613 376h0M555 436h0M620 378h0" stroke="#ffcc20" stroke-width="2.0" opacity="1.00"/><path d="M488 282h0M628 246h0M471 378h0M517 402h0M625 401h0M597 348h0M629 266h0M696 324h0M692 370h0M612 259h0M625 326h0M543 300h0M618 379h0M483 324h0M508 296h0M497 375h0M508 269h0M500 287h0M640 306h0M629 233h0M635 229h0M592 238h0M587 231h0M628 249h0" stroke="#ffb818" stroke-width="3.0" opacity="0.90"/><path d="M509 363h0M549 344h0M592 457h0M604 417h0M648 320h0M563 349h0M595 234h0M579 237h0M566 233h0M626 239h0" stroke="#ffb818" stroke-width="2.0" opacity="0.45"/><path d="M551 401h0M643 293h0M633 264h0M504 363h0M680 291h0M643 287h0M493 411h0M498 368h0M600 413h0M594 456h0M543 360h0M597 315h0M647 341h0M478 313h0M602 409h0M629 212h0M577 246h0M589 242h0M582 225h0" stroke="#e07a0c" stroke-width="4.0" opacity="0.90"/><path d="M590 252h0M609 297h0M536 444h0M496 268h0M539 250h0M593 454h0M559 422h0M539 335h0M673 303h0M630 373h0M660 316h0M611 423h0M563 406h0M641 276h0M509 337h0M494 358h0" stroke="#f59a10" stroke-width="3.0" opacity="0.50"/><path d="M525 324h0M585 241h0M566 415h0M555 384h0M573 256h0M667 388h0M595 315h0M664 307h0M651 388h0M584 405h0M559 333h0M538 257h0M633 219h0" stroke="#f59a10" stroke-width="2.0" opacity="0.90"/><path d="M656 350h0M473 320h0M516 254h0M484 367h0M679 397h0M663 408h0M665 282h0M650 430h0M586 421h0M609 243h0M679 403h0M587 262h0M663 334h0M584 447h0M620 362h0" stroke="#ffcc20" stroke-width="3.0" opacity="0.95"/><path d="M680 394h0M681 297h0M625 257h0M492 366h0M490 325h0M676 406h0M647 321h0M573 349h0M501 396h0M581 284h0M631 311h0M663 312h0M540 441h0M673 296h0M566 238h0M638 245h0M619 246h0" stroke="#ffe050" stroke-width="4.0" opacity="0.80"/><path d="M486 394h0M488 366h0M687 376h0M657 297h0" stroke="#ffe050" stroke-width="3.0" opacity="1.00"/><path d="M585 377h0M601 437h0M685 300h0M619 261h0M501 341h0M610 307h0M546 437h0M627 326h0M480 350h0M613 246h0M596 243h0M580 195h0M634 250h0" stroke="#b85a0a" stroke-width="3.0" opacity="0.65"/><path d="M596 442h0M653 420h0M544 311h0M577 248h0M526 335h0M677 402h0M565 238h0M561 331h0M614 332h0M513 378h0M670 388h0M545 257h0M656 268h0M599 397h0" stroke="#ffcc20" stroke-width="4.0" opacity="0.90"/><path d="M496 393h0M531 264h0M492 369h0M613 259h0M628 297h0M670 417h0M598 261h0M637 417h0M614 387h0M649 258h0M677 344h0M513 406h0M500 289h0M478 366h0M631 435h0" stroke="#ffcc20" stroke-width="2.0" opacity="0.70"/><path d="M533 253h0M609 385h0M597 402h0M520 436h0M544 429h0M653 419h0M623 288h0M638 356h0M478 380h0M505 330h0M601 379h0M575 177h0M643 236h0M569 206h0" stroke="#8a4008" stroke-width="3.0" opacity="0.95"/><path d="M682 311h0M604 389h0M562 435h0M498 386h0M540 268h0M605 412h0M639 286h0M604 305h0M530 433h0M647 438h0M632 384h0M599 340h0M644 366h0M557 442h0M640 396h0M621 332h0M481 364h0M631 337h0M636 236h0M595 222h0" stroke="#f59a10" stroke-width="3.0" opacity="0.95"/><path d="M472 326h0M550 302h0M651 262h0M624 305h0M490 357h0" stroke="#ffcc20" stroke-width="1.0" opacity="0.55"/><path d="M583 253h0M480 305h0M611 258h0M598 425h0M627 270h0M578 405h0M616 267h0M638 389h0M685 348h0M624 421h0M627 438h0M672 309h0M511 300h0M501 292h0M608 345h0M563 251h0" stroke="#ffcc20" stroke-width="3.0" opacity="0.55"/><path d="M619 427h0M527 401h0M636 256h0M649 435h0M534 420h0M641 305h0M507 269h0M581 410h0M471 314h0M601 240h0M527 305h0M629 417h0M525 405h0M596 377h0M621 224h0M589 232h0M623 239h0M566 245h0" stroke="#ffe050" stroke-width="4.0" opacity="0.55"/><path d="M653 307h0M623 333h0M489 393h0M602 304h0M488 396h0M540 278h0M575 416h0M696 336h0M542 412h0M590 278h0M682 307h0M567 383h0M590 439h0M554 361h0M615 237h0M629 201h0" stroke="#f59a10" stroke-width="3.0" opacity="0.65"/><path d="M559 415h0M607 283h0M606 269h0M618 355h0M566 424h0M515 377h0M672 412h0M529 387h0M522 419h0M569 236h0M632 268h0M488 283h0M530 420h0M525 397h0M522 429h0M633 257h0M640 183h0M598 202h0M581 189h0M601 221h0M605 177h0" stroke="#ffe050" stroke-width="3.0" opacity="0.65"/><path d="M589 266h0M512 349h0M665 380h0M561 371h0M493 299h0M533 377h0M551 455h0M592 270h0M493 374h0M660 339h0M627 423h0M515 410h0M506 326h0M641 430h0M578 431h0M645 395h0M536 276h0M482 346h0M656 414h0M593 268h0M552 243h0M625 239h0" stroke="#f59a10" stroke-width="4.0" opacity="0.55"/><path d="M563 269h0M495 324h0M497 407h0M549 263h0M490 369h0M690 342h0" stroke="#ffcc20" stroke-width="1.0" opacity="0.90"/><path d="M681 393h0M601 279h0M596 260h0M513 434h0M615 259h0M524 435h0M564 436h0M597 413h0M623 349h0M581 451h0M625 431h0M563 254h0M509 343h0M619 434h0M487 389h0" stroke="#ffcc20" stroke-width="4.0" opacity="0.85"/><path d="M676 348h0M544 416h0M556 326h0M628 264h0M674 322h0M623 437h0M508 388h0M473 309h0M551 368h0M481 344h0M546 343h0M569 323h0M509 342h0M532 286h0M519 278h0M516 395h0M691 343h0M634 425h0M582 195h0" stroke="#e07a0c" stroke-width="4.0" opacity="0.80"/><path d="M685 356h0M482 296h0M534 428h0M541 384h0M651 303h0M519 293h0M507 414h0M546 434h0M618 332h0M515 342h0M539 405h0M482 322h0M562 247h0M642 250h0M642 245h0" stroke="#f59a10" stroke-width="3.0" opacity="0.45"/><path d="M620 262h0M644 276h0M622 438h0M632 313h0M593 243h0M539 388h0M636 419h0M508 264h0M564 269h0M618 446h0M588 449h0M601 347h0M600 288h0M645 285h0M471 369h0M638 262h0M666 290h0M581 204h0M652 183h0" stroke="#ffb818" stroke-width="2.0" opacity="0.60"/><path d="M523 292h0M546 243h0M479 314h0M545 422h0M583 251h0M614 426h0M546 386h0M623 270h0M512 410h0M601 405h0M520 364h0M598 218h0M644 238h0M627 233h0M646 211h0" stroke="#e07a0c" stroke-width="5.0" opacity="0.75"/><path d="M604 267h0M624 277h0M503 347h0M626 217h0" stroke="#ffb818" stroke-width="1.0" opacity="0.95"/><path d="M551 255h0M561 447h0M620 398h0M686 393h0M648 306h0M568 313h0M631 272h0M606 302h0M531 290h0M562 241h0M640 291h0M587 245h0M477 347h0M674 303h0M571 219h0M620 248h0M602 212h0M574 194h0M633 223h0" stroke="#b85a0a" stroke-width="2.0" opacity="0.75"/><path d="M696 367h0M565 277h0M600 447h0M592 447h0M665 269h0M545 352h0M682 308h0M502 328h0M520 271h0M573 435h0M542 419h0M574 232h0M604 218h0M579 222h0M607 229h0" stroke="#ffe050" stroke-width="4.0" opacity="0.90"/><path d="M583 373h0M597 448h0M560 298h0M639 248h0M584 236h0M600 217h0" stroke="#f59a10" stroke-width="5.0" opacity="0.45"/><path d="M629 381h0M589 384h0M548 267h0M638 296h0M540 251h0M550 279h0M677 396h0M645 437h0M609 369h0M513 307h0M572 446h0M577 300h0" stroke="#ffcc20" stroke-width="2.0" opacity="0.65"/><path d="M521 350h0M512 324h0M504 402h0M493 350h0M481 370h0M498 289h0M627 400h0M656 404h0M683 323h0M656 342h0M475 338h0M611 403h0M478 353h0" stroke="#f59a10" stroke-width="2.0" opacity="0.95"/><path d="M566 270h0M621 357h0M563 273h0M686 367h0M693 351h0M522 409h0" stroke="#e07a0c" stroke-width="1.0" opacity="0.65"/><path d="M500 279h0M477 351h0M617 389h0M560 261h0M489 327h0M649 264h0M649 270h0M542 330h0M675 359h0M594 222h0" stroke="#b85a0a" stroke-width="5.0" opacity="0.50"/><path d="M530 451h0M513 409h0M487 294h0M669 303h0M609 248h0M499 378h0M619 305h0M533 423h0M672 301h0M513 400h0M672 392h0M530 278h0M491 288h0M513 374h0M609 188h0" stroke="#f59a10" stroke-width="5.0" opacity="0.85"/><path d="M613 444h0M574 418h0M498 379h0M624 252h0M681 357h0M585 422h0M482 395h0M531 423h0M522 416h0M628 426h0M499 275h0M472 359h0M649 308h0M501 368h0M471 326h0M643 242h0M642 233h0M614 191h0" stroke="#ffe050" stroke-width="4.0" opacity="0.70"/><path d="M543 301h0M548 324h0M551 321h0M508 392h0M633 406h0M566 265h0M590 269h0M565 287h0" stroke="#b85a0a" stroke-width="1.0" opacity="0.70"/><path d="M514 388h0M659 286h0M580 263h0M557 318h0M498 309h0M687 384h0M622 255h0M652 382h0M568 454h0M530 299h0M622 264h0M601 387h0M497 415h0M588 215h0M569 178h0" stroke="#f59a10" stroke-width="4.0" opacity="0.85"/><path d="M688 379h0M650 282h0M536 364h0M584 303h0M645 256h0M499 312h0M677 372h0M670 346h0M653 186h0M595 221h0M631 237h0M633 232h0" stroke="#e07a0c" stroke-width="5.0" opacity="0.50"/><path d="M506 359h0M637 425h0M536 282h0M596 413h0M603 261h0M494 322h0M672 297h0M636 406h0M690 379h0" stroke="#ffcc20" stroke-width="4.0" opacity="0.45"/><path d="M625 419h0M619 248h0M518 287h0M560 444h0M535 293h0M544 400h0M535 319h0M635 400h0M514 328h0M683 352h0M509 384h0M544 297h0M698 353h0M504 304h0M670 367h0M659 387h0M590 227h0M655 207h0M636 234h0" stroke="#f59a10" stroke-width="2.0" opacity="0.55"/><path d="M485 371h0M629 410h0M665 331h0M503 265h0M504 307h0M679 295h0M588 312h0M649 296h0M563 257h0M553 288h0M539 324h0M568 322h0M616 246h0M583 202h0M618 224h0" stroke="#8a4008" stroke-width="2.0" opacity="0.75"/><path d="M637 256h0M602 316h0M548 395h0M600 315h0M630 364h0M612 275h0M606 425h0M486 340h0M624 287h0M562 242h0M575 191h0" stroke="#8a4008" stroke-width="3.0" opacity="0.50"/><path d="M533 296h0M541 416h0M580 428h0M611 265h0M628 405h0M618 452h0M644 299h0M617 250h0M581 239h0" stroke="#f59a10" stroke-width="1.0" opacity="0.75"/><path d="M542 324h0M570 418h0M602 293h0M470 361h0" stroke="#b85a0a" stroke-width="5.0" opacity="1.00"/><path d="M560 285h0M589 447h0M519 430h0M511 403h0M504 410h0M597 266h0M481 364h0M558 397h0M693 320h0M567 246h0M655 192h0M565 232h0M563 244h0" stroke="#e07a0c" stroke-width="5.0" opacity="0.70"/><path d="M505 310h0M620 381h0M583 441h0M668 323h0M653 431h0M527 428h0M625 428h0M650 283h0M478 354h0M639 272h0M649 337h0M540 390h0M673 346h0M636 435h0M631 336h0M667 407h0" stroke="#ffcc20" stroke-width="5.0" opacity="0.65"/><path d="M579 255h0M642 278h0M624 443h0M620 396h0M654 384h0M688 384h0M581 242h0M482 330h0M614 437h0M557 398h0M543 304h0M635 205h0M639 228h0M576 229h0M566 193h0" stroke="#8a4008" stroke-width="4.0" opacity="0.90"/><path d="M569 242h0M577 271h0M648 411h0M600 219h0" stroke="#b85a0a" stroke-width="1.0" opacity="0.65"/><path d="M688 327h0M554 441h0M506 313h0M586 258h0M486 379h0M561 416h0M593 446h0M583 459h0M696 346h0M608 432h0M603 289h0M640 278h0M644 227h0" stroke="#ffb818" stroke-width="3.0" opacity="0.75"/><path d="M516 352h0M577 255h0M477 333h0M665 304h0M630 308h0M489 301h0M611 394h0M559 269h0M588 370h0M662 308h0M595 219h0" stroke="#e07a0c" stroke-width="4.0" opacity="0.45"/><path d="M651 316h0M651 378h0M541 344h0M685 321h0" stroke="#ffb818" stroke-width="5.0" opacity="0.95"/><path d="M628 419h0M575 256h0M531 293h0M671 374h0M476 361h0M520 350h0M517 421h0M547 355h0M471 331h0M491 305h0M665 355h0M635 377h0M654 314h0M585 381h0M529 385h0M654 268h0M575 333h0M524 318h0M544 290h0M638 362h0M551 236h0M626 195h0M613 182h0" stroke="#ffe050" stroke-width="4.0" opacity="0.50"/><path d="M586 376h0M538 275h0M564 381h0M679 399h0" stroke="#f59a10" stroke-width="1.0" opacity="0.90"/><path d="M513 285h0M647 316h0M478 336h0M531 271h0M624 413h0M650 397h0M474 331h0M570 367h0M649 432h0M527 411h0M547 404h0M671 356h0M608 312h0M638 271h0M567 184h0M562 238h0M594 207h0M622 222h0" stroke="#ffe050" stroke-width="2.0" opacity="0.65"/><path d="M519 311h0M537 398h0M628 392h0M536 403h0M595 430h0M470 343h0M490 352h0" stroke="#ffcc20" stroke-width="4.0" opacity="0.75"/><path d="M638 349h0M531 400h0M551 272h0M617 411h0M612 413h0M537 297h0M500 347h0M595 318h0M529 429h0M472 375h0M620 383h0M529 435h0M662 407h0M593 382h0M678 347h0M511 291h0M626 220h0M648 206h0M607 245h0" stroke="#ffe050" stroke-width="2.0" opacity="0.75"/><path d="M487 396h0M622 449h0M606 261h0M596 384h0M571 257h0M616 361h0M470 351h0M669 336h0M505 299h0M559 255h0M504 377h0M482 400h0M506 299h0M533 421h0M614 283h0" stroke="#f59a10" stroke-width="2.0" opacity="0.50"/><path d="M560 328h0M609 445h0M670 344h0M630 420h0M695 362h0M639 358h0M598 365h0M519 425h0" stroke="#ffb818" stroke-width="1.0" opacity="0.85"/><path d="M663 385h0M611 335h0M615 308h0M492 346h0M640 273h0M590 433h0M553 296h0M663 322h0M588 324h0M620 421h0M506 388h0M579 322h0M603 358h0M497 321h0M607 273h0M512 285h0M597 247h0M589 442h0" stroke="#ffcc20" stroke-width="4.0" opacity="0.95"/><path d="M556 443h0M480 308h0M680 383h0M565 447h0M642 291h0M533 317h0M562 285h0M606 263h0M590 191h0" stroke="#8a4008" stroke-width="5.0" opacity="0.90"/><path d="M531 417h0M612 438h0M603 307h0M624 438h0M644 309h0M602 248h0M624 224h0M580 217h0" stroke="#e07a0c" stroke-width="1.0" opacity="0.90"/><path d="M620 345h0M622 246h0M534 256h0M563 282h0M536 397h0M488 309h0M478 350h0M641 302h0M608 254h0M555 244h0M501 345h0M598 435h0M512 306h0M558 252h0M640 238h0" stroke="#b85a0a" stroke-width="4.0" opacity="0.75"/><path d="M622 273h0M627 321h0M541 362h0M676 317h0M680 297h0M571 365h0M661 313h0M541 259h0M648 285h0M666 327h0M656 282h0M663 386h0M481 296h0M662 291h0M634 371h0M624 212h0M597 187h0M606 183h0" stroke="#8a4008" stroke-width="3.0" opacity="0.85"/><path d="M681 370h0M662 280h0M652 343h0M507 404h0M579 398h0M682 311h0M583 376h0M682 388h0M692 372h0M496 378h0M538 251h0M599 379h0M628 305h0M516 265h0M494 319h0M484 368h0M491 335h0M674 377h0" stroke="#ffcc20" stroke-width="3.0" opacity="0.50"/><path d="M687 338h0M518 315h0M539 270h0M574 237h0M621 440h0M607 415h0M652 353h0M654 283h0M609 305h0M685 385h0M671 359h0M601 231h0M625 217h0" stroke="#b85a0a" stroke-width="5.0" opacity="0.65"/><path d="M585 365h0M526 369h0M543 451h0M654 406h0M485 397h0M639 265h0" stroke="#8a4008" stroke-width="2.0" opacity="1.00"/><path d="M611 253h0M548 298h0M589 404h0M630 431h0M626 412h0M653 421h0M569 455h0M641 388h0M482 293h0M671 352h0M599 293h0M609 248h0M519 428h0M635 212h0M626 206h0" stroke="#e07a0c" stroke-width="5.0" opacity="0.65"/><path d="M636 254h0M679 383h0M529 416h0M598 420h0M602 250h0M526 409h0M502 423h0M572 230h0M563 242h0M574 238h0M596 231h0M599 189h0" stroke="#b85a0a" stroke-width="4.0" opacity="0.45"/><path d="M600 381h0M630 441h0M531 426h0M621 303h0M568 358h0M568 416h0M550 387h0M618 318h0M649 285h0M608 241h0M507 418h0M516 303h0M539 267h0M484 320h0M668 305h0M490 344h0M597 249h0M591 241h0M690 357h0" stroke="#ffcc20" stroke-width="2.0" opacity="0.55"/><path d="M559 281h0M577 434h0M598 441h0M687 319h0M691 344h0" stroke="#ffe050" stroke-width="1.0" opacity="0.95"/><path d="M518 307h0M638 378h0M494 343h0M624 301h0M528 289h0M597 266h0M644 308h0M681 374h0M669 304h0M524 254h0M635 271h0M499 392h0M494 411h0M587 360h0M577 202h0M624 172h0" stroke="#ffe050" stroke-width="4.0" opacity="0.95"/><path d="M478 300h0M662 406h0M598 271h0M607 367h0M491 303h0M587 350h0M639 416h0M499 372h0M682 382h0M600 323h0M632 325h0M641 244h0M584 234h0M574 183h0M655 201h0M632 246h0" stroke="#ffb818" stroke-width="5.0" opacity="0.80"/><path d="M683 320h0M559 328h0M551 245h0" stroke="#ffb818" stroke-width="1.0" opacity="0.60"/><path d="M495 352h0M546 325h0M608 343h0M530 381h0M668 302h0M587 255h0M690 346h0M481 374h0M591 419h0M648 245h0M654 203h0M595 233h0" stroke="#ffe050" stroke-width="5.0" opacity="0.85"/><path d="M594 419h0M649 270h0M505 397h0M508 288h0M476 301h0M658 418h0M640 408h0M476 340h0M585 290h0M648 295h0M567 400h0M652 430h0M581 388h0M522 318h0" stroke="#ffcc20" stroke-width="2.0" opacity="0.50"/><path d="M656 395h0M489 324h0M499 331h0M495 303h0" stroke="#ffcc20" stroke-width="1.0" opacity="0.60"/><path d="M665 413h0M482 397h0M483 303h0M577 439h0M599 428h0M554 251h0M515 416h0M522 302h0M624 386h0M615 424h0M557 393h0M514 272h0M564 234h0M562 241h0M616 208h0" stroke="#e07a0c" stroke-width="4.0" opacity="0.55"/><path d="M649 293h0M629 408h0M566 451h0M628 281h0M561 398h0M483 383h0M672 317h0M614 247h0M480 348h0M629 372h0M610 253h0M521 322h0M553 321h0M503 289h0M581 235h0M561 241h0M614 247h0" stroke="#f59a10" stroke-width="2.0" opacity="0.75"/><path d="M590 426h0M518 402h0M683 377h0M475 388h0M577 449h0M599 268h0M505 285h0M630 342h0M580 425h0M614 391h0M549 398h0M659 422h0M556 275h0M624 388h0M666 320h0M676 327h0" stroke="#b85a0a" stroke-width="3.0" opacity="0.90"/><path d="M544 433h0M522 417h0M644 286h0M513 410h0M654 283h0M612 277h0M629 307h0M581 290h0M541 255h0M506 401h0M587 240h0M622 262h0M522 302h0M684 297h0M633 300h0M623 225h0M600 226h0" stroke="#8a4008" stroke-width="3.0" opacity="0.60"/><path d="M476 370h0M644 264h0M653 417h0M513 385h0M548 352h0M653 267h0M560 375h0M566 285h0M630 432h0M565 210h0M622 230h0" stroke="#e07a0c" stroke-width="3.0" opacity="0.55"/><path d="M650 266h0M576 231h0M624 232h0" stroke="#ffb818" stroke-width="5.0" opacity="0.45"/><path d="M664 375h0M639 389h0M648 272h0M569 449h0M666 331h0M632 435h0M549 281h0M645 310h0M562 240h0M483 357h0" stroke="#ffcc20" stroke-width="3.0" opacity="0.80"/><path d="M660 290h0M542 260h0M487 365h0M621 409h0M637 428h0M465 355h0M564 258h0M531 295h0M686 353h0M517 272h0M632 263h0" stroke="#b85a0a" stroke-width="2.0" opacity="0.90"/><path d="M627 281h0M564 440h0M611 428h0M495 377h0M555 259h0M670 285h0" stroke="#f59a10" stroke-width="3.0" opacity="1.00"/><path d="M515 256h0M581 295h0M502 274h0" stroke="#ffe050" stroke-width="1.0" opacity="1.00"/><path d="M646 286h0M471 328h0M559 242h0M670 285h0M675 294h0M548 314h0M632 405h0M585 386h0M610 360h0M539 426h0M554 279h0" stroke="#8a4008" stroke-width="3.0" opacity="0.80"/><path d="M652 396h0M634 348h0M630 259h0M577 360h0M589 441h0M689 324h0M596 369h0M629 427h0M541 337h0M592 242h0M566 440h0" stroke="#ffcc20" stroke-width="3.0" opacity="0.75"/><path d="M569 236h0" stroke="#ffcc20" stroke-width="1.0" opacity="0.80"/><path d="M523 442h0M666 379h0M626 327h0M508 351h0M586 366h0M619 233h0M600 223h0M569 238h0" stroke="#e07a0c" stroke-width="5.0" opacity="0.45"/><path d="M689 371h0M613 346h0M498 390h0M541 434h0M595 278h0M576 377h0M591 295h0M631 309h0M594 436h0M604 243h0M574 246h0M640 190h0M605 239h0M564 223h0" stroke="#ffe050" stroke-width="5.0" opacity="0.50"/><path d="M608 302h0M655 331h0M539 429h0M587 359h0M466 339h0M618 255h0M566 442h0M476 314h0M589 286h0M584 185h0M643 179h0M643 216h0M650 203h0M631 223h0M564 215h0" stroke="#ffe050" stroke-width="2.0" opacity="0.55"/><path d="M609 425h0M481 387h0M539 433h0M677 309h0M501 413h0M579 269h0M515 332h0M574 279h0M665 326h0M574 406h0M574 441h0M500 428h0M658 315h0M639 428h0M561 326h0" stroke="#ffcc20" stroke-width="2.0" opacity="0.75"/><path d="M477 377h0M678 288h0M692 372h0M584 281h0M574 304h0M614 268h0M502 401h0M524 416h0M569 377h0M542 404h0M554 253h0" stroke="#8a4008" stroke-width="5.0" opacity="0.60"/><path d="M607 291h0M533 428h0M678 373h0M472 349h0M509 264h0M598 414h0" stroke="#8a4008" stroke-width="1.0" opacity="0.55"/><path d="M611 412h0M639 278h0M587 415h0M479 327h0M637 410h0M485 304h0M629 314h0M580 227h0M607 222h0" stroke="#8a4008" stroke-width="5.0" opacity="0.70"/><path d="M525 425h0M516 365h0M672 316h0M547 277h0M590 279h0M560 450h0M531 445h0M517 324h0" stroke="#ffcc20" stroke-width="5.0" opacity="0.45"/><path d="M669 309h0M462 346h0M508 298h0M615 316h0M559 351h0M600 247h0M513 311h0M489 334h0M591 409h0M626 277h0M595 450h0M656 208h0M592 240h0M601 193h0M599 232h0" stroke="#f59a10" stroke-width="4.0" opacity="0.60"/><path d="M483 313h0M531 422h0M565 368h0M540 451h0M558 431h0M540 421h0M592 387h0M584 293h0M595 249h0M582 351h0M640 267h0M482 325h0M549 393h0M658 284h0M507 358h0M536 398h0M519 373h0M548 255h0M559 276h0M579 363h0M658 375h0M641 369h0M589 452h0M633 292h0M588 216h0M581 245h0" stroke="#8a4008" stroke-width="4.0" opacity="0.70"/><path d="M485 306h0M573 345h0M617 308h0M480 310h0M575 237h0M682 298h0M665 362h0M635 388h0M576 421h0M654 354h0M533 416h0M576 214h0M615 210h0M596 239h0M628 211h0M642 219h0" stroke="#8a4008" stroke-width="2.0" opacity="0.80"/><path d="M677 350h0M610 272h0M592 247h0M646 423h0M476 345h0M481 319h0M589 270h0M585 255h0M625 425h0M619 211h0" stroke="#8a4008" stroke-width="5.0" opacity="0.95"/><path d="M497 416h0M535 356h0M638 413h0M538 438h0M532 384h0M684 317h0M595 427h0M552 261h0M602 208h0M575 213h0" stroke="#f59a10" stroke-width="5.0" opacity="0.70"/><path d="M550 239h0M659 346h0M678 314h0M502 374h0M629 433h0M649 438h0M541 427h0M630 240h0M608 190h0M620 193h0" stroke="#8a4008" stroke-width="4.0" opacity="0.65"/><path d="M491 359h0M582 384h0M483 391h0M578 267h0M551 306h0M539 269h0M598 428h0M647 241h0" stroke="#f59a10" stroke-width="5.0" opacity="0.95"/><path d="M547 364h0M479 312h0M535 282h0M687 307h0M531 314h0M534 274h0M647 416h0M523 437h0M588 227h0M616 246h0" stroke="#f59a10" stroke-width="1.0" opacity="0.85"/><path d="M609 259h0M626 425h0M653 314h0M511 291h0M669 349h0M550 289h0M641 411h0M651 408h0M654 428h0M630 420h0M597 455h0M686 342h0M602 224h0M560 229h0M563 203h0" stroke="#8a4008" stroke-width="2.0" opacity="0.90"/><path d="M538 384h0M607 246h0M668 289h0M548 389h0M510 362h0M558 287h0M524 288h0M566 221h0M620 211h0M656 213h0M586 226h0M565 182h0M559 221h0" stroke="#ffe050" stroke-width="4.0" opacity="0.45"/><path d="M541 279h0M537 361h0M626 439h0M602 393h0M522 336h0M663 321h0M563 442h0M554 452h0M515 304h0M497 303h0M593 378h0M623 231h0M570 224h0" stroke="#ffe050" stroke-width="5.0" opacity="0.95"/><path d="M502 421h0M670 302h0M590 406h0M591 422h0M615 211h0" stroke="#b85a0a" stroke-width="1.0" opacity="0.90"/><path d="M671 407h0M622 290h0M611 372h0M499 412h0M560 299h0M476 313h0M569 437h0M549 389h0M492 282h0M677 395h0M527 403h0M632 408h0M473 354h0M531 250h0M591 192h0M606 198h0M643 234h0" stroke="#ffe050" stroke-width="2.0" opacity="0.90"/><path d="M599 320h0M518 276h0M684 312h0M610 361h0M512 410h0" stroke="#ffcc20" stroke-width="1.0" opacity="0.50"/><path d="M550 426h0M500 399h0M499 400h0M563 240h0" stroke="#ffe050" stroke-width="1.0" opacity="0.75"/><path d="M577 321h0M566 410h0M601 291h0M594 355h0M584 385h0M529 254h0M536 322h0M530 400h0M480 325h0M557 259h0" stroke="#ffcc20" stroke-width="2.0" opacity="0.60"/><path d="M515 258h0M667 414h0M673 339h0M643 336h0M635 250h0" stroke="#b85a0a" stroke-width="1.0" opacity="0.80"/><path d="M472 314h0M484 386h0M654 292h0M680 358h0M557 441h0M619 297h0M632 414h0M610 326h0M572 331h0M534 406h0M490 344h0M544 276h0M547 254h0M684 325h0M608 231h0M560 216h0" stroke="#e07a0c" stroke-width="3.0" opacity="0.95"/><path d="M496 274h0M578 332h0M661 405h0M493 340h0M552 346h0M636 257h0M594 292h0M682 381h0M512 411h0M516 391h0M676 406h0M647 375h0M677 340h0M567 249h0M639 287h0M473 337h0M615 226h0" stroke="#b85a0a" stroke-width="2.0" opacity="0.55"/><path d="M489 308h0M591 236h0M579 417h0M628 309h0M476 332h0M553 320h0M551 380h0M590 389h0M620 364h0M608 402h0M540 419h0M510 362h0M614 180h0M627 217h0" stroke="#ffe050" stroke-width="4.0" opacity="0.85"/><path d="M480 381h0M653 362h0M520 283h0M673 354h0M648 382h0M658 278h0M655 420h0M676 374h0M586 398h0M486 353h0M638 240h0M584 249h0M635 245h0" stroke="#f59a10" stroke-width="3.0" opacity="0.90"/><path d="M535 405h0M633 299h0M637 272h0M518 251h0M524 261h0M575 229h0M608 227h0M566 231h0" stroke="#ffb818" stroke-width="1.0" opacity="0.75"/><path d="M501 342h0M658 317h0M616 309h0M485 350h0M609 443h0M565 286h0M493 288h0M658 277h0M475 309h0M645 276h0M665 401h0M495 274h0M594 443h0M576 452h0M640 236h0M626 205h0" stroke="#ffe050" stroke-width="4.0" opacity="0.60"/><path d="M597 249h0M663 298h0M664 302h0M502 377h0M469 352h0M537 270h0M569 250h0M584 433h0M511 322h0M690 344h0M597 262h0M510 262h0M565 230h0" stroke="#ffb818" stroke-width="3.0" opacity="0.95"/><path d="M496 279h0M586 246h0M666 389h0M489 368h0M641 286h0M640 360h0M505 363h0M515 302h0M640 409h0M631 376h0M544 306h0M603 257h0M634 363h0M644 360h0M637 187h0M607 216h0M636 203h0M642 235h0M578 230h0M562 217h0M569 250h0M610 187h0" stroke="#ffb818" stroke-width="3.0" opacity="0.65"/><path d="M503 323h0M615 254h0M507 338h0M605 377h0M527 282h0M652 357h0M492 287h0M553 398h0M568 285h0M606 426h0M648 319h0" stroke="#8a4008" stroke-width="4.0" opacity="0.95"/><path d="M482 366h0M650 432h0M478 316h0M525 307h0M547 448h0M664 365h0M586 259h0M643 406h0M497 314h0M547 316h0M690 360h0M506 380h0M683 293h0M597 179h0M619 171h0M578 230h0" stroke="#ffe050" stroke-width="4.0" opacity="0.65"/><path d="M505 339h0M599 319h0" stroke="#ffb818" stroke-width="1.0" opacity="0.50"/><path d="M557 447h0M668 286h0M586 440h0M520 396h0M669 387h0M617 258h0M584 283h0M674 402h0M552 260h0M590 392h0M690 340h0M537 410h0M556 251h0M577 190h0" stroke="#b85a0a" stroke-width="4.0" opacity="0.60"/><path d="M592 450h0M502 317h0M639 311h0M573 250h0M549 410h0M491 308h0M653 389h0M665 401h0M683 333h0M689 306h0M637 395h0M587 342h0M662 331h0M493 373h0M501 285h0M502 284h0M623 422h0M596 250h0M510 355h0M674 297h0M616 401h0M616 365h0" stroke="#ffcc20" stroke-width="2.0" opacity="0.80"/><path d="M654 269h0M513 272h0M658 415h0M557 434h0M648 443h0M485 403h0M542 294h0" stroke="#ffcc20" stroke-width="2.0" opacity="0.45"/><path d="M665 273h0M661 375h0M520 256h0M535 274h0M645 344h0M628 435h0M588 277h0M491 327h0M641 272h0M603 417h0M682 340h0M627 240h0M615 233h0" stroke="#b85a0a" stroke-width="3.0" opacity="0.80"/><path d="M515 281h0M647 322h0M589 453h0M544 353h0M497 337h0M678 345h0M493 382h0M566 240h0M694 354h0M515 400h0M602 219h0M591 232h0M645 249h0" stroke="#f59a10" stroke-width="2.0" opacity="0.70"/><path d="M593 245h0M624 420h0M543 269h0M679 296h0M473 346h0M595 308h0M625 372h0M644 293h0M507 339h0M559 261h0M687 310h0M594 297h0M600 221h0M646 241h0M594 239h0" stroke="#b85a0a" stroke-width="2.0" opacity="0.70"/><path d="M584 293h0M685 297h0M532 301h0M614 396h0M546 444h0M523 366h0M698 341h0M654 341h0M502 275h0M607 216h0M602 233h0M579 211h0" stroke="#e07a0c" stroke-width="1.0" opacity="0.85"/><path d="M691 379h0M536 422h0M552 264h0M581 311h0M562 387h0M681 395h0M648 271h0M628 395h0M658 334h0M579 270h0M643 395h0M514 311h0M511 377h0M510 328h0M648 341h0M680 309h0M611 252h0M542 416h0M654 368h0" stroke="#ffcc20" stroke-width="2.0" opacity="0.95"/><path d="M610 370h0M622 283h0M521 274h0M515 282h0M569 248h0M548 255h0M536 294h0M523 336h0M688 346h0M520 388h0" stroke="#ffcc20" stroke-width="4.0" opacity="0.65"/><path d="M525 371h0M567 252h0M523 364h0M545 250h0M647 277h0M574 368h0M689 349h0M574 434h0M610 452h0M493 290h0" stroke="#ffe050" stroke-width="3.0" opacity="0.70"/><path d="M579 350h0M551 260h0M526 380h0M672 397h0M528 360h0M501 323h0" stroke="#8a4008" stroke-width="1.0" opacity="0.65"/><path d="M485 314h0M676 311h0M654 268h0M595 449h0M586 434h0M524 417h0" stroke="#ffcc20" stroke-width="3.0" opacity="0.45"/><path d="M653 320h0M495 354h0M538 320h0M621 429h0M540 300h0M595 236h0" stroke="#ffe050" stroke-width="1.0" opacity="0.90"/><path d="M611 296h0M603 353h0M538 285h0M572 263h0M563 375h0M554 349h0M536 274h0M683 323h0M510 407h0M591 244h0M636 239h0M561 247h0" stroke="#e07a0c" stroke-width="2.0" opacity="0.55"/><path d="M503 394h0M644 422h0M613 392h0M488 336h0M585 264h0M530 304h0M545 259h0M511 387h0M542 259h0M630 258h0M669 394h0M485 336h0M688 316h0M515 342h0M614 252h0M650 241h0" stroke="#e07a0c" stroke-width="3.0" opacity="0.85"/><path d="M526 317h0M653 357h0M548 269h0M504 287h0M561 260h0M563 252h0M540 400h0M644 272h0M491 402h0M589 238h0M539 311h0M550 354h0M590 250h0M631 236h0M615 241h0M601 229h0" stroke="#e07a0c" stroke-width="3.0" opacity="0.75"/><path d="M664 373h0M605 441h0M546 336h0M648 299h0M480 378h0M605 426h0M511 385h0M503 346h0M615 422h0M564 248h0M483 301h0M579 225h0M570 225h0" stroke="#ffb818" stroke-width="2.0" opacity="0.70"/><path d="M598 367h0M548 285h0M676 324h0M508 419h0M518 357h0M556 272h0M606 366h0M493 298h0M597 415h0M606 238h0M619 241h0M598 233h0" stroke="#8a4008" stroke-width="4.0" opacity="0.50"/><path d="M506 346h0M497 276h0M665 326h0M556 395h0M507 299h0M519 421h0M600 441h0M517 361h0M577 243h0M619 227h0M575 229h0M596 220h0M637 218h0" stroke="#f59a10" stroke-width="3.0" opacity="0.70"/><path d="M570 412h0M667 394h0M636 440h0M642 434h0M606 251h0M576 248h0M616 196h0M614 219h0M588 236h0" stroke="#e07a0c" stroke-width="5.0" opacity="0.90"/><path d="M482 369h0M599 258h0M631 266h0M514 315h0M581 256h0M502 306h0M526 254h0M666 387h0M663 291h0M653 358h0M671 335h0M682 331h0M620 264h0M554 374h0M531 246h0M520 374h0M596 239h0M570 224h0M583 237h0" stroke="#ffb818" stroke-width="4.0" opacity="0.65"/><path d="M645 365h0M613 248h0M497 347h0M600 254h0M572 447h0M588 400h0M678 408h0" stroke="#ffb818" stroke-width="2.0" opacity="1.00"/><path d="M566 434h0M695 328h0M666 366h0" stroke="#f59a10" stroke-width="1.0" opacity="0.45"/><path d="M648 413h0M519 269h0M578 288h0M608 286h0M513 400h0M652 338h0M612 327h0M636 392h0M557 250h0M679 322h0M501 363h0M591 402h0M667 297h0M607 248h0M616 231h0M629 249h0" stroke="#b85a0a" stroke-width="2.0" opacity="0.60"/><path d="M558 418h0M545 248h0M614 324h0M619 267h0M630 390h0M529 298h0M552 372h0M593 444h0M608 393h0M510 304h0M564 253h0M640 424h0M592 258h0M610 228h0M593 246h0M573 206h0" stroke="#ffb818" stroke-width="4.0" opacity="0.90"/><path d="M609 432h0M650 431h0M520 306h0M504 308h0M536 425h0M635 265h0M614 364h0M529 293h0M593 234h0M630 381h0M513 424h0M638 362h0M618 285h0M580 279h0M675 311h0M586 242h0M613 174h0" stroke="#f59a10" stroke-width="5.0" opacity="0.90"/><path d="M654 363h0M571 371h0M521 327h0M465 353h0M543 260h0M581 223h0" stroke="#8a4008" stroke-width="1.0" opacity="0.80"/><path d="M604 258h0M634 436h0M607 331h0M679 290h0M585 264h0M586 322h0M503 408h0M593 357h0M583 310h0M690 332h0M595 231h0M578 193h0M625 245h0M583 217h0M601 206h0" stroke="#e07a0c" stroke-width="3.0" opacity="0.65"/><path d="M575 339h0M510 417h0M667 276h0M620 408h0M680 311h0M614 251h0M530 325h0M606 275h0M656 343h0M514 267h0M612 245h0" stroke="#b85a0a" stroke-width="3.0" opacity="0.70"/><path d="M614 444h0M607 420h0M672 392h0M623 346h0M485 316h0M676 380h0M636 280h0M614 246h0M560 223h0M569 237h0M559 220h0" stroke="#e07a0c" stroke-width="5.0" opacity="0.85"/><path d="M527 273h0M579 331h0M675 388h0M661 397h0M625 314h0M520 409h0M596 436h0M604 444h0M657 382h0M492 407h0M544 430h0M605 250h0M610 226h0" stroke="#ffb818" stroke-width="5.0" opacity="0.60"/><path d="M505 356h0M682 357h0M674 405h0M568 262h0M493 401h0M696 353h0M526 442h0M627 261h0M688 358h0M502 295h0M554 248h0M549 371h0M666 286h0M509 276h0M663 346h0M675 318h0M575 432h0M546 403h0M583 246h0M615 233h0M628 206h0M603 249h0M626 240h0" stroke="#e07a0c" stroke-width="4.0" opacity="0.70"/><path d="M516 306h0M561 264h0M524 306h0M581 365h0M469 320h0M594 454h0M521 277h0M665 334h0M661 362h0M499 375h0M628 384h0" stroke="#ffe050" stroke-width="3.0" opacity="0.45"/><path d="M568 373h0M683 292h0M673 286h0M580 434h0M614 440h0M463 339h0M517 298h0M555 423h0M638 416h0M616 439h0M525 318h0M521 265h0M570 190h0M607 221h0M621 228h0M619 194h0" stroke="#ffb818" stroke-width="3.0" opacity="0.80"/><path d="M624 427h0M621 300h0M504 345h0M644 405h0M564 431h0M535 404h0M511 295h0M510 402h0M565 395h0M545 270h0M556 447h0M567 391h0M647 243h0M578 219h0M623 245h0" stroke="#e07a0c" stroke-width="4.0" opacity="0.85"/><path d="M532 310h0M596 430h0M681 335h0M663 329h0M519 297h0M590 395h0M645 260h0M616 435h0M642 293h0M693 375h0M491 294h0M643 313h0M680 345h0" stroke="#ffb818" stroke-width="2.0" opacity="0.80"/><path d="M615 243h0M646 313h0M617 388h0M679 389h0M598 343h0M642 220h0" stroke="#ffe050" stroke-width="1.0" opacity="0.65"/><path d="M640 406h0M616 286h0M588 265h0M642 338h0M554 251h0M595 247h0" stroke="#8a4008" stroke-width="1.0" opacity="0.90"/><path d="M492 375h0M626 281h0M469 348h0M495 322h0M531 405h0M663 276h0M636 255h0M540 328h0M644 371h0M495 361h0M541 443h0M512 320h0M573 179h0M641 197h0M636 244h0M649 204h0M594 209h0" stroke="#e07a0c" stroke-width="3.0" opacity="0.60"/><path d="M582 369h0M515 394h0M664 331h0M695 356h0M567 238h0M664 287h0M539 314h0M659 301h0M567 234h0M585 235h0" stroke="#ffb818" stroke-width="5.0" opacity="0.75"/><path d="M489 384h0M601 396h0M483 286h0M637 408h0M630 434h0" stroke="#ffcc20" stroke-width="3.0" opacity="1.00"/><path d="M502 348h0M495 407h0" stroke="#ffcc20" stroke-width="5.0" opacity="1.00"/><path d="M484 398h0M615 380h0M685 343h0M522 417h0M678 359h0M595 371h0M534 251h0M564 182h0" stroke="#e07a0c" stroke-width="1.0" opacity="0.80"/><path d="M569 449h0M537 286h0M579 247h0M568 286h0M660 376h0M660 349h0M490 322h0M491 367h0M653 318h0M573 231h0M567 221h0M630 241h0M637 202h0M622 229h0M611 192h0" stroke="#8a4008" stroke-width="2.0" opacity="0.60"/><path d="M683 348h0M516 401h0M538 257h0M621 443h0" stroke="#b85a0a" stroke-width="2.0" opacity="0.45"/><path d="M492 348h0M569 452h0M597 447h0M541 290h0M578 412h0M666 381h0M630 396h0M624 249h0M653 346h0M580 413h0M484 292h0M510 410h0M631 401h0M603 241h0M516 298h0M622 221h0M559 243h0" stroke="#ffe050" stroke-width="3.0" opacity="0.50"/><path d="M603 319h0M625 360h0M619 441h0M580 455h0M503 396h0M662 371h0M582 215h0" stroke="#ffb818" stroke-width="2.0" opacity="0.95"/><path d="M650 414h0M648 348h0M688 355h0" stroke="#f59a10" stroke-width="1.0" opacity="1.00"/><path d="M501 323h0M514 412h0M645 304h0M571 313h0M686 359h0M670 391h0M497 353h0M572 242h0M584 227h0" stroke="#ffe050" stroke-width="5.0" opacity="0.55"/><path d="M586 261h0M665 410h0M587 444h0M479 397h0M511 416h0M514 437h0M517 263h0M636 409h0M480 376h0M606 273h0M588 249h0M611 186h0M602 209h0M572 248h0M636 182h0" stroke="#e07a0c" stroke-width="3.0" opacity="0.45"/><path d="M660 276h0M635 375h0M631 255h0M689 355h0M483 337h0M629 318h0M485 390h0M483 338h0M688 329h0M633 183h0M574 216h0M600 240h0M564 240h0M614 220h0M572 206h0M567 208h0" stroke="#ffe050" stroke-width="5.0" opacity="0.75"/><path d="M638 297h0M647 415h0M599 263h0M640 303h0M607 430h0M694 369h0M497 370h0M614 210h0" stroke="#ffb818" stroke-width="1.0" opacity="0.65"/><path d="M658 283h0M632 401h0M644 336h0M591 274h0M621 262h0M501 391h0M517 306h0M646 417h0M510 355h0M587 238h0M626 237h0" stroke="#ffb818" stroke-width="5.0" opacity="0.55"/><path d="M528 295h0M543 411h0M497 277h0M605 273h0M669 411h0M678 380h0M510 288h0M560 241h0M535 311h0M645 391h0M524 427h0M590 430h0M592 290h0M599 320h0" stroke="#e07a0c" stroke-width="3.0" opacity="0.90"/><path d="M554 425h0M662 295h0M675 287h0M563 450h0M600 298h0M598 388h0M499 349h0M527 440h0M559 396h0M576 334h0M529 317h0" stroke="#ffcc20" stroke-width="4.0" opacity="0.60"/><path d="M548 445h0M579 405h0M512 278h0M489 397h0M575 352h0M525 265h0M599 300h0M589 266h0M654 197h0M567 250h0M563 233h0M616 238h0" stroke="#8a4008" stroke-width="5.0" opacity="0.85"/><path d="M566 257h0M573 360h0M506 415h0M656 324h0M619 333h0M586 450h0M579 294h0M673 285h0M502 377h0M674 399h0M664 362h0M638 229h0" stroke="#b85a0a" stroke-width="4.0" opacity="0.90"/><path d="M528 396h0" stroke="#ffcc20" stroke-width="1.0" opacity="1.00"/><path d="M618 248h0M509 379h0M600 262h0M537 418h0M641 376h0M538 362h0M575 247h0" stroke="#ffe050" stroke-width="2.0" opacity="0.45"/><path d="M480 379h0M605 270h0M590 242h0M541 411h0" stroke="#f59a10" stroke-width="4.0" opacity="1.00"/><path d="M553 412h0M541 271h0M664 327h0M612 400h0M614 271h0M609 369h0M482 366h0M543 332h0" stroke="#e07a0c" stroke-width="2.0" opacity="1.00"/><path d="M626 374h0M608 414h0M651 368h0M511 413h0M652 342h0M501 388h0M603 440h0M472 330h0M614 330h0M517 401h0" stroke="#ffe050" stroke-width="4.0" opacity="1.00"/><path d="M494 329h0M588 455h0M622 429h0M606 238h0M598 237h0" stroke="#b85a0a" stroke-width="1.0" opacity="0.85"/><path d="M523 291h0M680 318h0M493 285h0M540 424h0M580 251h0M566 223h0M610 215h0" stroke="#f59a10" stroke-width="2.0" opacity="0.45"/><path d="M515 375h0M607 280h0M643 337h0M520 433h0M607 426h0M519 436h0M632 428h0" stroke="#ffcc20" stroke-width="5.0" opacity="0.55"/><path d="M688 343h0M618 377h0M653 292h0M495 406h0M562 349h0" stroke="#8a4008" stroke-width="1.0" opacity="0.85"/><path d="M644 399h0M610 403h0M493 408h0M596 242h0" stroke="#ffe050" stroke-width="1.0" opacity="0.55"/><path d="M514 382h0M651 417h0M619 356h0M689 342h0M512 403h0" stroke="#ffb818" stroke-width="4.0" opacity="1.00"/><path d="M496 293h0M513 403h0M539 269h0M498 293h0M643 309h0M533 345h0M536 253h0M658 330h0M686 326h0M579 207h0M644 231h0M610 201h0" stroke="#ffb818" stroke-width="5.0" opacity="0.70"/><path d="M487 356h0M555 259h0M495 334h0M584 453h0M531 254h0M560 233h0M666 362h0M605 202h0M588 194h0M599 210h0M615 215h0" stroke="#ffe050" stroke-width="3.0" opacity="0.55"/><path d="M588 453h0M623 437h0M655 287h0M625 265h0M684 385h0M528 297h0M610 437h0M483 361h0M625 204h0M600 242h0" stroke="#8a4008" stroke-width="4.0" opacity="0.45"/><path d="M545 402h0M591 326h0M558 404h0M594 409h0M591 380h0M623 234h0" stroke="#8a4008" stroke-width="2.0" opacity="0.45"/><path d="M523 255h0M610 259h0M569 358h0M605 457h0M643 257h0M605 353h0M597 207h0" stroke="#ffb818" stroke-width="1.0" opacity="0.90"/><path d="M493 286h0M540 271h0M593 198h0" stroke="#b85a0a" stroke-width="1.0" opacity="0.45"/><path d="M694 354h0M690 379h0M504 402h0M547 398h0" stroke="#e07a0c" stroke-width="1.0" opacity="0.95"/><path d="M477 327h0M655 346h0M595 447h0M595 244h0M690 325h0M626 390h0" stroke="#8a4008" stroke-width="3.0" opacity="0.45"/><path d="M513 280h0M486 390h0M511 274h0M592 327h0M659 429h0M545 289h0M645 311h0M482 395h0M648 237h0M582 237h0" stroke="#e07a0c" stroke-width="2.0" opacity="0.75"/><path d="M663 406h0M554 257h0M586 440h0" stroke="#ffe050" stroke-width="5.0" opacity="1.00"/><path d="M673 318h0M568 293h0M487 406h0" stroke="#e07a0c" stroke-width="5.0" opacity="1.00"/><path d="M579 428h0M513 413h0M610 444h0M535 431h0M639 244h0M607 248h0M626 243h0M653 184h0M588 243h0M591 247h0M619 173h0" stroke="#b85a0a" stroke-width="5.0" opacity="0.70"/><path d="M531 327h0M505 406h0M629 428h0M646 304h0M565 245h0M575 252h0M560 318h0M643 370h0M486 386h0M621 240h0M614 213h0" stroke="#ffb818" stroke-width="3.0" opacity="0.45"/><path d="M561 279h0M566 436h0M551 290h0M516 314h0M641 429h0M494 311h0M628 441h0M588 309h0M487 293h0M588 227h0M596 229h0" stroke="#ffb818" stroke-width="2.0" opacity="0.55"/><path d="M576 332h0M537 263h0M533 334h0M533 252h0M479 374h0M642 192h0" stroke="#e07a0c" stroke-width="1.0" opacity="0.60"/><path d="M679 291h0M593 248h0M600 334h0" stroke="#f59a10" stroke-width="1.0" opacity="0.65"/><path d="M587 285h0M540 421h0M586 261h0M599 300h0M635 326h0M509 282h0M561 231h0" stroke="#f59a10" stroke-width="4.0" opacity="0.45"/><path d="M504 286h0M501 290h0M499 281h0M533 352h0M642 248h0M623 183h0" stroke="#b85a0a" stroke-width="1.0" opacity="0.60"/><path d="M509 418h0M535 438h0M676 358h0M616 203h0M583 220h0" stroke="#e07a0c" stroke-width="1.0" opacity="0.45"/><path d="M661 336h0M589 250h0" stroke="#ffb818" stroke-width="1.0" opacity="1.00"/><path d="M653 261h0M600 399h0M502 323h0" stroke="#8a4008" stroke-width="5.0" opacity="1.00"/><path d="M644 422h0M541 279h0M592 300h0M639 211h0M598 243h0M630 249h0M622 236h0" stroke="#ffe050" stroke-width="5.0" opacity="0.45"/><path d="M625 427h0M527 321h0M675 333h0M671 312h0" stroke="#f59a10" stroke-width="2.0" opacity="1.00"/><path d="M625 380h0M690 366h0M625 283h0M655 361h0" stroke="#ffb818" stroke-width="3.0" opacity="1.00"/><path d="M576 262h0M498 276h0M575 455h0M591 294h0M518 376h0M509 352h0M587 436h0M591 444h0M551 421h0M511 329h0M563 220h0" stroke="#ffb818" stroke-width="3.0" opacity="0.70"/><path d="M612 437h0M580 239h0" stroke="#ffcc20" stroke-width="1.0" opacity="0.95"/><path d="M534 403h0M542 420h0M617 286h0M625 186h0" stroke="#b85a0a" stroke-width="1.0" opacity="0.95"/><path d="M531 312h0M605 312h0M525 318h0M610 318h0" stroke="#ffcc20" stroke-width="1.0" opacity="0.85"/><path d="M498 368h0M670 390h0M506 364h0M554 345h0M604 409h0M515 284h0M615 441h0M612 291h0M496 271h0" stroke="#b85a0a" stroke-width="3.0" opacity="1.00"/><path d="M527 392h0M601 240h0M648 435h0M546 266h0M628 447h0M614 399h0M587 226h0" stroke="#8a4008" stroke-width="1.0" opacity="0.50"/><path d="M644 376h0M611 284h0M601 452h0M491 411h0M608 440h0M558 241h0M648 322h0M487 379h0M598 208h0M568 219h0" stroke="#f59a10" stroke-width="5.0" opacity="0.75"/><path d="M540 439h0M568 446h0M602 416h0M620 235h0M597 236h0" stroke="#ffb818" stroke-width="1.0" opacity="0.80"/><path d="M564 384h0M625 313h0M599 186h0M632 187h0M564 240h0" stroke="#e07a0c" stroke-width="1.0" opacity="0.50"/><path d="M661 361h0M553 304h0M471 365h0" stroke="#8a4008" stroke-width="3.0" opacity="1.00"/><path d="M592 415h0M631 373h0M489 320h0M534 288h0M533 389h0M539 331h0M471 347h0M556 353h0M567 193h0M619 250h0M593 221h0M626 227h0" stroke="#8a4008" stroke-width="5.0" opacity="0.75"/><path d="M555 291h0M496 283h0" stroke="#b85a0a" stroke-width="4.0" opacity="1.00"/><path d="M500 311h0M609 311h0M666 328h0M635 226h0M581 240h0" stroke="#b85a0a" stroke-width="1.0" opacity="0.75"/><path d="M499 329h0M536 281h0M562 232h0M580 238h0" stroke="#f59a10" stroke-width="1.0" opacity="0.50"/><path d="M554 435h0" stroke="#8a4008" stroke-width="1.0" opacity="0.95"/><path d="M483 335h0" stroke="#b85a0a" stroke-width="1.0" opacity="1.00"/><path d="M669 305h0" stroke="#ffcc20" stroke-width="1.0" opacity="0.45"/><path d="M618 380h0M668 372h0M478 358h0M584 247h0M600 431h0M668 325h0" stroke="#ffcc20" stroke-width="4.0" opacity="1.00"/><path d="M475 343h0M620 231h0M573 239h0" stroke="#ffb818" stroke-width="1.0" opacity="0.70"/><path d="M499 339h0M677 329h0M606 227h0M642 231h0" stroke="#ffb818" stroke-width="1.0" opacity="0.45"/><path d="M628 272h0M568 199h0" stroke="#e07a0c" stroke-width="1.0" opacity="0.75"/><path d="M632 268h0M530 419h0M588 296h0M582 451h0M613 192h0M600 219h0" stroke="#b85a0a" stroke-width="1.0" opacity="0.55"/><path d="M641 298h0M615 400h0M596 312h0M681 387h0M618 239h0M596 208h0M615 179h0" stroke="#ffb818" stroke-width="1.0" opacity="0.55"/><path d="M604 244h0M641 426h0M588 238h0M513 417h0" stroke="#f59a10" stroke-width="1.0" opacity="0.70"/><path d="M669 397h0" stroke="#ffe050" stroke-width="1.0" opacity="0.80"/><path d="M589 313h0M522 277h0" stroke="#8a4008" stroke-width="1.0" opacity="1.00"/><path d="M584 376h0M601 256h0M611 320h0" stroke="#f59a10" stroke-width="5.0" opacity="1.00"/><path d="M513 366h0M642 233h0" stroke="#b85a0a" stroke-width="1.0" opacity="0.50"/><path d="M625 281h0M559 274h0" stroke="#f59a10" stroke-width="1.0" opacity="0.60"/><path d="M654 193h0M625 211h0" stroke="#f59a10" stroke-width="2.0" opacity="0.40"/><path d="M634 245h0M634 217h0" stroke="#b85a0a" stroke-width="2.0" opacity="0.40"/><path d="M625 184h0M585 226h0M632 220h0M633 211h0M626 227h0" stroke="#e07a0c" stroke-width="2.0" opacity="0.40"/><path d="M594 217h0M597 207h0" stroke="#ffb818" stroke-width="4.0" opacity="0.40"/><path d="M628 242h0" stroke="#8a4008" stroke-width="6.0" opacity="0.65"/><path d="M556 181h0" stroke="#ffe050" stroke-width="1.0" opacity="0.40"/><path d="M636 186h0M616 223h0M624 218h0" stroke="#e07a0c" stroke-width="4.0" opacity="0.40"/><path d="M562 221h0" stroke="#8a4008" stroke-width="1.0" opacity="0.40"/><path d="M646 207h0" stroke="#e07a0c" stroke-width="1.0" opacity="0.40"/><path d="M586 246h0M577 180h0" stroke="#f59a10" stroke-width="6.0" opacity="0.55"/><path d="M567 182h0" stroke="#e07a0c" stroke-width="1.0" opacity="0.70"/><path d="M647 192h0M592 199h0" stroke="#8a4008" stroke-width="5.0" opacity="0.40"/><path d="M593 218h0" stroke="#b85a0a" stroke-width="4.0" opacity="0.40"/><path d="M575 215h0M637 230h0" stroke="#e07a0c" stroke-width="5.0" opacity="0.40"/><path d="M582 239h0" stroke="#ffb818" stroke-width="6.0" opacity="0.45"/><path d="M620 214h0" stroke="#ffe050" stroke-width="6.0" opacity="0.85"/><path d="M644 176h0M653 188h0M574 184h0" stroke="#b85a0a" stroke-width="5.0" opacity="0.40"/><path d="M563 218h0M605 230h0M620 234h0" stroke="#ffb818" stroke-width="3.0" opacity="0.40"/><path d="M648 208h0" stroke="#e07a0c" stroke-width="3.0" opacity="0.40"/><path d="M648 243h0" stroke="#ffb818" stroke-width="6.0" opacity="0.90"/><path d="M602 233h0" stroke="#ffe050" stroke-width="1.0" opacity="0.45"/><path d="M570 238h0" stroke="#b85a0a" stroke-width="6.0" opacity="0.45"/><path d="M634 221h0M577 249h0" stroke="#ffb818" stroke-width="2.0" opacity="0.40"/><path d="M642 221h0" stroke="#ffe050" stroke-width="5.0" opacity="0.40"/><path d="M591 238h0" stroke="#f59a10" stroke-width="6.0" opacity="0.85"/><path d="M581 233h0" stroke="#f59a10" stroke-width="6.0" opacity="0.60"/><path d="M580 200h0" stroke="#f59a10" stroke-width="6.0" opacity="0.50"/><path d="M568 199h0" stroke="#ffe050" stroke-width="2.0" opacity="0.40"/><path d="M655 203h0" stroke="#b85a0a" stroke-width="6.0" opacity="0.75"/><path d="M580 230h0M563 224h0" stroke="#f59a10" stroke-width="5.0" opacity="0.40"/><path d="M581 198h0" stroke="#f59a10" stroke-width="6.0" opacity="0.80"/><path d="M639 245h0" stroke="#ffe050" stroke-width="3.0" opacity="0.40"/><path d="M604 212h0" stroke="#f59a10" stroke-width="6.0" opacity="0.40"/><path d="M612 238h0" stroke="#ffb818" stroke-width="6.0" opacity="0.85"/><path d="M642 192h0M653 169h0" stroke="#b85a0a" stroke-width="1.0" opacity="0.40"/><path d="M630 205h0" stroke="#8a4008" stroke-width="6.0" opacity="0.90"/><path d="M582 209h0" stroke="#e07a0c" stroke-width="6.0" opacity="0.85"/></g><ellipse cx="582" cy="346" rx="107" ry="102" fill="none" stroke="#e09a18" stroke-width="14" opacity="0.55" filter="url(#b4)"/><circle cx="583.0" cy="229.0" r="22.4" fill="#f5b018" opacity="0.7" filter="url(#b6)"/><circle cx="615.6" cy="231.0" r="19.2" fill="#f5b018" opacity="0.7" filter="url(#b6)"/><circle cx="596.0" cy="262.0" r="27.2" fill="#f5b018" opacity="0.7" filter="url(#b6)"/><circle cx="569.7" cy="288.0" r="19.2" fill="#f5b018" opacity="0.7" filter="url(#b6)"/><circle cx="615.6" cy="281.6" r="22.4" fill="#f5b018" opacity="0.7" filter="url(#b6)"/><circle cx="510.8" cy="267.0" r="16.0" fill="#f5b018" opacity="0.7" filter="url(#b6)"/><circle cx="490.0" cy="300.0" r="24.0" fill="#f5b018" opacity="0.7" filter="url(#b6)"/><circle cx="540.0" cy="295.0" r="16.0" fill="#f5b018" opacity="0.7" filter="url(#b6)"/><circle cx="585.0" cy="280.0" r="22.4" fill="#f5b018" opacity="0.7" filter="url(#b6)"/><circle cx="665.0" cy="300.0" r="22.4" fill="#f5b018" opacity="0.7" filter="url(#b6)"/><circle cx="685.0" cy="335.0" r="22.4" fill="#f5b018" opacity="0.7" filter="url(#b6)"/><circle cx="500.0" cy="360.0" r="24.0" fill="#f5b018" opacity="0.7" filter="url(#b6)"/><circle cx="515.0" cy="405.0" r="27.2" fill="#f5b018" opacity="0.7" filter="url(#b6)"/><circle cx="560.0" cy="335.0" r="19.2" fill="#f5b018" opacity="0.7" filter="url(#b6)"/><circle cx="590.0" cy="340.0" r="19.2" fill="#f5b018" opacity="0.7" filter="url(#b6)"/><circle cx="625.0" cy="390.0" r="19.2" fill="#f5b018" opacity="0.7" filter="url(#b6)"/><circle cx="545.0" cy="435.0" r="20.8" fill="#f5b018" opacity="0.7" filter="url(#b6)"/><circle cx="605.0" cy="425.0" r="22.4" fill="#f5b018" opacity="0.7" filter="url(#b6)"/><circle cx="675.0" cy="380.0" r="16.0" fill="#f5b018" opacity="0.7" filter="url(#b6)"/><circle cx="485.0" cy="390.0" r="19.2" fill="#f5b018" opacity="0.7" filter="url(#b6)"/><circle cx="533.0" cy="411.0" r="16.0" fill="#f5b018" opacity="0.7" filter="url(#b6)"/><circle cx="661.0" cy="419.0" r="12.8" fill="#f5b018" opacity="0.7" filter="url(#b6)"/><circle cx="607.0" cy="206.0" r="9.6" fill="#f5b018" opacity="0.7" filter="url(#b6)"/><circle cx="623.0" cy="186.0" r="6.4" fill="#f5b018" opacity="0.7" filter="url(#b6)"/><circle cx="473.0" cy="341.0" r="12.8" fill="#f5b018" opacity="0.7" filter="url(#b6)"/><circle cx="503.0" cy="436.0" r="11.2" fill="#f5b018" opacity="0.7" filter="url(#b6)"/><circle cx="568.0" cy="451.0" r="14.4" fill="#f5b018" opacity="0.7" filter="url(#b6)"/><circle cx="643.0" cy="441.0" r="12.8" fill="#f5b018" opacity="0.7" filter="url(#b6)"/><circle cx="693.0" cy="361.0" r="11.2" fill="#f5b018" opacity="0.7" filter="url(#b6)"/><circle cx="638.0" cy="261.0" r="11.2" fill="#f5b018" opacity="0.7" filter="url(#b6)"/><circle cx="583.0" cy="229.0" r="13.3" fill="#ffd838" opacity="0.95" filter="url(#b3)"/><circle cx="615.6" cy="231.0" r="11.4" fill="#ffd838" opacity="0.95" filter="url(#b3)"/><circle cx="596.0" cy="262.0" r="16.1" fill="#ffd838" opacity="0.95" filter="url(#b3)"/><circle cx="569.7" cy="288.0" r="11.4" fill="#ffd838" opacity="0.95" filter="url(#b3)"/><circle cx="615.6" cy="281.6" r="13.3" fill="#ffd838" opacity="0.95" filter="url(#b3)"/><circle cx="510.8" cy="267.0" r="9.5" fill="#ffd838" opacity="0.95" filter="url(#b3)"/><circle cx="490.0" cy="300.0" r="14.2" fill="#ffd838" opacity="0.95" filter="url(#b3)"/><circle cx="540.0" cy="295.0" r="9.5" fill="#ffd838" opacity="0.95" filter="url(#b3)"/><circle cx="585.0" cy="280.0" r="13.3" fill="#ffd838" opacity="0.95" filter="url(#b3)"/><circle cx="665.0" cy="300.0" r="13.3" fill="#ffd838" opacity="0.95" filter="url(#b3)"/><circle cx="685.0" cy="335.0" r="13.3" fill="#ffd838" opacity="0.95" filter="url(#b3)"/><circle cx="500.0" cy="360.0" r="14.2" fill="#ffd838" opacity="0.95" filter="url(#b3)"/><circle cx="515.0" cy="405.0" r="16.1" fill="#ffd838" opacity="0.95" filter="url(#b3)"/><circle cx="560.0" cy="335.0" r="11.4" fill="#ffd838" opacity="0.95" filter="url(#b3)"/><circle cx="590.0" cy="340.0" r="11.4" fill="#ffd838" opacity="0.95" filter="url(#b3)"/><circle cx="625.0" cy="390.0" r="11.4" fill="#ffd838" opacity="0.95" filter="url(#b3)"/><circle cx="545.0" cy="435.0" r="12.3" fill="#ffd838" opacity="0.95" filter="url(#b3)"/><circle cx="605.0" cy="425.0" r="13.3" fill="#ffd838" opacity="0.95" filter="url(#b3)"/><circle cx="675.0" cy="380.0" r="9.5" fill="#ffd838" opacity="0.95" filter="url(#b3)"/><circle cx="485.0" cy="390.0" r="11.4" fill="#ffd838" opacity="0.95" filter="url(#b3)"/><circle cx="533.0" cy="411.0" r="9.5" fill="#ffd838" opacity="0.95" filter="url(#b3)"/><circle cx="661.0" cy="419.0" r="7.6" fill="#ffd838" opacity="0.95" filter="url(#b3)"/><circle cx="607.0" cy="206.0" r="5.7" fill="#ffd838" opacity="0.95" filter="url(#b3)"/><circle cx="623.0" cy="186.0" r="3.8" fill="#ffd838" opacity="0.95" filter="url(#b3)"/><circle cx="473.0" cy="341.0" r="7.6" fill="#ffd838" opacity="0.95" filter="url(#b3)"/><circle cx="503.0" cy="436.0" r="6.6" fill="#ffd838" opacity="0.95" filter="url(#b3)"/><circle cx="568.0" cy="451.0" r="8.5" fill="#ffd838" opacity="0.95" filter="url(#b3)"/><circle cx="643.0" cy="441.0" r="7.6" fill="#ffd838" opacity="0.95" filter="url(#b3)"/><circle cx="693.0" cy="361.0" r="6.6" fill="#ffd838" opacity="0.95" filter="url(#b3)"/><circle cx="638.0" cy="261.0" r="6.6" fill="#ffd838" opacity="0.95" filter="url(#b3)"/><circle cx="583.0" cy="229.0" r="5.6" fill="#fff8d8" filter="url(#b2)"/><circle cx="615.6" cy="231.0" r="4.8" fill="#fff8d8" filter="url(#b2)"/><circle cx="596.0" cy="262.0" r="6.8" fill="#fff8d8" filter="url(#b2)"/><circle cx="569.7" cy="288.0" r="4.8" fill="#fff8d8" filter="url(#b2)"/><circle cx="615.6" cy="281.6" r="5.6" fill="#fff8d8" filter="url(#b2)"/><circle cx="510.8" cy="267.0" r="4.0" fill="#fff8d8" filter="url(#b2)"/><circle cx="490.0" cy="300.0" r="6.0" fill="#fff8d8" filter="url(#b2)"/><circle cx="540.0" cy="295.0" r="4.0" fill="#fff8d8" filter="url(#b2)"/><circle cx="585.0" cy="280.0" r="5.6" fill="#fff8d8" filter="url(#b2)"/><circle cx="665.0" cy="300.0" r="5.6" fill="#fff8d8" filter="url(#b2)"/><circle cx="685.0" cy="335.0" r="5.6" fill="#fff8d8" filter="url(#b2)"/><circle cx="500.0" cy="360.0" r="6.0" fill="#fff8d8" filter="url(#b2)"/><circle cx="515.0" cy="405.0" r="6.8" fill="#fff8d8" filter="url(#b2)"/><circle cx="560.0" cy="335.0" r="4.8" fill="#fff8d8" filter="url(#b2)"/><circle cx="590.0" cy="340.0" r="4.8" fill="#fff8d8" filter="url(#b2)"/><circle cx="625.0" cy="390.0" r="4.8" fill="#fff8d8" filter="url(#b2)"/><circle cx="545.0" cy="435.0" r="5.2" fill="#fff8d8" filter="url(#b2)"/><circle cx="605.0" cy="425.0" r="5.6" fill="#fff8d8" filter="url(#b2)"/><circle cx="675.0" cy="380.0" r="4.0" fill="#fff8d8" filter="url(#b2)"/><circle cx="485.0" cy="390.0" r="4.8" fill="#fff8d8" filter="url(#b2)"/><circle cx="533.0" cy="411.0" r="4.0" fill="#fff8d8" filter="url(#b2)"/><circle cx="661.0" cy="419.0" r="3.2" fill="#fff8d8" filter="url(#b2)"/><circle cx="607.0" cy="206.0" r="2.4" fill="#fff8d8" filter="url(#b2)"/><circle cx="623.0" cy="186.0" r="1.6" fill="#fff8d8" filter="url(#b2)"/><circle cx="473.0" cy="341.0" r="3.2" fill="#fff8d8" filter="url(#b2)"/><circle cx="503.0" cy="436.0" r="2.8" fill="#fff8d8" filter="url(#b2)"/><circle cx="568.0" cy="451.0" r="3.6" fill="#fff8d8" filter="url(#b2)"/><circle cx="643.0" cy="441.0" r="3.2" fill="#fff8d8" filter="url(#b2)"/><circle cx="693.0" cy="361.0" r="2.8" fill="#fff8d8" filter="url(#b2)"/><circle cx="638.0" cy="261.0" r="2.8" fill="#fff8d8" filter="url(#b2)"/></svg>
<div class="a" style="left:1256px;top:36px;width:304px;height:449px;background:#eaeaea;"></div>
<div class="a" style="left:1256px;top:36px;width:304px;height:16px;background:#eeeeee;"></div>
<div class="a" style="left:1256px;top:36px;width:71px;height:16px;background:#2aaed6;"></div>
<div class="a" style="left:1326px;top:36px;width:1px;height:16px;background:#1b7fa0;opacity:0.5"></div>
<div class="t" style="left:1264.50px;top:39.36px;font-size:10.8px;color:#1e2a30;transform:scaleX(0.930);">Properties</div>
<svg style="left:1316px;top:40px;" width="8" height="8" viewBox="0 0 8 8"><path d="M0.5 0.5 L7.5 7.5 M7.5 0.5 L0.5 7.5" stroke="#1e3a48" stroke-width="0.9"/></svg>
<svg style="left:1527px;top:40px;" width="9" height="6" viewBox="0 0 9 6"><path d="M0.5 0.5 L4.5 5 L8.5 0.5" stroke="#aaa" fill="none" stroke-width="0.9"/></svg>
<svg style="left:1538px;top:39px;" width="9" height="9" viewBox="0 0 9 9"><rect x="0.5" y="3" width="5" height="5" fill="none" stroke="#aaa" stroke-width="0.9"/><rect x="3" y="0.5" width="5" height="5" fill="none" stroke="#aaa" stroke-width="0.9"/></svg>
<svg style="left:1549.5px;top:39.5px;" width="9" height="9" viewBox="0 0 9 9"><path d="M0.5 0.5 L8.5 8.5 M8.5 0.5 L0.5 8.5" stroke="#aaa" stroke-width="0.9"/></svg>
<div class="a" style="left:1256px;top:52px;width:304px;height:1.5px;background:#3ab6dc;"></div>
<div class="a" style="left:1554px;top:53px;width:6px;height:432px;background:#bdbdbd;"></div>
<div class="a" style="left:1554px;top:53px;width:6px;height:34px;background:#bdbdbd;"></div>
<div class="a" style="left:1554px;top:87px;width:6px;height:243px;background:#9f9f9f;"></div>
<div class="a" style="left:1256px;top:53px;width:299px;height:431px;overflow:hidden">
<div class="a" style="left:-1256px;top:-53px;width:1564px;height:768px">
<div class="a" style="left:1346px;top:48px;width:177px;height:17.5px;background:#e9e9e9;border:1px solid #d4d4d4;"></div>
<div class="t" style="left:1315.44px;top:53.97px;font-size:8.3px;color:#404040;transform:scaleX(0.790);">ID</div>
<div class="t" style="left:1349.50px;top:53.97px;font-size:8.3px;color:#3a3a3a;transform:scaleX(0.973);">cubeModel</div>
<div class="t" style="left:1539.42px;top:52.53px;font-size:10px;color:#a8a8a8;">@</div>
<div class="a" style="left:1346px;top:69px;width:177px;height:17px;background:#e9e9e9;border:1px solid #d4d4d4;"></div>
<div class="t" style="left:1304.51px;top:73.47px;font-size:8.3px;color:#404040;transform:scaleX(0.790);">Name</div>
<div class="t" style="left:1409.00px;top:73.47px;font-size:8.3px;color:#333;transform:scaleX(0.906);">Add Annotation</div>
<div class="a" style="left:1256px;top:92px;width:299px;height:12.5px;background:#dcdcdc;"></div>
<svg style="left:1259px;top:96.75px;" width="6" height="4" viewBox="0 0 6 4"><path d="M0 0 H6 L3 4 Z" fill="#444"/></svg>
<div class="t" style="left:1268.50px;top:94.22px;font-size:8.3px;color:#444;transform:scaleX(0.900);">MODEL</div>
<div class="a" style="left:1346px;top:110px;width:177px;height:17px;background:#e9e9e9;border:1px solid #d4d4d4;"></div>
<div class="t" style="left:1301.22px;top:114.47px;font-size:8.3px;color:#404040;transform:scaleX(0.790);">Source</div>
<div class="t" style="left:1349.50px;top:114.47px;font-size:8.3px;color:#36a9d0;transform:scaleX(0.777);">#Cube</div>
<svg style="left:1509px;top:116.0px;" width="11" height="6" viewBox="0 0 11 6"><path d="M0.5 0.5 L5.5 5 L10.5 0.5" stroke="#777" fill="none" stroke-width="0.9"/></svg>
<svg style="left:1539px;top:113px;" width="11" height="11" viewBox="0 0 11 11"><circle cx="5.5" cy="5.5" r="5" fill="#555"/><path d="M5.5 2.5 V8.5 M2.5 5.5 H8.5" stroke="#eee" stroke-width="1.1"/></svg>
<div class="a" style="left:1346px;top:131px;width:17.5px;height:17px;background:#e9e9e9;border:1px solid #d4d4d4;"></div>
<div class="t" style="left:1276.44px;top:135.47px;font-size:8.3px;color:#404040;transform:scaleX(0.790);">Casts Shadows</div>
<svg style="left:1350px;top:136px;" width="10" height="8" viewBox="0 0 10 8"><path d="M1 4 L3.8 6.8 L9 1" stroke="#222" fill="none" stroke-width="1.3"/></svg>
<div class="t" style="left:1367.00px;top:135.47px;font-size:8.3px;color:#444;transform:scaleX(0.839);">true</div>
<div class="a" style="left:1346px;top:151px;width:17.5px;height:17px;background:#e9e9e9;border:1px solid #d4d4d4;"></div>
<div class="t" style="left:1266.24px;top:155.47px;font-size:8.3px;color:#404040;transform:scaleX(0.790);">Receives Shadows</div>
<svg style="left:1350px;top:156px;" width="10" height="8" viewBox="0 0 10 8"><path d="M1 4 L3.8 6.8 L9 1" stroke="#222" fill="none" stroke-width="1.3"/></svg>
<div class="t" style="left:1367.00px;top:155.47px;font-size:8.3px;color:#444;transform:scaleX(0.839);">true</div>
<div class="a" style="left:1346px;top:171px;width:17.5px;height:17px;background:#e9e9e9;border:1px solid #d4d4d4;"></div>
<div class="t" style="left:1297.22px;top:175.47px;font-size:8.3px;color:#404040;transform:scaleX(0.790);">Pickable</div>
<svg style="left:1350px;top:176px;" width="10" height="8" viewBox="0 0 10 8"><path d="M1 4 L3.8 6.8 L9 1" stroke="#222" fill="none" stroke-width="1.3"/></svg>
<div class="t" style="left:1367.00px;top:175.47px;font-size:8.3px;color:#444;transform:scaleX(0.839);">true</div>
<div class="a" style="left:1346px;top:191.3px;width:177px;height:17.399999999999977px;background:#e9e9e9;border:1px solid #d4d4d4;"></div>
<div class="t" style="left:1295.40px;top:195.97px;font-size:8.3px;color:#404040;transform:scaleX(0.790);">Materials</div>
<div class="t" style="left:1349.50px;top:195.97px;font-size:8.3px;color:#3a3a3a;transform:scaleX(0.821);">cubeMaterial</div>
<svg style="left:1509px;top:197.5px;" width="11" height="6" viewBox="0 0 11 6"><path d="M0.5 0.5 L5.5 5 L10.5 0.5" stroke="#777" fill="none" stroke-width="0.9"/></svg>
<svg style="left:1540px;top:196px;" width="8" height="8" viewBox="0 0 8 8"><path d="M0.5 0.5 L7.5 7.5 M7.5 0.5 L0.5 7.5" stroke="#555" stroke-width="1"/></svg>
<div class="a" style="left:1346px;top:212px;width:17.5px;height:17px;background:#e9e9e9;border:1px solid #d4d4d4;"></div>
<svg style="left:1350.5px;top:216.5px;" width="9" height="9" viewBox="0 0 9 9"><path d="M4.5 0.5 V8.5 M0.5 4.5 H8.5" stroke="#222" stroke-width="1.2"/></svg>
<div class="a" style="left:1346px;top:232.2px;width:177px;height:17.19999999999999px;background:#e9e9e9;border:1px solid #d4d4d4;"></div>
<div class="t" style="left:1293.21px;top:236.77px;font-size:8.3px;color:#404040;transform:scaleX(0.790);">Geometry</div>
<svg style="left:1509px;top:238.29999999999998px;" width="11" height="6" viewBox="0 0 11 6"><path d="M0.5 0.5 L5.5 5 L10.5 0.5" stroke="#777" fill="none" stroke-width="0.9"/></svg>
<div class="t" style="left:1349.50px;top:236.77px;font-size:8.3px;color:#3a3a3a;transform:scaleX(0.859);">[None]</div>
<div class="a" style="left:1346px;top:252.5px;width:177px;height:17.19999999999999px;background:#e9e9e9;border:1px solid #d4d4d4;"></div>
<div class="t" style="left:1292.11px;top:257.07px;font-size:8.3px;color:#404040;transform:scaleX(0.790);">Instancing</div>
<svg style="left:1509px;top:258.6px;" width="11" height="6" viewBox="0 0 11 6"><path d="M0.5 0.5 L5.5 5 L10.5 0.5" stroke="#777" fill="none" stroke-width="0.9"/></svg>
<div class="t" style="left:1349.50px;top:257.07px;font-size:8.3px;color:#3a3a3a;transform:scaleX(0.859);">[None]</div>
<div class="a" style="left:1346px;top:272.8px;width:177px;height:17.19999999999999px;background:#e9e9e9;border:1px solid #d4d4d4;"></div>
<div class="t" style="left:1281.54px;top:277.37px;font-size:8.3px;color:#404040;transform:scaleX(0.790);">Instance Root</div>
<svg style="left:1509px;top:278.90000000000003px;" width="11" height="6" viewBox="0 0 11 6"><path d="M0.5 0.5 L5.5 5 L10.5 0.5" stroke="#777" fill="none" stroke-width="0.9"/></svg>
<div class="t" style="left:1349.50px;top:277.37px;font-size:8.3px;color:#3a3a3a;transform:scaleX(0.859);">[None]</div>
<div class="a" style="left:1346px;top:292.9px;width:177px;height:17.19999999999999px;background:#e9e9e9;border:1px solid #d4d4d4;"></div>
<div class="t" style="left:1296.48px;top:297.47px;font-size:8.3px;color:#404040;transform:scaleX(0.790);">Skeleton</div>
<svg style="left:1509px;top:299.0px;" width="11" height="6" viewBox="0 0 11 6"><path d="M0.5 0.5 L5.5 5 L10.5 0.5" stroke="#777" fill="none" stroke-width="0.9"/></svg>
<div class="t" style="left:1349.50px;top:297.47px;font-size:8.3px;color:#3a3a3a;transform:scaleX(0.859);">[None]</div>
<div class="a" style="left:1346px;top:313.2px;width:177px;height:17.19999999999999px;background:#e9e9e9;border:1px solid #d4d4d4;"></div>
<div class="t" style="left:1280.21px;top:317.77px;font-size:8.3px;color:#404040;transform:scaleX(0.790);">Morph Targets</div>
<svg style="left:1509px;top:319.3px;" width="11" height="6" viewBox="0 0 11 6"><path d="M0.5 0.5 L5.5 5 L10.5 0.5" stroke="#777" fill="none" stroke-width="0.9"/></svg>
<div class="a" style="left:1346px;top:333.2px;width:17.5px;height:17.0px;background:#e9e9e9;border:1px solid #d4d4d4;"></div>
<svg style="left:1350.5px;top:337.7px;" width="9" height="9" viewBox="0 0 9 9"><path d="M4.5 0.5 V8.5 M0.5 4.5 H8.5" stroke="#222" stroke-width="1.2"/></svg>
<div class="a" style="left:1346px;top:353.5px;width:75px;height:17.19999999999999px;background:#e9e9e9;border:1px solid #d4d4d4;"></div>
<div class="t" style="left:1289.93px;top:357.97px;font-size:8.3px;color:#404040;transform:scaleX(0.790);">Depth Bias</div>
<div class="t" style="left:1412.38px;top:357.97px;font-size:8.3px;color:#3a3a3a;">0</div>
<div class="a" style="left:1256px;top:376.2px;width:299px;height:12.800000000000011px;background:#dcdcdc;"></div>
<svg style="left:1259px;top:381.1px;" width="6" height="4" viewBox="0 0 6 4"><path d="M0 0 H6 L3 4 Z" fill="#444"/></svg>
<div class="t" style="left:1268.50px;top:378.57px;font-size:8.3px;color:#444;transform:scaleX(0.900);">NODE</div>
<div class="a" style="left:1346px;top:395px;width:177px;height:17px;background:#e9e9e9;border:1px solid #d4d4d4;"></div>
<div class="t" style="left:1299.77px;top:399.47px;font-size:8.3px;color:#404040;transform:scaleX(0.790);">Opacity</div>
<div class="t" style="left:1489.50px;top:399.47px;font-size:8.3px;color:#3a3a3a;transform:scaleX(0.836);">1.00</div>
<svg style="left:1509px;top:401.0px;" width="11" height="6" viewBox="0 0 11 6"><path d="M0.5 0.5 L5.5 5 L10.5 0.5" stroke="#777" fill="none" stroke-width="0.9"/></svg>
<div class="a" style="left:1346px;top:415px;width:17.5px;height:17px;background:#e9e9e9;border:1px solid #d4d4d4;"></div>
<div class="t" style="left:1298.43px;top:419.47px;font-size:8.3px;color:#404040;transform:scaleX(0.790);">Visibility</div>
<div class="t" style="left:1367.00px;top:419.47px;font-size:8.3px;color:#36a9d0;transform:scaleX(0.847);">Is Visible</div>
<div class="a" style="left:1346px;top:435px;width:177px;height:17.399999999999977px;background:#e9e9e9;border:1px solid #d4d4d4;"></div>
<div class="t" style="left:1289.93px;top:439.67px;font-size:8.3px;color:#404040;transform:scaleX(0.790);">Static flags</div>
<div class="t" style="left:1349.50px;top:439.67px;font-size:8.3px;color:#3a3a3a;">0</div>
<div class="a" style="left:1256px;top:458.6px;width:299px;height:12.399999999999977px;background:#dcdcdc;"></div>
<svg style="left:1259px;top:463.3px;" width="6" height="4" viewBox="0 0 6 4"><path d="M0 0 H6 L3 4 Z" fill="#444"/></svg>
<div class="t" style="left:1268.50px;top:460.77px;font-size:8.3px;color:#444;transform:scaleX(0.900);">TRANSFORM</div>
<div class="a" style="left:1346px;top:477px;width:177px;height:17px;background:#e9e9e9;border:1px solid #d4d4d4;"></div>
<div class="t" style="left:1289.81px;top:481.47px;font-size:8.3px;color:#404040;transform:scaleX(0.790);">Translation</div>
<div class="t" style="left:1490.00px;top:481.47px;font-size:8.3px;color:#36a9d0;transform:scaleX(0.805);">0.01</div>
<div class="t" style="left:1541.00px;top:481.47px;font-size:8.3px;color:#d04040;">X</div>
</div></div>
<div class="a" style="left:1256px;top:484px;width:304px;height:1px;background:#9a9a9a;"></div>
<div class="a" style="left:1256px;top:485px;width:304px;height:204px;background:#eaeaea;"></div>
<div class="a" style="left:1256px;top:485px;width:304px;height:16px;background:#eeeeee;"></div>
<div class="a" style="left:1256px;top:485px;width:100px;height:16px;background:#e2e2e2;"></div>
<div class="a" style="left:1356px;top:485px;width:1px;height:16px;background:#8a8a8a;"></div>
<div class="t" style="left:1264.00px;top:488.36px;font-size:10.8px;color:#2a2a2a;transform:scaleX(0.940);">Connection View</div>
<svg style="left:1346px;top:489px;" width="8" height="8" viewBox="0 0 8 8"><path d="M0.5 0.5 L7.5 7.5 M7.5 0.5 L0.5 7.5" stroke="#666" stroke-width="0.9"/></svg>
<svg style="left:1527px;top:489px;" width="9" height="6" viewBox="0 0 9 6"><path d="M0.5 0.5 L4.5 5 L8.5 0.5" stroke="#aaa" fill="none" stroke-width="0.9"/></svg>
<svg style="left:1538px;top:488px;" width="9" height="9" viewBox="0 0 9 9"><rect x="0.5" y="3" width="5" height="5" fill="none" stroke="#aaa" stroke-width="0.9"/><rect x="3" y="0.5" width="5" height="5" fill="none" stroke="#aaa" stroke-width="0.9"/></svg>
<svg style="left:1549.5px;top:488.5px;" width="9" height="9" viewBox="0 0 9 9"><path d="M0.5 0.5 L8.5 8.5 M8.5 0.5 L0.5 8.5" stroke="#aaa" stroke-width="0.9"/></svg>
<div class="a" style="left:1256px;top:501px;width:304px;height:15px;background:#ebebeb;"></div>
<div class="t" style="left:1259.50px;top:505.02px;font-size:8.6px;color:#1e1e1e;font-weight:bold;transform:scaleX(0.955);">Connectio...</div>
<div class="a" style="left:1310.5px;top:502px;width:109px;height:14px;background:#a6a6a6;"></div>
<div class="t" style="left:1320.00px;top:505.02px;font-size:8.6px;color:#2a2a2a;font-weight:bold;transform:scaleX(0.951);">Bindings</div>
<div class="t" style="left:1371.00px;top:505.02px;font-size:8.6px;color:#2a2a2a;font-weight:bold;transform:scaleX(0.964);">Properties</div>
<div class="a" style="left:1256px;top:516px;width:304px;height:15px;background:#d3d3d3;"></div>
<svg style="left:1259px;top:519px;" width="9" height="9" viewBox="0 0 9 9"><path d="M4.5 0.5 V8.5 M0.5 4.5 H8.5" stroke="#333" stroke-width="1.1"/></svg>
<svg style="left:1273px;top:523px;" width="9" height="1" viewBox="0 0 9 1"><path d="M0 0.5 H8" stroke="#aaa" stroke-width="1"/></svg>
<div class="a" style="left:1256px;top:532px;width:304px;height:16px;background:#dcdcdc;"></div>
<div class="a" style="left:1303px;top:532px;width:1px;height:16px;background:#e8e8e8;"></div>
<div class="a" style="left:1398px;top:532px;width:1px;height:16px;background:#e8e8e8;"></div>
<div class="t" style="left:1267.75px;top:535.72px;font-size:8.6px;color:#444;transform:scaleX(0.941);">Target</div>
<div class="t" style="left:1326.00px;top:535.72px;font-size:8.6px;color:#444;transform:scaleX(0.886);">Signal Handler</div>
<div class="t" style="left:1467.25px;top:535.72px;font-size:8.6px;color:#444;transform:scaleX(0.899);">Action</div>
<div class="a" style="left:22px;top:689px;width:1538px;height:61px;background:#eaeaea;"></div>
<div class="a" style="left:22px;top:689px;width:1538px;height:17px;background:#eeeeee;"></div>
<div class="a" style="left:22px;top:689px;width:1538px;height:1px;background:#9a9a9a;"></div>
<div class="a" style="left:22px;top:689px;width:53px;height:17px;background:#e2e2e2;"></div>
<div class="t" style="left:30.00px;top:693.36px;font-size:10.8px;color:#2a2a2a;transform:scaleX(0.947);">States</div>
<svg style="left:65px;top:693px;" width="8" height="8" viewBox="0 0 8 8"><path d="M0.5 0.5 L7.5 7.5 M7.5 0.5 L0.5 7.5" stroke="#666" stroke-width="0.9"/></svg>
<div class="a" style="left:75px;top:689px;width:64px;height:17px;background:#a4a4a4;"></div>
<div class="a" style="left:138px;top:689px;width:1px;height:17px;background:#8f8f8f;"></div>
<div class="t" style="left:81.00px;top:693.36px;font-size:10.8px;color:#353535;transform:scaleX(1.015);">Timeline</div>
<svg style="left:128px;top:693px;" width="8" height="8" viewBox="0 0 8 8"><path d="M0.5 0.5 L7.5 7.5 M7.5 0.5 L0.5 7.5" stroke="#d8d8d8" stroke-width="0.9"/></svg>
<svg style="left:1528px;top:693px;" width="9" height="6" viewBox="0 0 9 6"><path d="M0.5 0.5 L4.5 5 L8.5 0.5" stroke="#aaa" fill="none" stroke-width="0.9"/></svg>
<svg style="left:1539px;top:692px;" width="9" height="9" viewBox="0 0 9 9"><rect x="0.5" y="3" width="5" height="5" fill="none" stroke="#aaa" stroke-width="0.9"/><rect x="3" y="0.5" width="5" height="5" fill="none" stroke="#aaa" stroke-width="0.9"/></svg>
<svg style="left:1550.5px;top:692.5px;" width="9" height="9" viewBox="0 0 9 9"><path d="M0.5 0.5 L8.5 8.5 M8.5 0.5 L0.5 8.5" stroke="#aaa" stroke-width="0.9"/></svg>
<div class="a" style="left:22px;top:706px;width:1538px;height:1px;background:#dcdcdc;"></div>
<div class="a" style="left:22.5px;top:708px;width:157.5px;height:41.5px;background:#2aaed6;"></div>
<div class="a" style="left:31.5px;top:717px;width:140.5px;height:24.5px;background:#e8e8e8;border:1.5px solid #e6e020;"></div>
<div class="a" style="left:47.5px;top:720px;width:82px;height:17px;background:#e6e6e6;border:1px solid #d0d0d0;"></div>
<div class="t" style="left:51.00px;top:725.15px;font-size:7.5px;color:#333;transform:scaleX(0.925);">base state</div>
<div class="t" style="left:137.00px;top:725.23px;font-size:8px;color:#333;font-style:italic;transform:scaleX(0.947);">Default</div>
<div class="a" style="left:1534px;top:721px;width:15px;height:15px;background:#ececec;border:1px solid #d0d0d0;"></div>
<svg style="left:1537.5px;top:724.5px;" width="8" height="8" viewBox="0 0 8 8"><path d="M4 0.5 V7.5 M0.5 4 H7.5" stroke="#222" stroke-width="1.3"/></svg>
<div class="a" style="left:1555px;top:707px;width:5px;height:43px;background:#bdbdbd;"></div>
<div class="a" style="left:1555px;top:707px;width:5px;height:40px;background:#9f9f9f;"></div>
<div class="a" style="left:1560px;top:35px;width:1px;height:715px;background:#8a8a8a;"></div>
<div class="a" style="left:1561px;top:35px;width:3px;height:733px;background:#d8d8d8;"></div>
<div class="a" style="left:1561px;top:52.5px;width:3px;height:1.2px;background:#333;"></div>
<div class="a" style="left:1561px;top:52.5px;width:1.2px;height:6px;background:#333;"></div>
</body></html>
